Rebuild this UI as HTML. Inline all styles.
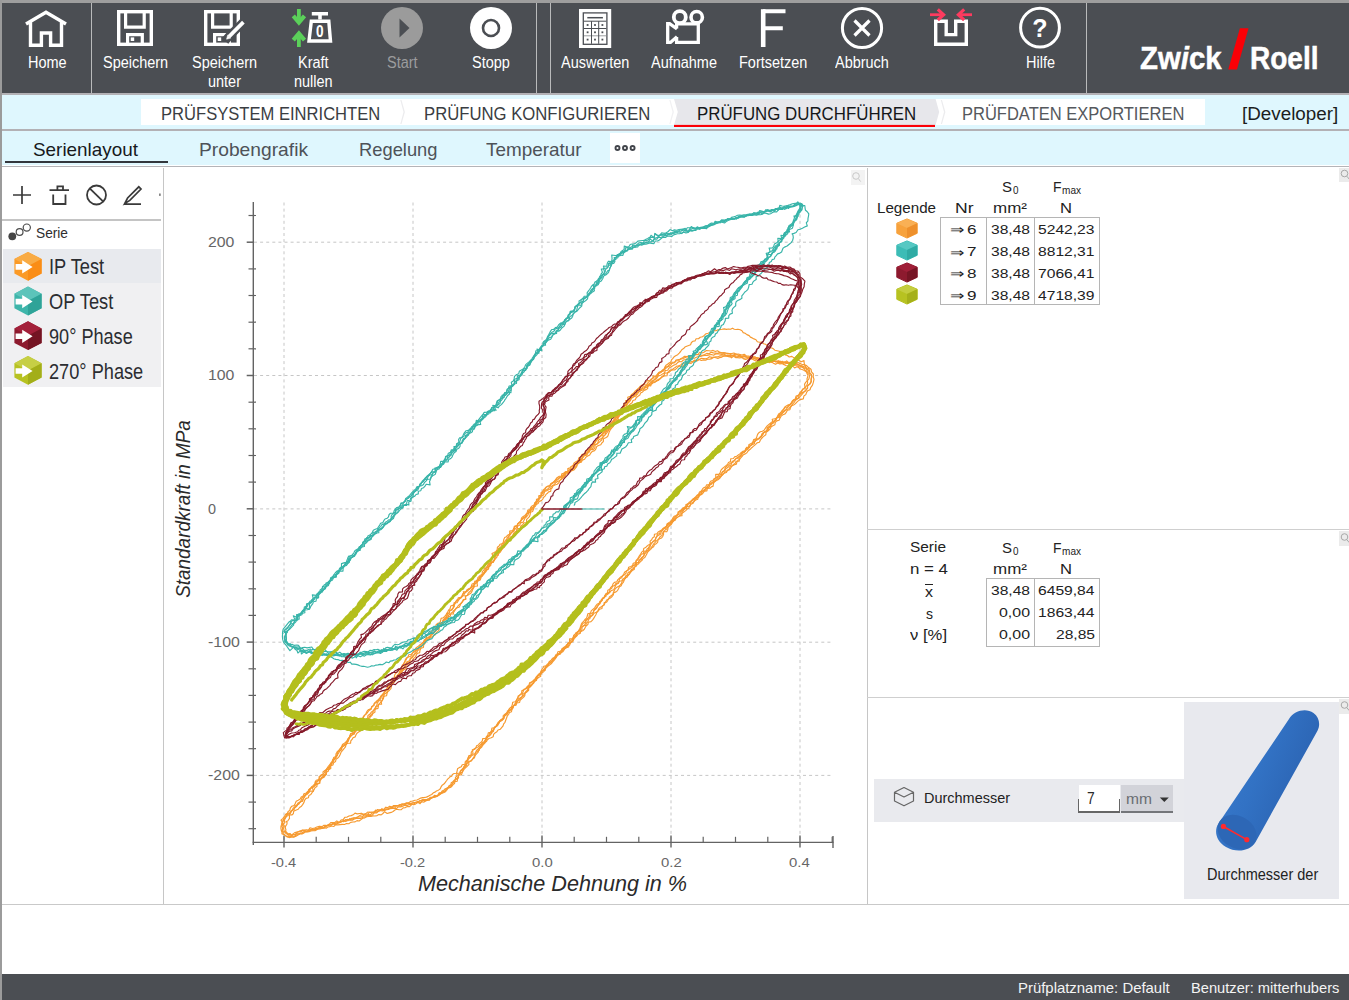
<!DOCTYPE html>
<html><head><meta charset="utf-8"><title>testXpert</title>
<style>
html,body{margin:0;padding:0;}
html{width:1349px;height:1000px;overflow:hidden;}
body{width:1349px;height:1000px;position:relative;overflow:hidden;background:#fff;font-family:"Liberation Sans",sans-serif;}
.a{position:absolute;}
.t{position:absolute;white-space:nowrap;transform-origin:0 50%;display:block;}
svg{position:absolute;left:0;top:0;overflow:visible;}
</style></head><body>

<div class="a" style="left:0px;top:0px;width:1349px;height:3px;background:#9e9e9e;"></div>
<div class="a" style="left:2px;top:3px;width:1347px;height:90px;background:#4b4e53;"></div>
<div class="a" style="left:2px;top:92.5px;width:1347px;height:2.0px;background:#b3b1b5;"></div>
<div class="a" style="left:2px;top:94.5px;width:1347px;height:34.0px;background:#dff7fe;"></div>
<div class="a" style="left:2px;top:128.6px;width:1347px;height:2.0999999999999943px;background:#b3b1b5;"></div>
<div class="a" style="left:2px;top:130.7px;width:1347px;height:34.20000000000002px;background:#dff7fe;"></div>
<div class="a" style="left:2px;top:166px;width:1347px;height:1.1999999999999886px;background:#b4b4b8;"></div>
<div class="a" style="left:0px;top:0px;width:2px;height:1000px;background:#9b9b9b;"></div>
<div class="a" style="left:2px;top:974px;width:1347px;height:26px;background:#4b4e53;"></div>
<div class="a" style="left:91px;top:3px;width:1.2999999999999972px;height:89.5px;background:#b9babb;"></div>
<div class="a" style="left:536px;top:3px;width:1.2999999999999545px;height:89.5px;background:#b9babb;"></div>
<div class="a" style="left:550px;top:3px;width:1.2999999999999545px;height:89.5px;background:#b9babb;"></div>
<div class="a" style="left:1086px;top:3px;width:1.2999999999999545px;height:89.5px;background:#b9babb;"></div>
<span class="t" style="left:27.5px;top:53.0px;font-size:15.8px;line-height:19px;color:#ffffff;transform:scaleX(0.9161);">Home</span>
<span class="t" style="left:102.9px;top:53.0px;font-size:15.8px;line-height:19px;color:#ffffff;transform:scaleX(0.9161);">Speichern</span>
<span class="t" style="left:191.8px;top:53.0px;font-size:15.8px;line-height:19px;color:#ffffff;transform:scaleX(0.9161);">Speichern</span>
<span class="t" style="left:207.9px;top:72.0px;font-size:15.8px;line-height:19px;color:#ffffff;transform:scaleX(0.9161);">unter</span>
<span class="t" style="left:297.7px;top:53.0px;font-size:15.8px;line-height:19px;color:#ffffff;transform:scaleX(0.9161);">Kraft</span>
<span class="t" style="left:293.7px;top:72.0px;font-size:15.8px;line-height:19px;color:#ffffff;transform:scaleX(0.9161);">nullen</span>
<span class="t" style="left:386.7px;top:53.0px;font-size:15.8px;line-height:19px;color:#9b9c9e;transform:scaleX(0.9161);">Start</span>
<span class="t" style="left:472.1px;top:53.0px;font-size:15.8px;line-height:19px;color:#ffffff;transform:scaleX(0.9161);">Stopp</span>
<span class="t" style="left:561.3px;top:53.0px;font-size:15.8px;line-height:19px;color:#ffffff;transform:scaleX(0.9161);">Auswerten</span>
<span class="t" style="left:651.0px;top:53.0px;font-size:15.8px;line-height:19px;color:#ffffff;transform:scaleX(0.9161);">Aufnahme</span>
<span class="t" style="left:738.8px;top:53.0px;font-size:15.8px;line-height:19px;color:#ffffff;transform:scaleX(0.9161);">Fortsetzen</span>
<span class="t" style="left:835.0px;top:53.0px;font-size:15.8px;line-height:19px;color:#ffffff;transform:scaleX(0.9161);">Abbruch</span>
<span class="t" style="left:1025.5px;top:53.0px;font-size:15.8px;line-height:19px;color:#ffffff;transform:scaleX(0.9161);">Hilfe</span>
<svg width="1349" height="100" viewBox="0 0 1349 100" fill="none" stroke="#fff">
<path d="M26 24 L46 12.2 L66 24 M30.5 22 V45.3 H41.4 V33 H50.6 V45.3 H61.5 V22" stroke-width="3.4" stroke-linejoin="miter"/>
<rect x="118.7" y="11.7" width="32.6" height="32.6" stroke-width="3.4"/>
<path d="M125.6 11 V27.2 H144.2 V11" stroke-width="3.2"/>
<path d="M127.6 45 V34.7 H142.3 V45" stroke-width="3.2"/>
<rect x="130.7" y="37.4" width="3.5" height="3.6" fill="#fff" stroke="none"/>
<rect x="205.7" y="11.7" width="32.6" height="32.6" stroke-width="3.4"/>
<path d="M212.6 11 V27.2 H231.2 V11" stroke-width="3.2"/>
<path d="M214.6 45 V34.7 H229.3 V45" stroke-width="3.2"/>
<rect x="217.7" y="37.4" width="3.5" height="3.6" fill="#fff" stroke="none"/>
<path d="M225 41 L228.5 37 L243.4 22" stroke="#4b4e53" stroke-width="8.6"/>
<path d="M229 36.6 L243.4 22.1" stroke-width="3.7" stroke-linecap="butt"/>
<path d="M226.6 39.2 L227.6 35.2 L230.6 38.1 Z" fill="#fff" stroke="#fff" stroke-width="0.6"/>
<path d="M298.9 9 V21" stroke="#5bd05a" stroke-width="3.8"/>
<path d="M293.3 15.8 L298.9 22.4 L304.5 15.8" stroke="#5bd05a" stroke-width="4.2" stroke-linejoin="miter"/>
<path d="M298.9 47 V35" stroke="#5bd05a" stroke-width="3.8"/>
<path d="M293.3 40.2 L298.9 33.6 L304.5 40.2" stroke="#5bd05a" stroke-width="4.2" stroke-linejoin="miter"/>
<path d="M311.3 21.2 H328.8 L330.5 41 H309 Z" stroke-width="3.4" stroke-linejoin="miter"/>
<path d="M320 19.5 V14 M311.8 13.8 H328" stroke-width="3.6"/>
<text x="319.8" y="36.9" font-family="Liberation Sans" font-weight="bold" font-size="16" fill="#fff" stroke="none" text-anchor="middle" transform="translate(319.8 0) scale(0.85 1) translate(-319.8 0)">0</text>
<circle cx="402" cy="28" r="21" fill="#9b9b9b" stroke="none"/>
<path d="M399.5 18.5 L409.5 28 L399.5 37.5 Z" fill="#4b4e53" stroke="none"/>
<circle cx="491" cy="28" r="21" fill="#fff" stroke="none"/>
<circle cx="491" cy="28" r="8" stroke="#4b4e53" stroke-width="2.6"/>
<rect x="579" y="9" width="32.2" height="39" fill="#fff" stroke="none"/>
<rect x="583.3" y="12.9" width="23.6" height="31.4" stroke="#4b4e53" stroke-width="1.3" fill="none"/>
<path d="M587.3 17.7 H602.9" stroke="#4b4e53" stroke-width="1.5"/>
<path d="M584 21.2 H606.3 M584 28.5 H606.3" stroke="#4b4e53" stroke-width="1"/>
<path d="M584 35.8 H606.3" stroke="#9c9ea1" stroke-width="1"/>
<path d="M591.5 21.2 V43.8 M598.7 21.2 V43.8" stroke="#4b4e53" stroke-width="1"/>
<rect x="586.7" y="24.1" width="1.8" height="1.8" fill="#4b4e53" stroke="none"/>
<rect x="594.1" y="24.1" width="1.8" height="1.8" fill="#4b4e53" stroke="none"/>
<rect x="601.5" y="24.1" width="1.8" height="1.8" fill="#4b4e53" stroke="none"/>
<rect x="586.7" y="31.4" width="1.8" height="1.8" fill="#4b4e53" stroke="none"/>
<rect x="594.1" y="31.4" width="1.8" height="1.8" fill="#4b4e53" stroke="none"/>
<rect x="601.5" y="31.4" width="1.8" height="1.8" fill="#4b4e53" stroke="none"/>
<rect x="586.7" y="38.7" width="1.8" height="1.8" fill="#4b4e53" stroke="none"/>
<rect x="594.1" y="38.7" width="1.8" height="1.8" fill="#4b4e53" stroke="none"/>
<rect x="601.5" y="38.7" width="1.8" height="1.8" fill="#4b4e53" stroke="none"/>
<circle cx="679.8" cy="17.2" r="6" stroke-width="3.8"/>
<circle cx="696.7" cy="17.2" r="5.7" stroke-width="3.6"/>
<path d="M676.6 28.4 V23.9 H698.3 V42.3 H676.6 V37" stroke-width="3.3" stroke-linejoin="miter"/>
<path d="M677 28.8 L669.6 23.7 H667.7 V42.4 H670.5 L677 36.8" stroke-width="3.3" stroke-linejoin="miter"/>
<path d="M763.2 47 V9.2" stroke-width="4.6"/><path d="M763 11.2 H785.5 M763 28.2 H782.8" stroke-width="4"/>
<circle cx="862" cy="28" r="19.6" stroke-width="3"/>
<path d="M854.5 20.5 L869.5 35.5 M869.5 20.5 L854.5 35.5" stroke-width="3.2"/>
<path d="M935.7 21.3 H946.2 V34.6 H955.7 V21.3 H966.3 V44.3 H935.7 Z" stroke-width="3.4" stroke-linejoin="miter"/>
<path d="M930 14.7 H943" stroke="#fd3b5f" stroke-width="2.8"/>
<path d="M937.8 9.4 L943.6 14.7 L937.8 20" stroke="#fd3b5f" stroke-width="3.2" stroke-linejoin="miter"/>
<path d="M972 14.7 H959" stroke="#fd3b5f" stroke-width="2.8"/>
<path d="M964.2 9.4 L958.4 14.7 L964.2 20" stroke="#fd3b5f" stroke-width="3.2" stroke-linejoin="miter"/>
<circle cx="1040" cy="27.7" r="19.4" stroke-width="3"/>
<text x="1040" y="37" font-family="Liberation Sans" font-weight="bold" font-size="25" fill="#fff" stroke="none" text-anchor="middle">?</text>
<path d="M1239.9 28.2 L1248.5 28.2 L1236.9 69.4 L1228.3 69.4 Z" fill="#fb0006" stroke="none"/>
</svg>
<span class="t" style="left:1140.4px;top:39.4px;font-size:32px;line-height:38px;color:#ffffff;transform:scaleX(0.9177);font-weight:bold;-webkit-text-stroke:0.5px #fff;">Zw<i>i</i>ck</span>
<span class="t" style="left:1249.7px;top:39.4px;font-size:32px;line-height:38px;color:#ffffff;transform:scaleX(0.8756);font-weight:bold;-webkit-text-stroke:0.5px #fff;">Roell</span>
<div class="a" style="left:141px;top:99px;width:1064px;height:26px;background:#ffffff;"></div>
<svg width="1349" height="200" viewBox="0 0 1349 200">
<path d="M674 99 H935.6 L939.2 112 L935.6 125 H674 L677.8 112 Z" fill="#e7e7eb"/>
<path d="M400.3 100 L403.5 112 L400.3 124 L401.5 124 L404.90000000000003 112 L401.5 100 Z" fill="#ececee"/>
<path d="M669.3 100 L672.5 112 L669.3 124 L670.5 124 L673.9 112 L670.5 100 Z" fill="#f1f1f3"/>
<path d="M940.8 100 L944.0 112 L940.8 124 L942.0 124 L945.4 112 L942.0 100 Z" fill="#ececee"/>
<rect x="674" y="124.9" width="261" height="2.1" fill="#fb0007"/>
</svg>
<span class="t" style="left:160.8px;top:102.7px;font-size:18.2px;line-height:22px;color:#3a3d42;transform:scaleX(0.9116);">PRÜFSYSTEM EINRICHTEN</span>
<span class="t" style="left:423.5px;top:102.7px;font-size:18.2px;line-height:22px;color:#3a3d42;transform:scaleX(0.9180);">PRÜFUNG KONFIGURIEREN</span>
<span class="t" style="left:697.0px;top:102.7px;font-size:18.2px;line-height:22px;color:#15171a;transform:scaleX(0.9273);">PRÜFUNG DURCHFÜHREN</span>
<span class="t" style="left:962.0px;top:102.7px;font-size:18.2px;line-height:22px;color:#55585d;transform:scaleX(0.9079);">PRÜFDATEN EXPORTIEREN</span>
<span class="t" style="left:1241.8px;top:102.8px;font-size:18px;line-height:22px;color:#1b1d20;transform:scaleX(1.0452);">[Developer]</span>
<span class="t" style="left:33.0px;top:137.8px;font-size:19px;line-height:23px;color:#17191c;transform:scaleX(0.9942);">Serienlayout</span>
<span class="t" style="left:199.0px;top:137.8px;font-size:19px;line-height:23px;color:#4e5258;transform:scaleX(1.0119);">Probengrafik</span>
<span class="t" style="left:359.0px;top:137.8px;font-size:19px;line-height:23px;color:#4e5258;transform:scaleX(0.9651);">Regelung</span>
<span class="t" style="left:486.0px;top:137.8px;font-size:19px;line-height:23px;color:#4e5258;transform:scaleX(0.9939);">Temperatur</span>
<div class="a" style="left:4.5px;top:161px;width:163.3px;height:2.1999999999999886px;background:#33373d;"></div>
<div class="a" style="left:610.1px;top:133px;width:29.799999999999955px;height:29.900000000000006px;background:#ffffff;"></div>
<svg width="1349" height="200" viewBox="0 0 1349 200" fill="none" stroke="#42454b" stroke-width="1.9"><circle cx="617.5" cy="148" r="2"/><circle cx="625" cy="148" r="2"/><circle cx="632.6" cy="148" r="2"/></svg>
<div class="a" style="left:162.5px;top:167.5px;width:1.1999999999999886px;height:736.5px;background:#c6c6c6;"></div>
<div class="a" style="left:2px;top:219.2px;width:159px;height:1.4000000000000057px;background:#c4c4c4;"></div>
<div class="a" style="left:3px;top:249px;width:158px;height:33.5px;background:#e8eaee;"></div>
<div class="a" style="left:3px;top:282.5px;width:158px;height:104.5px;background:#f0f0f2;"></div>
<svg width="400" height="400" viewBox="0 0 400 400" fill="none" stroke="#3a3a3a" stroke-width="1.7">
<path d="M22 186 V204 M13 195 H31"/>
<path d="M49.5 190.2 H69 M57.4 190 V186.4 H63 V190 M53.2 194.6 V204 H65.5 V194.6" stroke-width="1.8"/>
<circle cx="96.5" cy="195" r="9.5" stroke-width="1.8"/><path d="M89.7 188.3 L103.3 201.7" stroke-width="1.8"/>
<path d="M124 204.1 H141 M124.8 203.4 L127.6 198 L138.8 186.8 L141 189 L129.8 200.4 Z" stroke-width="1.7"/>
<rect x="159.2" y="193.5" width="1.4" height="2.4" fill="#666" stroke="none"/>
<circle cx="26.8" cy="227.6" r="3.6" stroke="#4c4c4c" stroke-width="1.2" fill="#fff"/>
<circle cx="19.6" cy="232" r="3.4" stroke="#4c4c4c" stroke-width="1.2" fill="#fff"/>
<circle cx="12.3" cy="236.3" r="3.9" fill="#454545" stroke="none"/>
<path d="M28.0 251.9 L41.6 259.1 L41.6 273.5 L28.0 280.7 L14.4 273.5 L14.4 259.1 Z" fill="#fb9a26" stroke="none"/>
<path d="M28.0 251.9 L41.6 259.1 L28.0 266.3 L14.4 259.1 Z" fill="#f9ab44" stroke="none"/>
<path d="M41.6 259.1 L41.6 273.5 L28.0 280.7 L28.0 266.3 Z" fill="#fa8d16" stroke="none"/>
<path d="M15.6 264.1 H22.2 V260.3 L32.6 266.9 L22.2 273.5 V269.7 H15.6 Z" fill="#fff" stroke="none"/>
<path d="M28.0 286.6 L41.6 293.8 L41.6 308.2 L28.0 315.4 L14.4 308.2 L14.4 293.8 Z" fill="#3db5aa" stroke="none"/>
<path d="M28.0 286.6 L41.6 293.8 L28.0 301.0 L14.4 293.8 Z" fill="#5cc4ba" stroke="none"/>
<path d="M41.6 293.8 L41.6 308.2 L28.0 315.4 L28.0 301.0 Z" fill="#2fa398" stroke="none"/>
<path d="M15.6 298.8 H22.2 V295.0 L32.6 301.6 L22.2 308.2 V304.4 H15.6 Z" fill="#fff" stroke="none"/>
<path d="M28.0 321.3 L41.6 328.5 L41.6 342.9 L28.0 350.1 L14.4 342.9 L14.4 328.5 Z" fill="#8d1a2e" stroke="none"/>
<path d="M28.0 321.3 L41.6 328.5 L28.0 335.7 L14.4 328.5 Z" fill="#a3203a" stroke="none"/>
<path d="M41.6 328.5 L41.6 342.9 L28.0 350.1 L28.0 335.7 Z" fill="#741423" stroke="none"/>
<path d="M15.6 333.5 H22.2 V329.7 L32.6 336.3 L22.2 342.9 V339.1 H15.6 Z" fill="#fff" stroke="none"/>
<path d="M28.0 356.0 L41.6 363.2 L41.6 377.6 L28.0 384.8 L14.4 377.6 L14.4 363.2 Z" fill="#b7c221" stroke="none"/>
<path d="M28.0 356.0 L41.6 363.2 L28.0 370.4 L14.4 363.2 Z" fill="#c6cf45" stroke="none"/>
<path d="M41.6 363.2 L41.6 377.6 L28.0 384.8 L28.0 370.4 Z" fill="#a3ae19" stroke="none"/>
<path d="M15.6 368.2 H22.2 V364.4 L32.6 371.0 L22.2 377.6 V373.8 H15.6 Z" fill="#fff" stroke="none"/>
</svg>
<span class="t" style="left:36.0px;top:224.7px;font-size:14.3px;line-height:17px;color:#2e2e2e;transform:scaleX(0.9586);">Serie</span>
<span class="t" style="left:48.8px;top:254.3px;font-size:22px;line-height:26px;color:#2b2d31;transform:scaleX(0.8307);">IP Test</span>
<span class="t" style="left:48.8px;top:289.2px;font-size:22px;line-height:26px;color:#2b2d31;transform:scaleX(0.8290);">OP Test</span>
<span class="t" style="left:48.8px;top:323.8px;font-size:22px;line-height:26px;color:#2b2d31;transform:scaleX(0.8226);">90° Phase</span>
<span class="t" style="left:48.8px;top:358.5px;font-size:22px;line-height:26px;color:#2b2d31;transform:scaleX(0.8264);">270° Phase</span>
<div class="a" style="left:2px;top:903.6px;width:1347px;height:1.3999999999999773px;background:#c9c9c9;"></div>
<div class="a" style="left:866.5px;top:167.5px;width:1.2000000000000455px;height:736.5px;background:#c6c6c6;"></div>
<div class="a" style="left:867px;top:529.2px;width:482px;height:1.1999999999999318px;background:#cfcfcf;"></div>
<div class="a" style="left:867px;top:697px;width:482px;height:1.2000000000000455px;background:#cfcfcf;"></div>
<div class="a" style="left:850.5px;top:170px;width:14.0px;height:14.5px;background:#f3f3f3;"></div>
<svg width="1349" height="1000" viewBox="0 0 1349 1000" fill="none" stroke="#c9c9c9" stroke-width="1"><circle cx="856.0" cy="176" r="3.3"/><path d="M858.5 178.8 L860.7 181.6"/></svg>
<div class="a" style="left:1339px;top:167.5px;width:10px;height:14.5px;background:#ebebeb;"></div>
<svg width="1349" height="1000" viewBox="0 0 1349 1000" fill="none" stroke="#a8a8a8" stroke-width="1"><circle cx="1344.5" cy="173.5" r="3.3"/><path d="M1347 176.3 L1349.2 179.1"/></svg>
<div class="a" style="left:1339px;top:531px;width:10px;height:14.5px;background:#ebebeb;"></div>
<svg width="1349" height="1000" viewBox="0 0 1349 1000" fill="none" stroke="#a8a8a8" stroke-width="1"><circle cx="1344.5" cy="537" r="3.3"/><path d="M1347 539.8 L1349.2 542.6"/></svg>
<div class="a" style="left:1339px;top:699px;width:10px;height:14.5px;background:#ebebeb;"></div>
<svg width="1349" height="1000" viewBox="0 0 1349 1000" fill="none" stroke="#a8a8a8" stroke-width="1"><circle cx="1344.5" cy="705" r="3.3"/><path d="M1347 707.8 L1349.2 710.6"/></svg>
<svg width="1349" height="1000" viewBox="0 0 1349 1000" fill="none">
<path d="M284 202.5 V842" stroke="#c6c6c6" stroke-width="1" stroke-dasharray="3 3.1"/>
<path d="M413 202.5 V842" stroke="#c6c6c6" stroke-width="1" stroke-dasharray="3 3.1"/>
<path d="M542 202.5 V842" stroke="#c6c6c6" stroke-width="1" stroke-dasharray="3 3.1"/>
<path d="M671 202.5 V842" stroke="#c6c6c6" stroke-width="1" stroke-dasharray="3 3.1"/>
<path d="M800 202.5 V842" stroke="#c6c6c6" stroke-width="1" stroke-dasharray="3 3.1"/>
<path d="M254 242.2 H833" stroke="#c6c6c6" stroke-width="1" stroke-dasharray="3 3.1"/>
<path d="M254 375.5 H833" stroke="#c6c6c6" stroke-width="1" stroke-dasharray="3 3.1"/>
<path d="M254 508.9 H833" stroke="#c6c6c6" stroke-width="1" stroke-dasharray="3 3.1"/>
<path d="M254 642.2 H833" stroke="#c6c6c6" stroke-width="1" stroke-dasharray="3 3.1"/>
<path d="M254 775.4 H833" stroke="#c6c6c6" stroke-width="1" stroke-dasharray="3 3.1"/>
<path d="M253.3 202 V845" stroke="#636363" stroke-width="1.4"/>
<path d="M252.6 842.4 H833.5" stroke="#636363" stroke-width="1.4"/>
<path d="M248.5 215.5 H256" stroke="#636363" stroke-width="1.2"/>
<path d="M246.7 242.2 H253.3" stroke="#636363" stroke-width="1.5"/>
<path d="M248.5 268.9 H256" stroke="#636363" stroke-width="1.2"/>
<path d="M248.5 295.5 H256" stroke="#636363" stroke-width="1.2"/>
<path d="M248.5 322.2 H256" stroke="#636363" stroke-width="1.2"/>
<path d="M248.5 348.8 H256" stroke="#636363" stroke-width="1.2"/>
<path d="M246.7 375.5 H253.3" stroke="#636363" stroke-width="1.5"/>
<path d="M248.5 402.2 H256" stroke="#636363" stroke-width="1.2"/>
<path d="M248.5 428.8 H256" stroke="#636363" stroke-width="1.2"/>
<path d="M248.5 455.5 H256" stroke="#636363" stroke-width="1.2"/>
<path d="M248.5 482.1 H256" stroke="#636363" stroke-width="1.2"/>
<path d="M246.7 508.8 H253.3" stroke="#636363" stroke-width="1.5"/>
<path d="M248.5 535.5 H256" stroke="#636363" stroke-width="1.2"/>
<path d="M248.5 562.1 H256" stroke="#636363" stroke-width="1.2"/>
<path d="M248.5 588.8 H256" stroke="#636363" stroke-width="1.2"/>
<path d="M248.5 615.4 H256" stroke="#636363" stroke-width="1.2"/>
<path d="M246.7 642.1 H253.3" stroke="#636363" stroke-width="1.5"/>
<path d="M248.5 668.8 H256" stroke="#636363" stroke-width="1.2"/>
<path d="M248.5 695.4 H256" stroke="#636363" stroke-width="1.2"/>
<path d="M248.5 722.1 H256" stroke="#636363" stroke-width="1.2"/>
<path d="M248.5 748.7 H256" stroke="#636363" stroke-width="1.2"/>
<path d="M246.7 775.4 H253.3" stroke="#636363" stroke-width="1.5"/>
<path d="M248.5 802.1 H256" stroke="#636363" stroke-width="1.2"/>
<path d="M248.5 828.7 H256" stroke="#636363" stroke-width="1.2"/>
<path d="M284.0 835.5 V847.5" stroke="#636363" stroke-width="1.4"/>
<path d="M316.2 836.8 V843" stroke="#636363" stroke-width="1.2"/>
<path d="M348.5 836.8 V843" stroke="#636363" stroke-width="1.2"/>
<path d="M380.8 836.8 V843" stroke="#636363" stroke-width="1.2"/>
<path d="M413.0 835.5 V847.5" stroke="#636363" stroke-width="1.4"/>
<path d="M445.2 836.8 V843" stroke="#636363" stroke-width="1.2"/>
<path d="M477.5 836.8 V843" stroke="#636363" stroke-width="1.2"/>
<path d="M509.8 836.8 V843" stroke="#636363" stroke-width="1.2"/>
<path d="M542.0 835.5 V847.5" stroke="#636363" stroke-width="1.4"/>
<path d="M574.2 836.8 V843" stroke="#636363" stroke-width="1.2"/>
<path d="M606.5 836.8 V843" stroke="#636363" stroke-width="1.2"/>
<path d="M638.8 836.8 V843" stroke="#636363" stroke-width="1.2"/>
<path d="M671.0 835.5 V847.5" stroke="#636363" stroke-width="1.4"/>
<path d="M703.2 836.8 V843" stroke="#636363" stroke-width="1.2"/>
<path d="M735.5 836.8 V843" stroke="#636363" stroke-width="1.2"/>
<path d="M767.8 836.8 V843" stroke="#636363" stroke-width="1.2"/>
<path d="M800.0 835.5 V847.5" stroke="#636363" stroke-width="1.4"/>
<path d="M832.2 836.8 V843" stroke="#636363" stroke-width="1.2"/>
<path d="M833 836 V848" stroke="#636363" stroke-width="1.4"/>
<g stroke-linejoin="round" stroke-linecap="round">
<path d="M283.7 832.1L282.1 830.6L282.6 828.3L283.3 826.1L281.7 823.9L282.8 822.3L283.2 820.8L283.7 818.8L286.4 816.3L287.1 815.1L287.6 813.4L289.8 812.9L291.0 811.5L292.6 810.1L294.3 808.8L295.4 806.8L296.9 805.1L298.0 803.0L300.3 802.1L301.3 799.9L302.0 797.7L303.7 796.4L305.1 794.9L306.7 793.4L308.8 792.5L308.7 789.7L310.2 788.4L312.2 787.5L313.9 786.5L314.8 784.6L315.1 782.1L316.2 780.2L318.8 779.5L319.8 777.2L321.2 775.0L323.1 774.3L324.3 772.9L325.0 771.2L326.2 769.7L327.5 768.2L329.2 767.1L329.9 765.2L331.1 763.5L332.4 761.9L332.7 759.5L335.3 758.7L336.4 756.9L337.6 755.0L337.8 752.4L339.7 751.0L341.7 749.7L341.9 747.0L344.0 745.8L345.9 744.3L345.9 742.0L348.3 741.4L348.9 739.4L349.7 737.6L351.0 736.2L352.3 734.7L353.2 732.9L354.7 731.6L355.1 729.4L356.3 727.8L358.1 726.6L358.8 724.6L359.6 722.6L361.6 721.5L363.0 719.9L363.4 717.5L364.3 715.4L366.2 714.1L367.6 712.3L369.0 710.5L371.2 709.2L371.6 706.6L374.1 705.5L374.2 703.3L375.6 702.0L377.4 701.0L378.8 699.7L379.9 698.1L381.0 696.5L382.1 694.9L383.4 693.3L384.9 691.9L385.8 690.0L387.3 688.6L388.8 687.1L389.9 685.3L391.7 684.0L393.0 682.3L395.0 681.2L395.7 679.1L396.7 677.2L398.2 675.6L399.8 674.2L401.6 672.9L402.4 670.9L404.2 669.5L406.2 668.5L405.7 665.4L407.7 664.4L409.7 663.3L411.2 661.9L412.5 660.3L413.4 658.5L415.1 657.3L416.2 655.4L417.1 653.4L419.6 652.8L420.0 650.3L421.0 648.3L423.4 647.5L423.7 645.0L425.1 643.3L425.3 640.7L427.6 639.8L429.5 638.6L429.9 636.2L431.7 634.9L433.4 633.6L434.7 631.9L436.3 630.5L436.4 627.8L438.4 626.8L439.8 625.3L441.6 624.1L443.1 622.8L442.9 620.0L445.9 619.9L446.1 617.6L448.3 616.9L448.7 614.8L450.7 614.0L453.5 614.0L453.0 611.2L454.8 609.6L456.6 608.1L457.9 606.2L459.3 604.5L461.3 603.4L462.4 601.6L463.2 599.6L465.7 599.1L465.3 596.1L467.4 595.3L468.1 593.4L469.4 592.0L470.9 590.7L471.9 589.0L473.3 587.6L473.6 585.3L474.8 583.7L476.9 582.8L477.5 580.6L478.8 578.8L479.9 576.9L482.2 576.3L483.1 574.6L484.6 573.3L484.8 571.0L486.4 569.7L487.2 567.8L489.2 566.8L490.8 565.4L491.0 563.0L493.3 562.1L494.3 560.3L495.0 558.3L495.4 556.0L498.1 555.5L498.7 553.3L499.7 551.5L501.4 550.2L502.6 548.6L504.3 547.3L504.3 544.9L506.5 544.0L507.8 542.5L508.9 541.0L509.3 538.9L510.2 537.2L512.3 536.0L513.3 533.9L514.6 532.2L516.5 530.9L517.2 528.6L517.6 526.2L519.8 525.1L520.5 522.9L522.9 522.2L524.0 520.3L524.9 518.3L526.3 516.8L527.8 515.3L528.6 513.3L530.2 512.1L530.7 509.9L532.3 508.6L533.5 507.1L534.6 505.5L534.7 503.1L536.4 502.1L536.5 499.2L539.0 498.6L538.7 495.7L541.0 495.2L541.0 492.8L542.5 491.6L543.4 490.0L544.7 488.7L545.9 487.3L547.7 486.4L549.8 485.7L550.6 483.9L552.4 482.7L554.3 481.5L555.6 479.6L557.0 477.7L559.3 476.3L561.4 476.0L561.8 473.9L563.7 473.3L565.9 472.8L567.4 471.7L568.8 470.2L570.7 469.4L571.0 466.7L573.2 466.0L574.6 464.4L576.5 463.3L578.6 462.5L579.6 460.4L581.1 458.7L582.7 457.2L584.0 455.4L586.1 454.4L587.3 452.5L589.4 451.6L589.9 449.0L592.5 448.5L593.6 446.6L594.6 444.6L597.0 444.1L598.0 442.2L598.6 440.0L600.5 439.0L602.4 437.8L603.5 435.9L605.4 434.6L606.8 432.8L608.1 431.1L609.3 429.2L611.0 427.8L612.0 425.8L613.2 424.0L613.3 421.4L615.9 420.6L617.3 419.0L617.8 416.7L618.9 415.0L621.1 414.1L620.7 411.3L622.6 410.2L624.4 409.1L623.9 406.3L625.6 405.2L627.0 404.0L627.2 401.7L628.4 400.4L629.6 399.1L630.4 396.5L632.3 394.9L634.0 393.4L635.7 391.9L637.0 389.9L638.6 388.3L639.9 386.5L641.7 385.4L643.6 384.6L644.9 383.0L646.3 381.5L647.9 380.5L650.5 381.1L651.5 379.4L652.8 378.2L653.1 375.8L655.4 376.3L657.3 374.7L658.9 372.9L660.9 371.8L662.3 370.2L664.2 369.1L664.9 366.7L667.5 366.7L668.9 365.2L670.3 363.5L672.7 363.3L674.7 362.6L676.0 360.0L678.4 359.5L680.8 359.2L682.9 358.5L685.0 357.6L687.1 356.7L689.7 357.8L691.7 356.8L693.6 355.2L695.8 354.7L698.0 354.5L700.3 355.2L702.6 355.4L704.7 354.6L706.8 353.4L709.1 353.8L711.1 352.3L713.4 352.9L715.5 353.1L717.6 353.3L719.5 352.6L721.8 352.9L723.9 353.2L726.0 353.3L727.9 353.6L729.9 353.6L731.9 353.5L733.9 353.0L735.9 354.3L738.2 354.1L740.1 354.5L742.0 355.1L744.2 354.3L746.2 355.8L748.3 356.1L750.4 356.6L752.6 356.9L754.8 356.7L756.8 358.0L758.9 358.8L761.0 358.9L763.2 358.9L765.2 359.7L767.5 359.4L769.7 359.3L771.5 362.3L773.9 360.7L775.9 362.0L778.1 361.4L780.3 361.1L782.1 362.4L783.7 364.2L786.2 363.5L788.7 363.4L790.9 364.1L793.0 365.1L795.1 365.5L797.2 365.7L798.9 366.9L800.7 367.0L802.3 367.2L804.3 368.8L805.5 370.5L807.0 371.8L807.8 373.4L809.5 374.9L809.4 376.9L808.9 378.9L807.5 380.7L807.6 383.1L806.7 385.5L805.6 386.9L805.0 388.7L802.6 389.2L801.8 391.2L800.9 393.3L799.0 395.0L796.1 396.0L795.2 399.2L793.6 399.9L792.3 401.0L791.3 402.7L790.4 404.4L788.4 405.3L787.8 407.5L785.0 407.7L783.6 409.3L782.5 411.2L780.7 412.5L779.4 414.3L778.1 416.1L776.7 417.8L775.4 419.5L774.7 421.7L772.9 422.9L771.5 424.3L769.9 425.5L769.3 427.6L767.6 428.6L767.0 430.6L765.3 431.5L763.6 432.5L762.4 433.9L761.3 435.6L760.0 437.1L758.9 438.9L756.1 439.0L755.0 441.0L753.1 442.3L752.1 444.6L750.0 446.0L749.4 447.8L747.0 447.9L745.6 449.0L745.4 451.3L743.2 451.8L741.6 452.8L741.1 455.0L739.6 456.3L737.9 457.3L736.2 458.5L735.0 460.2L733.0 461.0L731.4 462.4L729.8 463.7L728.3 465.2L726.5 466.4L725.1 468.0L724.5 470.5L722.6 471.8L721.2 473.5L719.7 475.1L717.7 476.3L716.0 477.8L714.2 479.2L713.7 481.3L712.3 482.5L710.4 483.3L709.1 484.7L707.8 486.2L706.4 487.6L705.3 489.3L703.4 490.2L702.2 491.9L701.0 493.6L699.8 495.3L698.2 496.6L697.8 499.2L695.7 500.0L694.0 501.2L693.1 503.3L691.1 504.2L689.7 505.8L688.9 507.9L687.1 509.1L685.7 510.6L684.0 511.9L682.3 513.0L680.9 514.5L679.6 516.1L677.7 517.0L676.0 518.2L674.1 519.1L672.7 520.4L671.6 522.0L670.2 523.6L668.1 524.5L666.6 526.0L665.2 527.5L663.1 528.4L661.7 529.9L659.9 531.0L658.1 532.1L656.9 533.8L654.4 534.3L654.3 536.8L652.5 537.9L651.7 539.8L650.1 541.1L650.4 543.9L648.5 544.9L646.9 546.2L645.6 547.6L643.7 548.6L643.3 550.9L641.7 552.1L640.8 553.9L639.5 555.5L638.5 557.2L637.6 559.0L636.1 560.4L635.5 562.6L633.2 563.2L632.7 565.5L630.8 566.5L628.6 567.3L628.1 569.6L626.6 571.0L624.7 572.1L623.7 574.0L622.6 575.8L620.7 576.9L619.2 578.3L617.7 579.8L616.9 581.8L614.4 582.4L613.0 583.9L612.3 586.0L610.8 587.4L609.8 589.2L607.8 590.2L607.6 592.6L605.9 593.8L605.2 595.8L604.2 597.5L602.5 598.6L601.2 600.0L600.7 602.1L599.9 603.9L598.1 605.2L597.2 607.4L595.8 609.1L594.1 610.5L593.1 612.4L592.6 614.8L590.3 615.7L590.1 618.2L588.5 619.7L587.9 621.8L586.3 623.2L585.8 625.4L583.0 625.8L582.0 627.5L581.9 630.0L580.8 631.6L579.7 633.2L576.1 632.7L576.9 635.7L575.6 637.0L574.5 638.5L573.4 639.8L572.7 641.4L570.6 642.9L569.7 645.1L567.7 646.2L566.2 647.4L564.9 648.7L563.9 650.2L562.9 651.7L561.2 652.5L560.2 653.9L558.1 654.5L557.0 656.1L555.9 658.0L554.5 659.8L552.9 661.7L551.2 663.8L549.8 664.8L548.5 665.7L547.2 666.9L546.0 668.2L544.2 669.0L544.1 671.4L542.6 672.6L540.1 673.0L540.8 676.2L538.9 677.2L537.3 678.5L536.0 680.1L534.5 681.6L533.4 683.4L531.8 684.8L530.5 686.5L528.8 687.9L528.6 690.5L526.7 691.8L525.0 693.1L524.0 695.1L522.6 696.7L520.5 697.8L519.6 699.8L517.7 701.0L516.2 702.5L515.0 704.2L513.6 705.7L512.5 707.4L511.8 709.3L509.8 710.4L508.3 711.7L507.4 713.6L505.8 715.0L504.1 716.3L503.5 718.4L501.5 719.5L499.6 720.7L499.3 723.1L497.6 724.4L496.5 726.2L494.5 727.3L493.8 729.4L492.3 730.8L491.8 733.0L490.3 734.4L489.1 736.0L487.3 737.2L486.0 738.7L485.1 740.5L485.1 743.0L482.8 743.7L482.1 745.5L480.7 746.8L479.6 748.3L479.3 750.3L477.6 751.3L475.5 752.5L475.0 755.1L473.8 757.1L472.5 759.0L471.1 760.8L469.1 762.0L467.2 763.3L466.4 765.4L465.2 767.2L463.0 768.2L462.9 770.8L461.7 772.5L460.0 773.6L458.7 775.1L458.2 777.2L457.1 778.7L455.3 779.6L454.2 781.0L453.6 782.8L452.1 783.7L451.1 785.0L449.7 785.7L447.9 787.9L446.1 789.6L444.6 791.1L442.6 791.8L441.1 792.7L440.1 794.5L438.3 794.8L437.0 796.4L435.0 796.9L432.9 797.4L430.4 798.0L429.2 799.7L427.4 800.2L425.6 800.7L424.0 802.1L421.8 801.8L419.9 802.7L417.7 802.6L415.8 803.9L413.8 804.8L411.3 804.2L409.1 804.6L407.1 805.5L404.7 805.2L402.7 806.3L400.6 806.9L398.4 806.8L396.6 808.4L394.4 808.4L392.3 808.5L390.2 808.6L388.3 809.5L386.2 809.5L384.2 810.4L382.0 810.2L379.8 809.8L378.1 811.4L375.6 810.1L374.0 812.0L371.8 812.0L369.7 812.2L367.6 812.1L365.8 813.6L363.9 814.4L361.4 813.2L359.4 813.5L357.3 813.9L355.0 813.1L353.2 814.8L351.2 815.6L349.0 816.0L347.1 817.1L344.8 817.3L343.2 819.6L341.0 820.0L339.4 822.4L336.8 820.9L334.9 822.4L332.8 822.5L330.7 822.6L329.2 824.5L327.4 825.4L325.7 826.2L324.1 827.1L322.5 827.7L319.8 828.0L317.4 829.0L315.1 829.4L312.9 830.0L310.6 829.9L308.6 830.5L306.8 831.2L304.9 831.1L303.3 831.9L301.9 832.8L300.4 833.2L297.2 833.2L295.3 834.8L292.9 834.6L291.5 835.6L289.9 836.7L288.0 834.4L285.9 833.5L284.8 831.4" stroke="#f69a30" stroke-width="1.15" stroke-opacity="1.0"/>
<path d="M282.1 832.8L281.4 830.8L280.9 828.5L281.0 826.1L281.8 823.9L282.5 822.3L281.0 820.2L283.0 818.3L285.1 815.3L285.9 814.1L287.5 813.3L288.1 811.5L289.8 810.4L290.3 808.1L291.6 806.3L294.1 805.6L295.2 803.6L296.2 801.3L298.2 800.2L300.2 799.0L301.2 796.9L303.2 795.9L303.9 793.8L306.3 793.0L307.7 791.5L309.0 789.9L310.4 788.5L311.9 787.3L313.9 786.5L315.3 785.1L315.5 782.5L317.4 781.3L319.4 780.0L321.2 778.3L322.5 776.0L324.5 775.4L326.3 774.5L325.7 771.7L326.7 770.1L328.3 768.9L329.8 767.6L330.8 765.8L331.6 763.8L332.9 762.2L333.8 760.3L334.9 758.5L336.0 756.6L337.1 754.6L338.7 753.1L339.7 751.0L341.1 749.3L342.0 747.1L344.1 745.8L346.1 744.5L346.7 742.6L347.6 740.8L348.1 738.8L349.2 737.3L350.3 735.7L350.7 733.5L352.9 732.7L353.0 730.4L355.3 729.6L356.2 727.7L356.9 725.8L357.8 723.8L359.7 722.7L360.5 720.7L362.6 719.5L363.0 717.1L364.5 715.5L365.8 713.8L366.8 711.7L368.2 709.9L370.7 708.9L372.1 707.0L373.5 705.0L374.5 703.5L376.3 702.6L376.9 700.6L380.3 700.8L380.0 698.2L380.7 696.3L382.3 694.9L383.7 693.5L384.9 691.9L386.6 690.6L387.5 688.7L388.8 687.1L390.0 685.3L391.3 683.7L393.2 682.5L394.5 680.8L394.4 678.1L396.9 677.3L397.5 675.1L399.2 673.8L400.7 672.2L402.5 670.9L403.0 668.6L404.6 667.2L405.3 665.1L406.0 663.0L407.4 661.5L409.7 660.7L410.2 658.5L411.7 657.1L413.4 656.0L414.6 654.2L415.3 652.0L416.6 650.3L417.6 648.3L420.0 647.5L420.2 644.9L422.0 643.6L423.3 641.9L424.6 640.1L426.4 638.8L426.6 636.2L428.2 634.7L430.0 633.4L431.1 631.6L432.9 630.3L433.2 627.8L435.5 627.0L436.1 624.8L437.7 623.4L439.9 622.7L440.6 620.6L441.1 618.4L443.3 617.7L444.8 616.4L445.9 614.8L446.9 613.2L447.9 611.6L448.7 609.9L450.1 608.7L450.7 606.0L453.2 605.1L455.2 603.8L455.8 601.5L457.1 599.7L459.1 598.7L460.8 597.5L462.0 595.9L462.7 593.8L464.7 593.0L466.3 591.8L467.9 590.7L469.2 589.2L470.5 587.8L472.4 586.9L474.0 585.6L474.2 583.1L475.7 581.7L477.5 580.6L478.9 578.9L480.5 577.4L481.9 576.1L483.1 574.6L483.7 572.6L485.2 571.2L485.3 568.9L486.6 567.3L487.5 565.5L488.7 563.9L491.2 563.2L491.1 560.6L491.6 558.3L492.9 556.7L492.0 553.5L494.1 552.6L496.0 551.4L497.2 549.7L497.4 547.3L499.1 546.0L500.0 544.2L502.6 543.5L503.4 541.7L503.8 539.5L504.6 537.6L506.5 536.7L507.6 535.2L509.9 534.1L509.7 531.1L512.6 530.6L513.7 528.6L514.3 526.3L516.9 525.6L518.0 523.7L519.8 522.4L521.0 520.6L522.5 519.1L524.0 517.6L525.7 516.3L526.6 514.4L528.1 512.9L528.7 510.8L531.2 510.3L531.3 507.8L533.4 507.0L534.4 505.3L535.2 503.5L536.7 502.3L538.3 500.8L539.3 498.8L540.1 496.9L541.6 495.7L543.7 494.9L544.1 492.9L545.0 491.3L547.0 490.6L548.6 489.7L550.4 488.7L551.2 487.0L552.4 485.4L554.3 484.4L555.7 482.8L557.6 481.5L559.9 480.4L561.8 478.8L562.2 476.8L564.7 476.8L565.7 475.3L565.7 472.6L568.1 472.4L570.4 471.9L571.9 470.6L574.0 469.9L575.3 468.3L576.7 466.7L577.3 464.2L578.7 462.6L580.7 461.5L581.6 459.3L582.8 457.3L584.2 455.6L586.0 454.3L587.4 452.6L588.7 450.8L589.9 448.9L591.3 447.3L592.7 445.6L594.0 444.0L595.4 442.4L595.9 440.2L597.2 438.7L598.7 437.5L600.5 436.1L601.6 434.3L604.1 433.5L604.5 431.0L605.6 429.2L607.6 428.0L609.1 426.3L610.8 424.9L612.9 423.7L613.2 421.3L614.6 419.7L616.0 418.1L617.2 416.4L619.8 415.6L619.8 413.1L621.8 412.1L623.0 410.5L624.2 408.9L625.7 407.7L626.3 405.8L627.0 403.9L628.2 402.6L629.6 401.5L630.2 399.7L631.9 398.0L633.8 396.6L635.2 394.8L637.6 394.2L638.5 391.9L640.4 390.9L641.6 388.9L643.5 388.1L645.3 387.1L646.7 385.7L648.6 385.1L650.2 384.0L652.2 383.7L653.2 381.9L655.1 381.6L656.9 381.1L658.0 379.6L660.4 378.6L662.3 377.0L664.3 376.0L667.0 375.8L667.4 373.1L669.3 372.2L670.7 370.8L672.2 369.7L674.6 370.0L676.0 368.9L677.4 367.6L678.9 366.0L681.6 366.9L683.3 365.7L684.9 364.2L686.8 363.3L689.0 363.1L691.2 363.4L693.0 361.9L695.0 361.0L697.3 360.8L699.0 359.4L701.4 360.5L703.4 359.9L705.6 360.1L707.6 359.3L709.8 359.1L711.9 358.6L713.8 357.2L715.9 357.7L717.9 358.5L719.7 357.6L721.9 357.1L723.9 356.0L725.8 356.3L727.7 356.4L729.6 356.9L731.6 355.9L733.7 355.2L735.8 355.8L738.0 356.0L739.8 357.0L741.9 356.6L744.1 355.5L746.0 356.8L748.1 357.6L750.3 357.3L752.6 356.8L754.5 358.7L756.9 357.6L759.0 358.0L760.8 360.1L763.1 359.4L765.4 358.6L767.4 360.2L769.5 360.4L771.6 361.1L773.8 361.4L776.0 361.1L778.0 362.3L779.9 362.8L782.0 362.8L784.2 361.8L786.4 362.9L788.6 363.7L790.9 363.7L793.2 364.3L795.4 364.4L797.6 364.0L799.2 365.6L801.2 365.4L802.8 366.2L805.4 367.2L807.1 369.1L808.7 370.7L808.8 373.0L811.4 374.4L811.5 376.8L811.0 379.1L811.4 381.7L810.0 384.1L807.3 385.9L807.4 388.0L806.4 389.7L804.9 391.0L803.5 392.6L802.0 394.3L800.4 396.2L798.6 398.3L795.9 399.9L794.9 401.2L794.0 402.7L792.6 403.9L791.7 405.7L790.1 407.0L788.9 408.7L786.9 409.6L784.6 410.3L783.1 411.9L782.0 413.8L780.4 415.3L778.3 416.3L776.7 417.8L775.7 419.8L773.8 420.9L771.9 421.9L770.4 423.3L768.9 424.5L767.4 425.7L766.2 427.2L765.1 428.7L764.1 430.3L762.4 431.3L760.3 431.8L758.6 432.9L757.5 434.6L756.8 436.7L756.0 438.9L753.6 439.6L752.9 442.1L751.1 443.6L748.8 444.8L748.7 447.1L747.5 448.4L746.1 449.5L745.4 451.4L743.7 452.3L742.2 453.5L741.8 455.8L739.9 456.6L739.7 459.2L738.0 460.3L736.9 462.1L736.3 464.3L733.9 464.9L732.0 466.0L730.9 467.8L729.7 469.6L727.4 470.4L726.4 472.5L724.1 473.3L722.5 474.8L721.1 476.5L719.7 478.3L718.0 479.8L715.7 480.7L714.2 481.8L713.4 483.7L713.1 486.1L711.3 486.9L709.8 488.3L707.3 488.4L706.9 490.9L704.3 491.1L703.2 492.9L701.8 494.4L699.7 495.1L698.7 497.2L696.6 498.0L695.1 499.4L694.2 501.5L692.4 502.6L690.4 503.5L690.1 506.3L687.3 506.4L686.2 508.2L684.3 509.2L683.2 511.0L681.8 512.6L682.0 515.6L679.4 515.9L677.8 517.1L676.1 518.3L675.2 520.2L673.3 521.0L672.0 522.4L670.6 524.0L669.1 525.5L667.7 527.0L666.8 529.0L665.0 530.1L663.9 531.8L662.4 533.2L662.0 535.6L660.2 536.6L659.0 538.3L657.6 539.8L656.2 541.1L654.9 542.7L653.5 544.1L652.6 545.9L651.4 547.4L649.7 548.6L648.6 550.3L646.9 551.4L645.7 552.9L644.1 554.2L643.5 556.3L641.9 557.5L640.6 559.0L639.3 560.5L638.4 562.4L635.9 562.9L635.4 565.1L632.6 565.4L633.4 568.8L631.8 570.2L630.3 571.6L629.4 573.6L628.2 575.2L627.2 577.1L625.0 577.9L624.2 580.0L623.5 582.1L622.1 583.6L621.2 585.7L619.4 586.8L618.5 588.7L617.5 590.6L616.0 591.9L613.8 592.7L613.3 595.0L612.1 596.5L610.6 597.9L608.6 598.7L607.7 600.6L606.6 602.1L604.2 602.6L603.9 604.8L602.6 606.2L600.4 607.2L598.8 608.7L597.9 610.8L596.4 612.3L594.0 613.2L592.9 615.0L591.3 616.4L589.0 617.4L587.7 619.0L586.2 620.5L585.6 622.7L584.8 624.6L583.4 626.1L581.3 627.0L580.7 629.1L580.0 631.0L577.8 631.6L576.5 633.1L576.2 635.2L574.9 636.5L573.1 637.3L573.0 639.4L571.0 640.0L569.7 642.1L567.7 643.3L567.0 645.6L565.5 646.7L564.4 648.2L562.2 648.6L561.4 650.2L560.8 652.1L559.4 653.2L557.8 654.2L556.6 655.8L554.9 657.0L554.1 659.4L552.2 661.0L550.0 662.8L548.6 663.6L548.3 665.6L546.1 666.0L545.2 667.5L545.4 670.1L543.2 670.6L541.7 671.8L540.8 673.6L539.6 675.1L537.7 676.2L536.8 678.0L536.5 680.5L534.2 681.3L532.8 682.9L532.0 685.0L529.6 685.7L528.7 687.8L528.0 690.0L526.0 691.2L524.9 693.0L522.9 694.2L522.1 696.3L520.6 697.9L518.4 698.8L517.8 701.1L516.4 702.6L514.8 704.0L513.7 705.8L511.8 706.8L511.3 709.0L509.7 710.2L507.3 711.0L507.6 713.7L505.9 715.1L504.1 716.2L503.8 718.7L502.4 720.2L500.3 721.3L498.2 722.3L497.2 724.1L496.2 725.9L495.0 727.7L492.0 728.0L491.5 730.2L490.8 732.2L488.3 732.8L487.8 735.1L486.5 736.6L485.6 738.4L482.7 738.6L482.3 740.8L481.1 742.3L479.5 743.4L478.4 745.0L476.5 745.8L476.0 747.7L474.5 748.8L472.8 750.3L471.3 752.1L471.1 754.9L469.9 756.8L467.9 758.1L467.4 760.6L465.9 762.2L466.2 765.2L464.1 766.3L463.5 768.5L462.1 770.1L460.4 771.3L460.3 773.9L458.3 774.8L458.6 777.6L457.5 779.1L457.2 781.3L454.9 781.6L454.5 783.6L453.1 784.6L452.1 786.0L451.0 787.1L448.1 788.1L446.7 790.3L445.2 791.9L443.3 792.8L441.6 793.5L440.0 794.2L438.7 795.5L437.0 796.3L435.1 796.9L432.9 797.5L430.6 798.7L429.4 800.2L427.4 800.1L425.6 800.9L423.4 800.2L421.7 801.4L420.1 803.7L417.4 801.5L415.5 802.8L413.2 802.7L411.1 803.3L408.9 803.4L406.6 803.4L404.6 804.7L402.4 805.0L400.0 804.5L398.0 805.5L395.9 805.6L393.7 805.5L391.9 806.9L389.6 806.3L387.8 807.6L385.5 807.2L384.0 809.5L381.7 808.9L380.0 810.6L378.1 811.5L376.4 813.0L374.1 812.7L372.6 814.9L370.6 815.4L368.4 815.3L366.5 816.3L364.8 817.9L362.8 818.2L361.0 819.6L359.2 821.0L357.0 820.6L355.1 821.9L352.9 822.0L350.7 822.4L348.8 823.7L346.5 823.6L344.5 824.5L342.2 824.4L340.0 824.6L337.8 824.9L335.5 824.6L333.9 826.5L331.6 826.0L329.7 826.6L327.8 827.0L326.2 828.2L324.2 827.8L322.6 828.2L320.0 828.9L317.5 829.3L315.4 830.6L313.0 830.7L310.9 830.9L309.0 831.8L307.0 831.9L305.1 832.0L303.6 833.0L302.2 833.8L300.6 833.8L298.0 835.1L296.0 836.2L294.1 837.1L291.8 836.7L289.9 837.6L286.9 836.8L284.5 835.0L281.8 833.7" stroke="#f69a30" stroke-width="1.15" stroke-opacity="1.0"/>
<path d="M285.6 831.4L285.9 829.5L285.3 828.0L285.6 826.1L286.9 824.2L287.1 822.6L286.1 821.6L287.7 821.0L289.5 818.4L289.4 816.9L289.4 814.9L292.1 814.9L293.4 813.5L293.7 811.1L295.8 810.2L298.1 809.3L299.5 807.5L301.5 806.2L302.8 804.4L304.0 802.4L304.7 800.1L306.0 798.4L308.4 797.8L308.9 795.4L310.9 794.4L312.0 792.7L313.2 791.1L314.2 789.4L315.1 787.6L316.9 786.4L317.1 783.9L319.8 783.3L320.2 780.7L321.5 778.6L324.1 777.3L325.0 775.8L326.2 774.4L326.2 772.1L326.2 769.7L329.0 769.5L329.5 767.4L330.6 765.7L331.3 763.7L332.7 762.1L333.7 760.2L334.7 758.3L335.9 756.5L337.3 754.8L337.1 751.9L339.0 750.5L340.3 748.7L341.9 747.1L342.4 744.5L344.4 743.2L346.1 742.1L347.2 740.5L348.0 738.8L349.4 737.4L349.9 735.4L350.9 733.7L353.6 733.2L355.3 732.1L356.4 730.4L357.4 728.6L358.6 727.0L361.2 726.4L361.2 723.8L363.1 722.6L364.9 721.3L366.1 719.5L367.7 717.9L368.0 715.4L370.0 714.1L371.2 712.2L373.2 710.8L375.2 709.3L375.6 706.6L376.9 705.3L377.2 703.2L378.3 701.7L378.2 699.2L380.8 698.8L381.3 696.7L382.9 695.5L384.1 693.8L384.3 691.4L385.7 689.9L387.2 688.5L387.7 686.2L389.5 685.0L390.0 682.8L391.5 681.2L392.9 679.7L394.2 677.9L394.5 675.6L395.5 673.6L397.1 672.2L398.2 670.3L400.6 669.5L401.9 667.8L402.1 665.3L403.9 664.1L404.6 661.9L405.3 659.9L406.4 658.1L408.2 657.0L410.7 656.3L411.7 654.6L412.9 652.8L414.4 651.3L416.2 650.0L418.2 648.8L419.5 647.1L421.3 645.8L423.3 644.6L424.3 642.6L424.3 639.8L428.1 640.2L429.4 638.5L431.3 637.3L433.0 636.0L435.0 634.9L436.1 633.1L437.6 631.6L439.1 630.2L439.2 627.4L440.7 626.1L441.9 624.4L442.9 622.6L443.4 620.4L445.3 619.4L446.4 617.8L447.1 615.8L447.5 613.7L449.3 612.8L449.6 610.7L451.4 609.9L453.0 608.0L453.6 605.4L454.5 603.2L455.9 601.5L457.7 600.2L458.2 597.9L460.7 597.4L462.2 596.0L463.0 594.1L464.8 593.1L465.9 591.5L467.0 589.9L469.5 589.5L470.7 588.0L471.8 586.4L473.6 585.3L475.1 584.0L476.2 582.2L476.8 580.0L479.3 579.3L480.0 577.0L481.9 576.1L482.7 574.3L484.1 572.9L485.8 571.8L486.7 569.9L488.6 568.8L488.5 566.3L489.6 564.5L491.4 563.3L492.1 561.3L494.5 560.5L494.7 558.1L495.2 555.9L496.1 554.0L497.9 552.8L499.2 551.2L500.3 549.4L501.6 547.9L502.3 545.9L503.6 544.3L504.3 542.3L506.3 541.4L507.0 539.5L508.6 538.3L508.9 536.2L510.4 534.5L511.6 532.6L513.0 530.9L514.5 529.3L514.7 526.6L517.1 525.8L518.0 523.7L519.4 522.1L521.1 520.7L521.4 518.2L522.9 516.7L524.8 515.5L526.4 514.2L527.3 512.3L527.8 510.1L530.2 509.5L530.7 507.3L532.1 505.9L534.0 505.0L534.7 503.1L535.9 501.7L537.4 500.0L538.9 498.5L539.8 496.7L541.4 495.5L542.0 493.6L543.8 492.7L544.4 490.8L546.2 490.0L547.8 489.0L549.1 487.7L550.3 486.2L550.9 484.1L552.4 482.8L554.9 482.1L556.6 480.6L558.4 479.1L560.2 477.2L561.7 476.3L563.5 475.7L564.6 474.2L565.5 472.5L567.9 472.2L568.6 470.1L571.2 469.9L573.1 468.9L574.2 467.1L575.2 465.1L576.3 463.1L578.0 461.8L579.4 460.1L581.5 459.2L582.5 456.9L584.0 455.4L585.0 453.3L586.7 451.9L588.3 450.4L589.6 448.6L591.1 447.1L592.2 445.2L594.1 444.1L594.7 441.8L596.3 440.6L597.2 438.7L598.7 437.4L600.2 435.9L602.7 435.2L603.0 432.6L605.1 431.5L606.9 430.1L607.3 427.7L608.6 426.0L609.5 424.0L611.4 422.7L612.9 421.1L614.1 419.3L614.1 416.8L616.7 416.0L617.1 413.8L620.3 413.5L621.1 411.5L621.7 409.6L622.8 407.9L624.6 406.9L623.7 403.7L625.6 402.8L627.5 402.0L628.8 400.8L629.9 399.4L631.7 397.8L633.4 396.1L634.7 394.2L636.6 393.0L638.2 391.4L639.4 389.5L641.7 389.1L642.6 386.8L645.0 386.7L646.6 385.4L648.2 384.5L649.7 383.3L651.2 382.2L652.4 380.8L654.0 380.0L655.6 379.3L656.8 378.1L658.3 375.9L660.7 375.2L662.6 373.9L664.5 372.8L665.3 370.5L667.7 370.2L668.8 368.3L670.4 367.3L672.1 366.3L673.8 365.1L675.7 364.5L677.4 362.8L679.3 361.5L681.7 361.7L683.4 360.0L685.6 359.6L687.7 358.9L690.2 359.6L692.0 358.1L694.4 358.2L696.4 357.2L698.4 356.6L700.6 356.5L702.7 355.8L704.8 355.5L707.1 355.4L709.2 354.9L711.4 354.5L713.6 355.2L715.6 353.9L717.6 353.6L719.6 354.0L721.8 354.4L723.9 354.1L725.9 355.3L727.8 355.1L729.7 355.9L731.4 357.8L733.6 356.2L735.6 357.6L737.8 357.6L739.7 358.0L741.8 357.4L743.6 358.9L745.7 359.5L747.9 358.6L750.1 358.7L752.2 359.1L754.3 360.3L756.3 361.1L758.6 360.6L760.7 361.2L762.8 361.5L764.9 362.2L767.2 361.3L769.2 362.6L771.5 361.9L773.5 363.3L775.5 364.3L777.8 362.9L779.8 363.9L781.9 363.6L783.7 364.5L785.9 365.6L788.2 365.7L790.5 365.9L792.8 366.2L794.6 367.9L796.9 366.8L798.6 367.6L800.0 368.8L801.2 369.3L803.4 370.0L805.1 371.0L806.5 372.1L807.0 373.7L808.0 375.2L807.7 377.0L807.0 378.7L807.2 380.6L805.7 382.3L804.5 384.4L805.0 386.5L804.3 388.1L802.7 389.3L801.6 391.0L800.0 392.5L798.8 394.8L796.9 396.7L795.3 399.3L793.6 400.0L792.4 401.2L791.5 402.9L790.1 404.1L789.0 405.9L787.4 407.1L786.5 409.2L785.1 410.8L783.4 412.2L781.7 413.6L779.8 414.7L779.4 417.4L776.8 417.8L776.1 420.2L774.2 421.3L772.9 422.9L771.4 424.3L770.7 426.3L768.4 426.7L767.0 428.0L767.1 430.7L765.3 431.5L763.6 432.5L762.1 433.7L761.8 436.1L760.5 437.6L758.9 438.8L756.5 439.4L755.4 441.3L752.9 442.1L751.9 444.4L749.9 445.9L748.7 447.1L748.1 449.0L746.5 450.0L745.0 451.0L744.2 452.8L741.6 452.9L740.9 454.9L739.5 456.1L738.6 458.1L736.1 458.4L734.6 459.8L733.7 461.7L731.8 462.7L731.0 465.0L729.2 466.1L727.7 467.6L725.8 468.8L724.8 470.9L722.5 471.6L721.8 474.1L720.7 476.2L718.2 476.8L716.8 478.6L715.3 480.3L714.1 481.7L712.4 482.7L711.1 484.0L709.1 484.7L708.8 487.2L706.5 487.6L705.0 489.0L703.9 490.7L701.8 491.4L700.4 492.9L698.7 494.1L698.5 496.9L695.8 497.1L694.5 498.7L692.9 500.1L691.0 501.2L689.9 503.0L687.8 503.9L685.8 504.8L686.4 508.4L683.6 508.5L681.7 509.5L680.0 510.8L678.5 512.1L677.7 514.2L676.2 515.5L674.1 516.3L672.9 517.9L672.0 519.7L670.8 521.3L669.1 522.6L667.2 523.7L666.5 525.9L666.0 528.3L663.5 528.7L662.7 530.8L660.1 531.2L659.8 533.6L657.4 534.2L657.0 536.5L655.7 538.0L655.4 540.4L653.5 541.4L652.0 542.7L650.3 543.9L649.6 545.9L648.6 547.7L648.2 549.9L646.6 551.1L644.9 552.2L644.5 554.5L643.6 556.4L642.0 557.6L641.2 559.5L639.1 560.4L638.5 562.5L636.4 563.3L636.5 566.1L634.5 567.1L634.2 569.6L632.2 570.5L630.8 572.1L629.7 573.8L628.3 575.3L626.0 576.1L625.5 578.4L624.0 579.8L622.2 581.0L621.6 583.2L620.4 584.9L618.7 586.2L616.9 587.3L615.3 588.6L614.4 590.6L613.4 592.3L612.8 594.5L611.1 595.7L609.4 596.9L608.8 598.9L606.9 599.8L605.8 601.5L604.9 603.2L604.1 605.0L602.2 605.9L602.0 608.5L599.5 609.3L598.2 611.0L596.7 612.6L595.9 614.7L594.8 616.5L593.7 618.4L592.5 620.1L591.0 621.6L588.4 622.2L587.9 624.5L586.3 625.8L585.2 627.5L584.3 629.3L582.7 630.7L580.6 631.4L580.1 633.5L578.0 634.2L577.0 635.8L575.3 636.8L573.7 637.8L573.1 639.5L572.0 640.9L570.7 643.0L568.0 643.6L566.8 645.3L566.4 647.6L564.7 648.5L562.8 649.2L562.3 651.0L560.0 651.2L559.4 653.2L558.3 654.6L556.7 655.9L555.7 657.7L553.4 658.7L552.1 661.0L550.0 662.8L548.5 663.6L547.9 665.2L546.9 666.7L545.2 667.5L544.5 669.3L543.2 670.6L541.4 671.6L540.3 673.2L538.4 674.2L537.5 676.0L536.9 678.1L534.7 679.0L533.5 680.7L531.7 682.0L529.6 682.9L528.9 685.1L527.2 686.5L525.9 688.3L524.3 689.7L521.9 690.6L521.6 693.1L520.2 694.7L518.2 695.9L517.7 698.2L516.6 700.0L515.3 701.7L512.7 702.3L512.3 704.6L511.6 706.6L510.1 708.0L508.8 709.5L508.0 711.5L506.6 713.0L504.9 714.3L503.2 715.6L503.1 718.2L501.5 719.5L499.8 720.8L498.6 722.5L497.6 724.4L496.2 726.0L494.7 727.4L493.9 729.4L493.3 731.6L491.2 732.6L490.7 734.8L488.9 735.9L487.3 737.2L486.8 739.4L485.7 741.0L484.5 742.6L483.8 744.4L482.4 745.7L481.5 747.4L480.0 748.6L478.0 749.3L478.4 751.9L476.8 753.6L475.2 755.3L474.5 757.7L472.7 759.1L471.3 760.9L468.6 761.5L468.9 764.7L467.3 766.2L465.7 767.6L464.2 769.1L463.0 770.9L462.2 772.9L461.4 774.8L458.7 775.1L458.2 777.3L456.8 778.5L455.5 779.8L454.4 781.2L453.1 782.3L452.4 784.0L451.5 785.4L450.7 786.8L447.6 787.6L446.0 789.4L444.9 791.5L443.0 792.2L441.4 793.1L439.5 793.3L438.5 795.3L436.7 795.8L434.4 795.3L432.8 797.3L430.5 798.3L428.9 798.8L427.1 799.4L425.4 799.9L423.4 800.1L421.4 800.5L419.4 801.1L417.6 802.3L415.5 802.6L413.6 804.2L411.5 804.8L409.6 806.6L407.3 806.4L405.3 807.6L403.1 807.9L401.3 809.7L399.1 809.7L396.8 809.2L394.9 810.0L393.1 811.5L391.2 812.4L389.2 812.9L387.2 813.5L384.6 811.7L382.9 813.5L381.2 814.9L378.9 814.6L377.1 815.6L375.0 816.0L372.9 815.9L370.9 816.4L368.7 816.5L366.7 816.8L364.5 816.8L362.6 817.4L360.7 818.5L358.5 818.2L356.4 818.4L354.3 819.0L352.4 820.2L350.2 820.3L347.7 819.4L345.9 821.5L343.4 820.4L341.5 822.0L339.3 822.2L337.3 823.0L335.1 822.8L332.8 822.5L331.4 825.0L329.1 824.2L327.4 825.5L325.5 825.4L323.6 825.3L322.2 826.6L319.3 826.2L316.9 827.0L314.7 828.0L312.5 828.5L310.0 827.8L308.5 830.1L306.4 829.7L304.6 830.1L303.0 830.7L301.1 830.3L299.8 831.5L296.7 832.0L294.4 832.9L292.7 834.1L291.4 835.1L290.2 833.6L288.2 833.9L286.8 832.6L285.3 831.0" stroke="#f69a30" stroke-width="1.15" stroke-opacity="1.0"/>
<path d="M283.1 832.4L282.0 830.6L282.9 828.3L281.6 826.1L283.0 824.0L282.0 822.2L282.9 820.7L284.3 819.1L286.1 816.1L286.3 814.4L288.4 814.1L290.3 813.4L291.3 811.7L292.3 809.8L293.4 807.9L295.8 807.2L297.3 805.5L298.6 803.6L300.2 801.9L302.2 800.7L303.3 798.8L304.5 797.0L305.6 795.4L307.4 794.0L308.8 792.5L310.1 791.0L313.4 791.3L312.5 787.8L313.6 786.2L315.4 785.1L317.4 784.2L319.3 782.9L319.3 779.9L321.3 778.4L323.5 776.8L324.0 775.0L325.7 774.0L326.4 772.3L328.2 771.3L328.9 769.4L330.8 768.4L330.7 765.7L333.0 764.9L333.6 762.8L335.5 761.6L336.0 759.3L337.9 758.0L339.3 756.3L340.3 754.3L341.1 752.1L342.6 750.4L344.0 748.6L345.5 746.9L346.1 744.4L347.7 743.3L350.6 743.1L350.8 740.9L352.1 739.4L353.0 737.7L355.2 736.9L355.9 735.0L356.9 733.3L358.6 732.0L360.4 730.9L361.5 729.2L363.1 727.8L364.2 726.0L365.2 724.1L366.1 722.2L367.8 720.7L369.6 719.4L370.1 717.0L371.9 715.5L372.9 713.4L375.0 712.1L374.9 709.1L378.0 708.4L378.3 706.4L378.8 704.4L380.0 703.0L381.6 701.8L382.3 699.9L382.8 697.9L383.8 696.1L384.4 694.1L386.3 692.9L387.6 691.3L388.3 689.3L389.4 687.5L390.3 685.6L391.9 684.2L393.3 682.6L393.8 680.3L395.9 679.2L396.7 677.2L398.3 675.8L399.4 673.9L399.4 671.3L402.0 670.5L403.5 669.0L404.1 666.8L405.6 665.4L406.4 663.4L408.2 662.1L409.9 660.8L410.5 658.8L412.3 657.6L413.0 655.6L414.7 654.2L416.4 652.9L417.4 651.0L418.9 649.4L420.7 648.0L421.8 646.2L423.3 644.6L424.2 642.6L425.4 640.8L427.5 639.7L428.2 637.5L430.5 636.6L431.2 634.4L433.0 633.1L434.6 631.7L435.2 629.5L437.9 629.1L438.6 626.9L440.0 625.4L441.1 623.7L442.2 622.0L443.6 620.6L445.3 619.4L447.3 618.6L448.3 616.9L450.3 616.1L450.7 614.0L451.8 612.5L453.9 611.9L455.2 609.9L456.4 607.9L459.1 607.3L460.2 605.3L460.9 603.1L462.6 601.8L463.7 600.0L465.8 599.2L465.4 596.2L467.5 595.5L469.1 594.3L470.8 593.2L471.9 591.6L472.6 589.6L473.6 587.9L474.7 586.2L477.5 586.0L477.0 582.8L477.9 580.9L480.2 580.0L481.0 577.8L481.4 575.7L483.3 574.8L484.3 573.1L485.4 571.5L486.8 570.0L488.5 568.8L488.7 566.4L490.0 564.9L490.4 562.6L493.3 562.2L493.8 560.0L495.6 558.7L496.9 557.2L497.4 554.9L498.8 553.4L500.4 552.1L501.3 550.2L502.1 548.3L503.6 546.8L504.8 545.2L506.2 543.8L507.5 542.3L508.7 540.8L509.6 539.1L511.1 537.9L512.7 536.3L513.9 534.4L516.1 533.3L516.6 531.0L517.3 528.7L520.2 528.2L520.9 526.0L522.7 524.7L523.8 522.9L526.7 522.5L526.5 519.6L528.0 518.1L529.4 516.7L530.1 514.6L530.5 512.3L532.6 511.5L533.4 509.5L533.9 507.4L534.3 505.3L536.0 504.2L536.8 502.4L538.2 500.7L539.2 498.8L540.8 497.5L541.2 495.3L541.9 493.5L542.8 491.8L544.0 490.5L545.3 489.2L546.0 487.4L547.5 486.3L549.8 485.7L550.8 484.1L552.9 483.2L554.1 481.4L555.7 479.8L558.0 478.7L560.0 477.0L562.3 476.9L563.3 475.5L564.2 473.8L565.9 472.8L567.6 471.9L569.2 470.7L571.0 469.7L572.4 468.2L573.8 466.7L574.9 464.8L576.9 463.8L579.0 462.9L580.3 461.0L581.9 459.6L582.9 457.4L584.2 455.6L586.8 455.2L587.9 453.1L589.5 451.6L590.5 449.6L593.4 449.4L594.9 447.8L595.1 445.1L597.0 444.1L598.6 442.7L600.1 441.4L601.6 440.0L602.5 437.9L603.9 436.1L605.4 434.6L605.7 432.0L607.7 430.7L608.9 428.9L610.2 427.2L610.8 424.9L612.1 423.2L613.0 421.2L614.6 419.7L615.3 417.6L618.0 416.9L617.7 414.2L619.6 413.0L619.9 410.7L621.0 409.0L622.6 407.8L623.2 405.8L625.3 405.0L625.7 402.8L625.8 400.6L628.2 400.2L627.7 397.2L630.3 396.3L631.7 394.4L633.7 393.1L635.1 391.1L636.9 389.8L638.6 388.4L640.6 387.5L641.7 385.4L643.5 384.4L646.5 385.4L647.4 383.3L648.8 381.8L650.0 380.3L651.3 379.0L652.9 378.4L653.8 376.8L655.9 376.9L657.2 374.5L658.6 372.5L660.7 371.6L663.2 371.2L664.6 369.6L666.1 368.2L667.6 366.8L669.5 366.1L671.1 364.8L672.1 362.3L674.5 362.2L676.4 360.7L678.9 360.6L680.5 358.7L682.6 357.8L684.6 356.3L687.0 356.5L689.2 355.9L691.5 355.9L693.4 354.4L695.8 354.4L698.0 354.5L699.7 352.3L702.1 353.0L704.3 351.9L706.4 350.6L708.7 350.7L710.9 351.0L713.1 350.4L715.4 351.5L717.4 350.8L719.5 352.0L721.8 352.9L723.9 352.6L726.0 353.0L727.9 353.3L729.9 353.9L731.7 355.3L733.7 354.8L736.0 353.9L738.1 355.1L739.9 356.4L741.8 357.0L743.7 358.2L745.9 357.9L748.0 358.0L750.2 358.0L752.4 358.2L754.5 358.7L756.6 359.6L759.0 358.3L760.8 360.0L763.0 359.8L765.3 359.1L767.3 360.4L769.5 360.4L771.8 360.3L773.8 361.4L776.0 361.2L778.0 362.3L780.0 362.6L782.1 362.4L784.0 362.7L786.5 362.3L788.7 363.1L790.9 364.1L793.0 364.8L795.6 363.2L797.5 364.6L799.5 364.9L800.8 366.6L802.8 366.2L804.6 368.3L808.0 368.2L809.5 370.2L809.7 372.6L811.3 374.5L812.0 376.7L811.3 379.1L810.9 381.6L809.7 383.9L807.6 386.0L807.6 388.2L806.2 389.6L805.2 391.3L803.0 392.2L800.9 393.4L799.1 395.0L798.4 398.1L795.1 399.1L794.1 400.4L792.9 401.6L791.7 403.0L790.6 404.6L788.0 404.9L786.3 406.0L784.6 407.3L783.6 409.3L781.9 410.7L780.9 412.7L778.8 413.7L777.7 415.8L776.9 418.0L774.6 418.7L772.2 419.2L773.1 423.1L770.4 423.3L770.8 426.4L768.8 427.1L768.5 429.4L766.9 430.5L765.6 431.9L763.8 432.7L763.0 434.5L761.7 435.9L760.2 437.3L758.5 438.4L757.2 440.0L754.8 440.7L754.4 443.6L752.1 444.6L749.9 445.9L748.7 447.2L746.5 447.4L745.7 449.1L744.8 450.8L742.8 451.4L741.3 452.5L739.9 453.9L738.3 455.0L736.7 456.2L734.6 456.9L733.4 458.5L730.7 458.8L730.5 461.4L728.5 462.4L727.5 464.4L725.9 465.8L724.1 467.1L722.5 468.5L721.0 470.1L720.2 472.5L718.9 474.3L715.7 474.3L715.8 477.6L713.9 478.9L712.9 480.5L710.9 481.1L709.7 482.6L709.3 484.9L706.5 484.9L705.8 486.9L703.7 487.7L702.4 489.2L701.3 491.0L699.5 492.0L698.7 494.2L697.0 495.3L695.6 496.9L694.0 498.2L692.3 499.5L691.0 501.1L689.8 502.9L687.9 503.9L686.8 505.8L684.9 506.8L684.1 509.0L682.7 510.6L680.1 510.8L680.2 513.8L678.1 514.6L676.5 515.8L675.6 517.7L674.5 519.4L673.5 521.2L672.3 522.7L671.3 524.6L669.5 525.8L668.1 527.4L667.7 529.8L666.8 531.8L663.4 531.5L663.6 534.3L662.8 536.3L661.6 537.9L659.6 538.8L658.0 540.1L657.6 542.4L656.1 543.7L654.4 544.8L653.6 546.7L651.9 547.9L650.6 549.4L649.2 550.7L647.7 552.1L646.8 553.9L645.8 555.7L644.8 557.5L643.0 558.5L642.1 560.3L640.5 561.6L639.1 563.1L637.7 564.5L635.9 565.6L634.7 567.2L633.3 568.7L631.2 569.6L630.4 571.6L628.2 572.4L627.4 574.6L625.8 575.9L624.9 577.8L622.9 578.9L621.9 580.7L619.4 581.3L618.5 583.2L616.5 584.2L615.4 586.0L614.6 588.0L613.6 589.9L611.3 590.5L610.1 592.1L608.6 593.5L606.9 594.7L604.7 595.4L604.4 597.7L602.8 598.9L601.8 600.6L600.6 602.0L599.1 603.3L597.0 604.3L595.6 606.1L594.6 608.0L592.8 609.4L591.2 610.9L590.5 613.1L587.8 613.7L587.3 616.0L586.5 618.1L584.9 619.5L583.8 621.2L582.3 622.6L581.2 624.4L580.9 626.7L580.0 628.5L578.9 630.1L577.9 631.7L577.2 633.6L575.9 634.9L574.4 636.0L573.6 637.7L573.2 639.6L572.7 641.4L570.4 642.8L568.9 644.4L568.7 647.0L566.4 647.6L564.6 648.4L563.5 649.8L562.4 651.1L561.3 652.5L560.2 653.9L558.4 654.8L556.6 655.7L555.3 657.4L553.6 658.9L552.2 661.0L550.3 663.0L548.4 663.5L547.8 665.2L546.2 666.1L545.5 667.8L544.5 669.3L542.7 670.2L541.4 671.5L541.4 674.1L539.2 674.8L537.4 675.9L536.2 677.6L535.3 679.5L533.4 680.6L531.7 682.0L529.9 683.2L529.9 686.0L527.6 686.9L526.5 688.7L523.8 689.3L523.2 691.6L522.3 693.7L520.2 694.7L518.8 696.3L517.6 698.1L516.5 700.0L516.0 702.3L515.3 704.4L513.6 705.7L512.8 707.6L511.9 709.4L511.5 711.7L509.5 712.6L508.5 714.5L507.2 716.1L506.5 718.2L505.7 720.2L505.0 722.3L503.7 723.9L503.0 726.0L501.6 727.6L500.4 729.2L498.0 730.0L496.9 731.8L495.0 732.9L493.6 734.4L493.2 736.7L491.2 737.7L488.9 738.5L487.4 739.8L486.5 741.6L484.6 742.6L482.2 743.2L480.7 744.4L479.5 745.8L478.0 747.0L476.1 747.8L474.9 749.1L472.3 749.9L473.1 753.5L471.2 755.0L468.7 755.9L468.1 758.3L468.0 761.0L466.9 763.0L465.3 764.6L464.2 766.4L463.2 768.3L461.5 769.6L460.3 771.2L459.5 773.2L456.7 773.4L457.1 776.2L455.5 777.3L455.3 779.6L453.8 780.6L452.6 781.9L451.2 782.8L450.9 784.7L449.4 785.4L447.8 787.8L445.3 788.7L443.8 790.2L442.1 791.1L441.1 792.8L439.1 792.8L438.2 794.7L436.9 796.1L434.9 796.4L432.7 797.0L430.1 797.3L428.9 798.8L427.2 799.5L425.2 799.5L423.1 799.3L421.3 800.3L419.4 800.9L417.6 802.2L415.3 802.2L413.3 802.9L411.2 803.5L408.8 803.3L406.7 804.0L404.4 803.8L402.3 804.7L400.4 806.1L398.0 805.5L395.9 805.7L393.9 806.4L392.1 807.7L390.0 807.8L388.1 808.6L385.9 808.7L384.0 809.5L381.8 809.2L379.9 810.1L377.6 809.5L375.9 811.1L374.2 812.8L372.0 812.7L369.7 812.2L368.0 813.9L366.0 814.2L363.9 814.4L361.8 814.7L359.9 815.4L358.1 816.7L356.2 817.8L354.1 818.1L351.9 818.1L350.1 819.9L347.7 819.7L345.4 819.6L343.7 821.7L341.4 821.3L339.5 822.8L337.4 823.4L335.5 824.6L333.2 823.9L331.3 825.0L329.4 825.3L327.5 825.7L325.6 825.8L324.2 827.7L322.6 828.3L319.7 827.6L317.4 828.8L315.2 830.2L312.9 830.0L310.6 830.0L308.9 831.5L306.9 831.6L305.1 831.8L303.6 833.0L302.1 833.7L300.4 833.1L297.8 834.5L295.6 835.4L293.9 836.8L291.9 836.8L289.9 836.9L287.0 836.6L284.6 834.8L282.6 833.1" stroke="#f69a30" stroke-width="1.15" stroke-opacity="1.0"/>
<path d="M284.4 831.8L283.9 830.1L283.6 828.2L284.3 826.1L283.3 824.0L284.9 822.5L284.3 821.1L284.8 819.3L286.5 816.3L287.8 815.7L289.0 814.6L290.1 813.2L290.8 811.3L292.5 810.1L294.4 808.9L294.9 806.3L296.7 805.0L299.0 804.0L300.1 801.9L302.7 801.2L303.2 798.7L304.4 796.9L305.0 794.8L307.1 793.7L307.9 791.7L309.7 790.5L310.6 788.7L311.4 786.9L313.0 785.6L314.5 784.3L316.6 783.5L317.2 781.1L319.1 779.7L319.1 776.6L321.3 775.0L323.1 774.3L323.0 771.9L324.5 770.8L326.2 769.7L327.2 768.0L328.3 766.4L329.6 764.9L330.7 763.2L331.9 761.5L333.0 759.7L333.7 757.5L335.8 756.4L336.0 753.8L337.3 752.0L338.8 750.3L340.2 748.6L341.5 746.7L343.0 745.0L345.8 744.3L347.3 743.0L347.1 740.5L348.5 739.1L349.4 737.4L350.6 735.9L352.3 734.7L354.5 733.9L354.6 731.5L356.5 730.5L358.0 729.1L360.1 728.1L360.8 726.0L362.0 724.4L363.0 722.5L365.6 721.8L366.9 720.1L368.5 718.5L369.4 716.5L371.0 714.8L372.6 713.2L373.3 710.8L374.5 708.8L376.1 707.0L377.8 706.0L378.6 704.3L381.6 704.2L381.1 701.4L382.5 700.1L383.5 698.4L384.0 696.2L386.6 695.7L387.0 693.4L387.9 691.6L389.5 690.2L390.9 688.7L391.4 686.4L391.5 683.8L393.7 682.9L394.5 680.9L396.1 679.4L396.0 676.7L397.7 675.3L399.2 673.7L399.8 671.5L401.3 670.0L401.6 667.6L402.7 665.8L403.5 663.8L404.6 662.0L405.8 660.3L406.7 658.4L408.1 656.8L408.7 654.7L411.3 654.3L412.8 652.7L413.7 650.7L415.1 649.1L416.5 647.4L418.4 646.2L420.1 644.8L421.9 643.4L423.6 642.1L424.8 640.2L426.0 638.4L428.2 637.5L429.9 636.1L431.0 634.3L432.9 633.1L434.7 631.9L436.1 630.3L437.4 628.7L438.1 626.5L439.6 625.1L440.5 623.2L442.4 622.2L443.3 620.3L444.3 618.5L445.7 617.2L446.9 615.7L446.9 613.2L449.6 613.1L449.7 610.8L451.6 610.0L453.2 608.2L454.4 606.1L454.0 602.8L457.1 602.6L458.3 600.8L459.4 599.0L461.2 597.8L462.4 596.2L464.4 595.3L463.3 591.8L466.1 591.6L467.2 590.1L468.5 588.7L470.7 588.0L471.4 586.0L472.1 584.0L474.2 583.2L474.9 581.1L477.9 580.8L477.7 577.9L479.2 576.3L480.7 575.1L482.2 573.9L482.3 571.6L483.8 570.2L484.7 568.4L486.8 567.5L487.6 565.6L488.6 563.8L490.2 562.4L490.6 560.2L492.2 558.8L492.8 556.7L494.3 555.3L495.2 553.3L496.6 551.8L497.7 550.1L498.7 548.3L500.7 547.2L501.4 545.2L502.7 543.7L504.6 542.6L505.2 540.6L506.7 539.3L507.4 537.4L508.9 536.2L509.5 533.8L511.4 532.4L513.6 531.3L514.8 529.5L516.2 527.8L517.2 525.9L517.8 523.6L520.0 522.5L520.8 520.5L522.2 518.8L523.8 517.5L526.3 516.8L526.0 513.9L528.1 512.9L529.7 511.6L530.8 509.9L533.3 509.5L533.9 507.4L535.4 506.2L536.3 504.4L538.1 503.5L539.1 501.4L541.4 500.6L542.8 499.1L543.7 497.3L545.1 496.1L546.0 494.4L547.4 493.3L548.6 491.9L550.7 491.4L550.9 489.2L552.2 487.8L553.0 486.0L554.9 485.0L557.2 484.2L558.9 482.8L559.8 480.4L561.8 478.7L563.2 477.8L564.3 476.5L564.8 474.4L566.8 473.8L568.6 472.9L569.7 471.2L570.7 469.4L572.7 468.5L574.8 467.7L576.2 466.1L577.5 464.5L578.9 462.8L581.3 462.2L582.4 460.1L584.6 459.3L585.8 457.3L587.7 456.1L589.7 455.0L590.8 453.0L592.3 451.4L594.6 450.6L595.9 448.9L596.7 446.6L598.5 445.5L600.8 444.8L601.8 443.0L603.3 441.6L603.5 438.7L605.7 437.7L607.7 436.4L608.5 434.2L609.2 431.9L610.2 429.9L611.6 428.2L613.1 426.5L614.0 424.5L615.4 422.9L616.4 421.0L618.9 420.1L615.7 415.3L619.1 415.1L621.3 414.2L621.1 411.6L622.0 409.8L623.1 408.1L624.0 406.4L625.6 405.3L627.2 404.2L628.2 402.6L629.5 401.5L630.6 400.1L631.6 397.7L633.8 396.7L636.2 395.9L636.6 393.0L638.6 392.0L640.3 390.7L642.5 390.1L644.2 389.1L645.5 387.4L647.6 387.1L648.9 385.5L650.6 384.8L651.6 382.9L653.8 382.8L655.4 382.0L656.3 380.3L658.5 380.4L660.3 378.4L661.9 376.6L664.0 375.5L664.7 373.1L667.3 372.9L668.8 371.5L670.1 370.1L672.2 369.8L673.5 368.4L675.2 367.6L676.6 366.2L678.8 365.8L680.8 365.0L682.3 363.3L684.5 363.0L686.5 362.5L688.7 362.1L690.8 361.9L692.9 361.3L694.8 360.1L697.2 360.6L699.1 359.6L701.0 358.4L703.2 358.5L705.4 358.7L707.5 358.3L709.5 356.7L711.7 357.4L713.8 357.3L715.8 356.8L717.8 356.9L719.7 355.9L721.8 355.8L723.9 355.8L725.9 355.6L727.8 355.5L729.7 355.3L731.6 356.0L733.6 355.9L735.7 356.7L737.9 356.8L740.0 355.1L741.9 356.7L743.9 356.5L746.1 356.5L748.1 357.6L750.3 357.2L752.5 357.1L754.6 357.8L756.8 358.3L758.8 359.2L761.0 359.2L763.0 360.3L765.3 359.5L767.4 360.0L769.8 358.6L771.8 359.8L773.9 360.7L775.9 361.7L778.2 360.7L780.0 362.6L782.3 361.3L784.0 362.7L786.7 360.9L788.8 362.6L791.2 362.1L793.4 363.0L795.5 363.8L798.0 362.5L799.9 363.4L801.7 364.2L803.7 364.6L806.6 365.6L808.6 367.6L811.0 369.2L811.5 371.9L813.4 374.0L813.2 376.6L814.0 379.4L813.4 382.2L812.5 385.1L810.7 387.6L810.0 389.7L807.8 390.7L806.6 392.4L805.8 394.6L803.9 396.0L803.3 398.9L800.0 399.6L797.6 401.4L796.4 402.6L795.2 403.9L793.6 405.0L791.5 405.6L790.6 407.4L789.9 409.7L787.4 410.2L786.4 412.1L785.1 413.9L782.9 414.8L781.1 416.1L780.0 418.1L779.1 420.2L776.8 420.9L775.3 422.4L774.8 424.8L772.9 425.7L771.2 426.8L770.3 428.6L769.1 430.0L767.6 431.2L766.1 432.4L765.8 434.7L764.3 435.9L762.8 437.1L761.5 438.5L760.3 440.3L759.4 442.3L757.0 442.9L755.4 444.6L753.6 446.1L751.7 447.7L750.5 449.0L749.2 450.0L747.8 451.2L746.9 452.8L745.3 453.9L743.4 454.7L742.3 456.2L741.0 457.7L739.6 459.1L739.0 461.3L736.1 461.2L735.3 463.3L733.5 464.5L732.0 465.9L730.1 467.0L729.2 469.1L727.5 470.5L725.7 471.8L723.8 473.0L722.6 474.9L720.7 476.2L719.0 477.6L717.3 479.1L715.9 480.9L714.4 482.0L712.4 482.6L711.3 484.3L709.7 485.3L709.0 487.4L706.4 487.5L706.0 490.0L704.0 490.8L701.9 491.6L701.6 494.2L699.1 494.6L697.2 495.5L696.7 498.1L694.8 499.0L692.9 500.1L691.1 501.3L689.1 502.2L688.1 504.2L687.0 506.0L685.4 507.4L682.9 507.7L682.1 509.9L681.1 511.8L678.1 511.8L678.1 514.6L676.5 515.8L674.7 516.9L673.6 518.5L672.6 520.3L671.5 521.9L669.8 523.2L667.4 523.9L666.9 526.2L664.8 527.2L663.4 528.7L662.1 530.2L661.2 532.1L660.5 534.3L658.6 535.2L656.7 536.3L655.9 538.3L654.9 540.0L653.3 541.2L652.0 542.7L650.9 544.4L650.2 546.4L648.8 547.8L647.1 548.9L646.3 550.8L643.8 551.4L643.4 553.6L641.2 554.3L640.3 556.2L639.1 557.7L638.1 559.5L636.6 560.8L635.6 562.7L634.9 564.8L632.8 565.6L631.7 567.4L629.9 568.5L628.4 569.9L626.4 570.9L626.0 573.3L624.4 574.7L622.7 575.9L621.6 577.7L619.6 578.7L619.1 581.0L618.0 582.8L615.8 583.6L614.8 585.4L612.6 586.2L611.7 588.2L609.9 589.3L609.6 591.7L608.2 593.1L606.2 594.1L605.9 596.4L603.8 597.2L602.3 598.5L602.1 600.8L599.8 601.4L599.2 603.3L598.1 605.3L596.8 607.0L595.3 608.6L593.8 610.2L593.3 612.6L591.0 613.5L589.3 614.9L589.0 617.4L587.3 618.7L585.5 620.0L585.2 622.3L583.1 623.3L581.9 624.9L580.5 626.4L580.1 628.6L579.5 630.6L577.8 631.7L576.2 632.8L575.0 634.2L573.6 635.4L573.3 637.4L572.2 638.8L569.6 638.8L569.5 641.9L568.2 643.8L566.4 645.0L565.2 646.5L563.6 647.5L562.3 648.7L561.8 650.6L560.0 651.2L557.9 651.7L557.4 653.7L555.7 654.9L554.9 657.0L552.7 658.2L551.1 660.1L549.0 662.0L548.4 663.6L547.0 664.5L546.0 665.9L543.8 666.3L543.0 668.0L541.8 669.5L541.0 671.2L540.3 673.2L539.2 674.8L537.3 675.8L535.8 677.3L535.8 679.9L534.1 681.2L533.5 683.4L531.2 684.3L530.7 686.6L527.8 687.0L527.7 689.8L527.0 691.9L525.1 693.2L524.8 695.7L523.5 697.4L521.7 698.8L520.1 700.2L519.6 702.5L516.8 702.9L516.1 705.1L513.6 705.7L513.2 707.9L511.6 709.2L509.5 710.1L508.6 712.0L506.6 713.0L505.5 714.8L504.3 716.4L503.7 718.6L502.0 719.9L500.4 721.3L498.6 722.5L498.1 724.8L496.7 726.4L494.3 727.2L493.7 729.3L492.5 730.9L490.5 732.0L489.4 733.7L488.9 735.9L486.9 736.9L486.0 738.7L485.1 740.5L483.7 741.9L482.0 743.0L481.4 745.0L480.3 746.5L479.1 747.8L477.9 749.2L476.5 750.4L475.6 752.7L474.2 754.5L471.8 755.5L470.4 757.2L468.7 758.7L466.9 760.2L465.3 761.7L464.9 764.2L462.2 764.7L461.3 766.7L459.2 767.6L457.5 768.8L457.1 771.1L456.5 773.2L454.1 773.5L452.4 774.5L451.7 776.3L449.8 776.9L448.8 778.1L447.6 779.2L446.7 780.5L445.8 781.6L444.2 783.8L442.2 785.2L441.1 786.8L440.3 788.7L439.1 789.6L437.8 790.5L436.4 791.0L435.1 792.1L433.3 792.8L431.7 794.5L429.5 795.6L428.0 796.4L426.4 797.1L424.6 797.4L422.6 797.6L420.7 798.1L418.9 799.1L417.0 800.0L414.9 800.3L412.8 801.0L410.6 801.4L408.7 802.8L406.4 802.8L404.4 804.0L402.1 803.7L400.1 804.9L398.1 805.9L396.0 806.3L394.5 808.5L392.0 807.3L390.0 808.0L388.3 809.4L386.2 809.8L384.2 810.4L382.3 811.0L380.0 810.5L378.1 811.5L376.1 812.1L374.0 812.1L372.1 813.1L370.4 814.7L368.2 814.6L366.3 815.4L364.1 815.0L362.3 816.6L360.3 816.9L358.2 817.0L356.1 817.5L354.0 817.7L352.2 819.4L349.7 818.5L348.0 820.7L345.7 820.7L343.6 821.1L341.4 821.4L339.4 822.5L337.2 822.6L335.3 823.6L333.1 823.5L331.3 824.9L329.3 824.9L327.4 825.3L325.8 826.7L324.3 827.8L322.5 827.8L319.7 827.5L317.3 828.4L314.9 828.9L312.7 829.4L310.5 829.4L308.6 830.4L306.9 831.5L304.7 830.5L302.7 829.9L301.5 831.5L299.7 831.1L296.9 832.4L295.3 834.7L293.0 834.8L291.6 836.0L290.1 834.5L287.7 835.0L286.7 832.6L284.7 831.4" stroke="#f69a30" stroke-width="1.15" stroke-opacity="1.0"/>
<path d="M559.9 477.9L561.0 477.5L562.1 476.8L562.2 475.1L564.2 474.9L564.2 472.7L565.5 471.6L567.9 471.3L567.8 468.6L570.0 467.9L571.4 466.4L573.1 465.1L574.1 463.0L575.9 461.7L578.1 460.5L578.8 458.0L580.7 456.7L581.9 454.6L584.4 453.7L585.5 451.4L587.0 449.7L589.4 448.8L591.2 447.3L591.6 444.7L593.4 443.3L594.3 441.2L596.6 440.6L597.6 438.8L599.2 437.7L600.5 436.4L602.1 434.7L603.1 432.4L604.9 430.9L607.0 429.7L608.6 428.1L609.7 426.2L611.7 425.1L612.3 422.7L614.4 421.8L615.0 419.5L617.2 418.7L618.6 417.3L619.6 415.5L621.3 414.3L622.4 412.6L624.1 411.6L625.2 410.0L626.1 408.2L627.4 406.7L628.8 405.5L630.1 404.1L632.1 402.8L632.9 400.5L635.3 399.7L636.3 397.6L638.0 396.2L639.8 395.1L640.6 392.9L642.6 391.9L644.0 390.4L646.1 389.6L647.7 388.5L647.6 385.5L650.8 385.9L651.3 383.6L652.2 381.7L653.8 380.5L654.8 378.8L656.4 377.3L657.9 375.7L658.9 373.6L660.9 372.6L662.2 370.8L663.8 369.4L665.3 367.9L665.7 365.5L667.5 364.3L669.1 363.0L670.9 361.9L671.5 359.8L672.9 358.4L674.1 356.8L675.7 355.7L677.7 354.7L679.2 353.1L680.6 351.5L681.8 349.7L683.6 348.6L684.9 347.1L686.7 346.2L688.7 345.5L690.6 344.8L691.4 342.5L693.0 341.3L695.0 340.9L696.1 338.8L698.5 338.7L700.2 337.2L702.5 336.8L704.3 335.4L706.0 333.7L708.2 333.2L710.2 332.3L712.2 331.7L714.1 330.6L716.2 330.7L717.9 329.8L719.7 329.6L722.0 329.3L724.2 328.9L726.4 329.4L728.5 329.0L730.5 329.2L732.5 328.2L734.3 329.2L736.1 329.5L737.9 329.2L740.2 329.8L742.0 330.8L743.2 332.6L745.1 333.3L746.9 334.6L749.2 335.6L750.4 337.1L752.2 337.9L754.0 338.9L756.0 339.7L757.3 341.8L759.5 342.3L762.1 342.1L763.5 343.7L765.5 344.2L767.3 345.9L768.9 347.6L771.2 347.8L773.2 348.6L774.8 350.2L777.0 350.7L779.3 351.2L780.8 353.2L783.3 353.1L785.1 354.9L787.4 355.5L789.2 357.0L791.9 356.4L793.6 357.6L795.4 358.2L797.7 359.4L799.6 360.7L801.2 361.8L804.0 360.6L804.2 363.1L804.9 365.4L806.3 367.8L806.9 370.4L807.1 372.2" stroke="#f69a30" stroke-width="1.15" stroke-opacity="1.0"/>
<path d="M292.6 624.0L288.8 629.2L287.1 631.9L285.7 632.2L287.0 631.0L285.7 632.7L285.9 634.1L285.9 636.8L286.5 639.0L285.4 641.4L286.7 643.1L287.9 644.1L289.1 645.9L291.3 646.5L293.7 646.8L295.6 649.3L297.7 648.2L298.9 649.5L300.2 650.7L301.9 651.4L304.0 651.9L306.8 650.6L309.9 652.1L311.3 652.2L312.8 653.1L314.6 652.6L316.4 653.1L318.3 652.5L320.3 652.9L322.3 653.8L324.3 654.7L326.5 654.0L328.6 654.8L330.9 653.8L333.1 654.1L335.3 655.1L337.5 654.8L339.6 656.0L341.8 654.4L343.9 655.8L346.0 654.8L348.0 655.2L350.0 654.3L352.1 655.0L354.1 654.3L356.2 654.8L358.2 654.1L360.3 654.0L362.2 652.0L364.2 651.4L366.3 651.6L368.3 651.8L370.2 650.3L372.2 650.6L374.1 649.6L376.1 649.8L377.9 649.3L380.0 650.4L382.2 651.9L383.7 648.4L386.3 651.0L388.1 649.2L390.1 649.0L392.3 649.0L394.2 648.5L396.9 650.2L398.3 648.0L400.1 646.9L402.9 648.8L404.4 647.0L406.5 646.8L407.9 644.7L410.4 645.4L412.1 644.2L414.1 643.6L415.7 641.9L417.9 641.5L419.5 639.8L421.5 639.1L422.8 636.9L424.8 636.0L426.7 634.9L428.7 634.0L430.4 632.7L432.7 632.2L433.6 629.7L435.6 629.0L437.9 628.8L437.5 624.5L441.1 626.5L442.6 625.4L444.8 624.3L446.5 622.6L448.7 621.8L450.4 620.4L452.8 620.2L454.9 619.4L456.0 617.3L457.2 615.2L459.1 614.3L461.4 613.9L461.3 610.4L464.4 610.9L465.8 609.4L467.4 608.2L467.0 605.3L469.4 605.0L470.1 603.3L471.5 602.1L472.3 600.3L473.9 599.1L476.1 598.0L476.8 595.5L479.4 594.4L480.9 591.8L481.4 590.2L482.9 589.3L484.1 588.1L484.7 586.2L488.1 586.9L488.7 584.8L490.0 583.3L490.7 581.2L493.0 580.6L493.4 578.0L496.7 578.3L497.9 576.5L499.0 574.6L500.9 573.3L503.4 572.8L503.2 569.4L505.4 568.5L507.5 567.5L509.3 566.3L510.5 564.4L513.8 564.7L514.0 561.9L515.1 560.1L516.9 559.0L518.7 557.9L520.1 556.4L521.1 554.5L521.2 551.5L523.6 551.0L524.5 548.9L525.9 547.3L526.9 545.3L528.8 544.2L530.0 542.4L530.3 539.6L531.7 538.0L532.6 536.0L534.5 534.9L535.4 532.9L537.8 532.5L539.5 531.5L540.9 530.1L541.8 528.3L543.6 527.4L545.7 527.0L546.9 525.7L547.6 523.9L549.6 523.6L551.2 521.6L553.3 520.3L553.5 517.6L556.7 517.7L559.6 517.7L559.4 514.9L560.2 513.1L561.3 511.7L561.8 509.6L563.6 508.7L563.7 506.2L565.2 504.9L566.9 503.6L568.9 502.2L570.2 500.1L570.3 497.9L572.2 497.1L574.4 496.4L574.4 493.8L576.5 492.9L577.0 490.7L578.7 489.3L580.9 488.3L581.9 486.4L583.7 485.0L585.1 483.3L586.5 481.6L586.8 479.0L589.5 478.4L590.9 476.7L592.0 474.8L594.6 474.3L595.7 472.5L596.8 470.8L597.9 469.1L599.2 467.8L599.9 465.9L600.8 463.5L602.5 461.8L604.9 460.9L606.5 459.4L607.8 457.7L608.4 455.4L610.7 454.7L610.8 452.0L612.8 451.2L613.9 449.5L614.8 447.6L616.3 446.2L618.3 445.3L619.3 443.4L620.7 441.9L621.4 439.6L623.0 438.4L623.0 435.8L624.3 434.4L626.4 433.5L628.0 432.3L628.9 430.4L627.3 426.5L631.8 427.6L632.8 425.7L634.6 424.6L635.3 422.5L636.1 420.6L638.7 420.1L640.0 418.5L640.6 416.4L643.0 415.7L644.8 414.6L645.9 412.9L648.0 411.9L649.4 410.4L651.3 409.2L650.4 405.7L653.3 405.5L654.6 403.8L655.7 402.0L657.6 400.9L659.1 399.5L660.3 397.7L661.0 395.6L662.5 394.1L663.7 392.4L666.0 391.5L666.7 389.4L668.2 387.8L669.3 385.9L670.8 384.5L672.1 383.0L672.8 380.8L674.4 379.4L675.6 377.8L677.8 376.8L679.2 375.2L680.1 373.3L681.8 371.9L682.4 369.7L684.2 368.4L685.8 367.0L687.1 365.3L688.0 363.3L689.3 361.6L690.5 360.0L692.6 358.9L692.7 356.3L692.9 353.8L695.0 352.9L696.9 351.6L697.5 349.5L699.5 348.3L700.2 346.2L702.8 345.5L702.3 342.5L703.2 340.5L704.3 338.7L705.0 336.6L707.3 335.8L709.3 334.7L709.8 332.4L710.9 330.7L711.6 328.6L714.1 327.9L714.4 325.6L716.1 324.3L716.9 322.4L719.1 321.4L719.8 319.5L720.9 317.8L721.6 315.8L722.4 313.9L724.2 312.7L724.4 310.5L723.5 307.6L725.8 306.7L727.0 305.1L727.7 303.1L729.0 301.6L730.0 299.8L730.3 297.6L732.5 296.6L733.3 294.7L734.5 293.0L735.9 291.2L737.1 289.4L738.6 287.7L740.5 286.4L742.4 285.0L743.6 283.2L744.9 281.4L747.1 280.4L748.6 278.8L749.4 276.6L752.6 276.6L752.9 274.2L755.1 273.4L756.0 271.6L757.7 270.5L759.4 269.6L759.6 266.6L761.7 265.2L762.1 262.7L763.9 261.4L764.5 259.4L767.5 259.1L767.7 256.8L767.9 254.6L768.6 252.7L770.1 251.4L769.1 248.1L772.3 248.0L773.7 246.3L774.4 244.1L776.4 242.9L778.2 241.5L777.8 238.3L781.4 238.5L783.1 237.1L783.5 234.6L784.4 232.7L786.6 231.8L789.6 231.8L787.9 228.2L789.5 226.2L792.9 225.5L792.9 222.7L794.1 220.8L796.3 219.6L797.4 217.8L797.3 215.6L798.9 214.5L799.1 211.5L801.9 209.9L802.2 207.5L803.0 205.6L801.8 204.1L800.3 203.4L798.0 203.1L795.3 203.2L792.4 203.8L789.7 204.9L788.0 205.3L786.1 205.7L784.2 206.2L782.1 206.0L779.8 205.4L778.5 210.1L776.0 208.6L774.1 209.7L772.0 209.9L770.2 211.5L767.8 209.9L765.7 209.7L764.1 212.3L762.0 211.9L759.9 211.7L758.3 214.0L756.0 213.0L754.0 213.6L752.0 213.9L750.2 215.2L747.9 214.4L745.9 214.8L743.8 214.8L741.8 215.4L739.6 215.1L737.5 215.3L735.6 216.2L733.7 216.9L731.5 217.2L730.1 219.8L727.8 219.4L725.9 220.3L723.6 220.2L721.6 220.6L719.7 221.6L717.9 222.8L715.7 223.0L713.9 224.1L711.7 223.8L710.2 225.5L708.0 225.7L705.7 225.7L703.5 227.1L701.0 228.5L699.2 228.1L697.3 227.5L695.6 228.4L693.6 228.3L691.3 226.5L689.6 229.1L688.0 232.5L685.2 228.4L683.1 229.2L681.2 231.2L679.0 231.2L676.8 231.2L675.0 233.1L672.9 233.0L671.2 234.6L668.7 233.4L667.1 235.6L664.8 235.5L662.9 236.6L660.9 237.5L658.5 237.2L656.9 239.2L654.5 238.9L652.9 240.5L651.2 241.9L649.0 241.7L647.1 242.1L645.3 242.6L643.7 243.4L641.4 244.3L639.2 244.7L637.1 245.5L635.2 246.3L632.5 244.8L632.2 249.1L629.5 247.7L627.4 247.6L625.4 247.9L625.2 251.4L622.6 251.4L621.3 253.1L620.5 255.4L618.6 256.1L617.6 258.0L614.1 257.5L614.9 261.4L613.7 263.5L611.0 263.4L611.4 265.7L610.5 266.9L609.9 268.4L609.1 269.9L608.8 271.8L607.7 273.4L606.1 274.8L603.7 276.0L602.8 278.5L601.3 280.9L598.2 282.5L598.4 284.6L596.1 285.0L592.9 284.7L593.9 287.8L594.4 290.7L592.6 291.9L590.9 293.2L589.3 294.6L587.9 296.4L587.5 298.9L585.8 300.5L583.9 301.9L582.1 303.4L581.7 306.1L579.9 307.7L578.4 309.4L577.0 311.2L574.9 312.3L573.3 313.9L572.7 316.2L571.7 318.1L569.9 319.3L568.5 320.6L566.4 321.3L565.5 322.9L564.7 324.4L562.5 324.6L561.1 327.3L558.9 328.5L558.1 330.5L556.2 330.8L555.8 332.5L554.8 333.4L552.9 333.2L551.2 333.8L549.8 335.2L548.0 336.8L547.6 340.4L545.1 343.0L545.6 345.3L543.2 345.2L541.8 346.2L541.0 347.8L540.0 349.2L539.2 350.9L537.3 351.9L536.1 353.4L534.9 355.1L533.4 356.5L532.1 358.3L531.7 360.7L530.8 362.8L529.7 364.8L527.1 365.7L526.2 367.8L525.2 370.0L524.0 372.0L522.0 373.4L520.2 374.9L519.5 377.2L517.2 378.4L516.6 380.8L515.0 382.4L514.1 384.5L512.8 386.2L510.5 387.1L509.5 388.9L508.6 390.8L508.0 392.8L506.6 394.1L505.3 395.5L502.2 395.2L502.6 397.6L502.2 399.3L501.3 400.5L498.7 402.4L497.7 404.8L496.7 406.6L494.5 406.9L493.5 407.8L494.8 410.7L493.0 410.6L490.7 409.7L490.3 411.1L489.2 412.0L487.2 412.3L486.9 415.2L485.2 417.1L482.5 419.0L480.1 422.1L480.7 424.4L478.8 424.6L477.3 425.3L475.9 426.0L474.6 426.9L474.1 428.7L472.8 429.7L472.4 431.7L470.9 432.7L469.2 433.6L468.2 435.1L465.8 435.5L465.6 437.9L463.3 438.5L463.3 441.1L461.9 442.6L460.2 443.8L460.0 446.5L458.8 448.2L456.8 449.2L456.0 451.5L454.2 452.7L453.0 454.6L452.2 456.8L450.8 458.5L448.7 459.6L448.0 462.0L444.8 462.0L443.7 464.1L441.8 465.4L440.6 467.4L437.4 467.5L435.3 468.6L435.3 471.6L433.1 472.7L431.9 474.5L429.4 475.2L427.2 476.3L425.5 477.7L424.1 479.3L422.5 480.8L421.5 482.8L420.0 484.3L419.2 486.4L416.7 486.9L415.8 488.9L414.3 490.2L412.9 491.6L411.5 493.0L410.2 494.7L408.7 496.1L407.1 497.5L405.5 498.8L405.0 501.3L403.4 502.5L402.7 504.8L401.3 506.3L400.2 508.1L398.3 509.1L396.3 510.1L395.6 512.3L394.7 514.2L393.5 515.9L392.1 517.4L390.6 518.8L390.4 521.4L388.4 522.3L386.4 523.2L384.2 523.9L383.7 526.2L382.2 527.5L380.6 528.9L378.5 529.6L377.3 531.2L375.4 532.2L374.0 533.6L373.0 535.4L370.3 535.6L369.1 537.2L367.9 538.8L365.7 539.5L365.4 541.9L363.1 542.4L362.2 544.4L360.6 545.6L360.8 548.5L358.2 548.8L357.5 550.8L356.5 552.6L355.7 554.6L353.8 555.5L352.7 557.1L350.7 557.9L349.5 559.5L349.4 562.3L347.7 563.6L345.4 564.4L343.7 565.7L342.5 567.6L341.1 569.3L339.4 570.8L337.3 571.8L336.5 574.2L334.1 575.1L332.4 576.6L330.5 578.0L330.5 581.1L328.3 582.2L326.0 583.1L325.8 586.1L322.6 586.2L322.1 588.8L322.1 591.9L318.9 591.9L317.6 593.8L316.6 595.9L315.5 597.8L313.9 599.3L312.5 600.9L311.4 602.7L309.5 603.8L309.5 606.5L309.2 609.0L305.5 608.2L304.6 610.0L302.7 610.8L301.6 612.2L300.4 613.5L298.4 614.0L297.4 615.2L297.8 617.8L293.3 615.8L294.6 618.9L293.8 620.1L291.5 619.8L290.7 620.8L290.0 621.8" stroke="#38b4a9" stroke-width="1.15" stroke-opacity="1.0"/>
<path d="M291.0 622.6L287.6 628.2L284.9 630.4L283.9 631.7L285.6 631.8L285.6 632.7L285.8 634.1L286.3 636.8L286.3 639.1L286.3 641.1L287.4 642.6L288.3 643.5L289.5 645.0L292.0 644.3L294.2 645.4L296.9 645.0L298.5 645.4L299.6 647.0L300.8 648.3L302.7 647.5L304.7 647.3L307.1 647.9L310.4 647.2L311.8 647.0L313.2 649.2L314.9 649.8L316.8 648.6L318.6 649.7L320.6 648.8L322.7 648.4L324.7 649.4L326.7 651.6L328.8 651.9L331.0 651.9L333.3 651.1L335.4 651.5L337.5 653.5L339.8 652.2L341.9 654.0L344.0 653.6L346.0 654.0L348.0 653.2L350.0 654.3L352.1 653.5L354.1 653.9L356.2 654.3L358.2 654.4L360.2 652.1L362.3 653.8L364.3 653.1L366.3 652.2L368.5 653.9L370.4 652.3L372.4 652.1L374.2 650.8L376.4 652.2L378.3 651.9L380.2 651.4L382.1 651.6L384.2 651.2L386.5 651.5L388.2 649.7L390.0 648.5L392.2 648.7L394.2 648.6L396.0 647.2L398.0 647.0L400.5 648.0L402.0 646.3L404.1 646.1L406.3 646.2L408.2 645.4L409.3 642.7L410.9 641.3L413.2 641.4L413.9 638.0L416.5 638.6L418.0 637.1L419.7 635.8L422.1 635.6L423.3 633.4L425.4 632.7L427.2 631.5L428.9 630.2L430.4 628.5L432.2 627.4L434.5 627.2L436.8 627.0L438.8 626.5L440.9 626.1L442.1 624.6L445.2 625.0L447.5 624.2L449.8 623.6L451.8 622.7L454.3 622.5L455.5 620.4L457.9 620.1L459.5 618.6L460.5 616.3L461.9 614.5L464.4 614.3L465.0 611.6L465.8 609.4L467.0 607.8L469.2 607.3L468.9 604.7L469.9 603.2L472.3 602.7L470.9 599.3L473.3 598.6L473.5 595.9L475.5 594.4L476.3 591.6L478.6 589.7L480.4 589.2L480.4 586.8L482.9 586.9L483.4 584.8L485.2 584.0L486.4 582.5L487.5 580.8L489.1 579.5L491.0 578.5L492.6 577.2L493.6 575.1L495.3 573.8L497.1 572.6L498.2 570.5L499.2 568.4L501.0 567.1L502.8 565.8L504.3 564.2L507.9 564.9L508.0 561.8L508.9 559.7L511.1 558.9L512.2 557.1L514.3 556.3L516.1 555.2L517.2 553.4L517.8 550.9L520.9 551.3L522.4 549.7L523.6 548.0L525.9 547.3L528.0 546.5L529.4 544.9L530.6 543.1L531.9 541.3L534.6 541.1L538.0 541.7L537.7 538.4L538.3 536.1L539.7 534.6L542.0 534.2L543.7 533.1L545.1 531.7L546.6 530.7L547.0 528.3L547.9 526.7L549.8 526.2L550.3 524.3L552.3 522.7L554.7 521.7L555.1 519.1L557.7 518.7L558.1 516.3L560.1 515.5L561.5 514.3L562.8 513.0L563.5 511.2L565.1 510.0L566.5 508.7L565.3 505.0L567.5 504.0L569.3 502.6L572.0 501.6L573.1 500.3L574.0 498.6L574.3 496.4L575.5 494.7L577.3 493.6L579.1 492.3L579.8 490.2L582.4 489.5L582.8 487.1L584.2 485.4L584.4 482.7L587.1 482.1L588.4 480.3L589.4 478.3L591.6 477.3L592.2 475.0L593.7 473.5L594.2 471.2L595.5 469.7L596.6 468.0L598.0 466.7L599.9 465.9L600.0 462.8L602.9 462.2L604.3 460.4L605.1 458.1L606.9 456.9L608.7 455.7L610.1 454.2L611.6 452.8L611.6 450.1L614.1 449.7L616.0 448.7L617.2 447.0L618.5 445.4L620.2 444.2L620.7 441.9L624.5 442.3L624.2 439.5L624.1 436.8L626.3 436.0L627.9 434.8L629.3 433.4L631.4 432.4L632.1 430.4L633.4 428.8L634.3 427.0L635.3 425.2L637.8 424.6L638.5 422.5L640.7 421.7L641.8 419.9L641.4 417.1L643.3 416.0L644.9 414.7L646.8 413.7L648.0 411.9L649.4 410.3L652.7 410.4L652.4 407.4L653.3 405.5L654.9 404.1L656.2 402.5L657.2 400.6L658.3 398.7L659.7 397.3L661.9 396.4L662.0 393.7L663.6 392.3L665.3 390.9L666.3 389.0L667.7 387.4L668.9 385.6L670.0 383.9L671.5 382.4L673.2 381.2L674.2 379.3L676.3 378.3L676.9 376.1L678.3 374.5L681.1 374.0L680.4 370.9L682.1 369.5L682.6 367.2L684.6 366.0L685.6 364.2L686.8 362.4L689.2 361.6L689.7 359.3L691.5 358.0L693.0 356.5L692.7 353.7L695.6 353.3L697.6 352.2L698.4 350.1L700.4 349.0L701.1 346.9L702.0 344.9L705.3 344.9L707.7 344.0L706.3 340.3L707.4 338.5L708.4 336.6L710.4 335.5L711.4 333.6L712.2 331.6L713.6 330.1L715.5 328.9L715.7 326.5L716.5 324.5L718.0 323.1L718.9 321.3L719.5 319.2L721.8 318.3L722.4 316.4L724.8 315.5L725.1 313.3L725.8 311.3L725.9 309.1L727.8 307.9L728.0 305.7L729.8 304.5L729.8 302.1L731.9 301.1L732.4 299.0L733.9 297.7L734.5 295.6L735.5 293.7L736.4 291.7L739.1 291.0L740.4 289.2L741.7 287.4L742.9 285.5L744.9 284.3L747.2 283.3L747.7 280.9L748.5 278.7L750.6 277.7L751.8 276.0L754.1 275.1L754.7 273.0L756.2 271.7L757.6 270.4L758.9 269.1L760.8 267.5L761.5 265.0L763.3 263.6L763.7 261.3L766.6 260.9L767.5 259.1L767.3 256.5L767.1 254.0L771.6 254.9L772.3 253.1L773.7 251.6L774.8 249.9L776.8 248.9L777.3 246.5L778.9 245.0L779.5 242.7L781.3 241.2L782.5 239.4L783.9 237.8L784.4 235.3L784.7 232.9L787.5 232.6L786.9 229.7L789.0 229.0L790.6 226.9L792.3 225.1L793.4 222.9L794.9 221.2L795.6 219.2L793.9 216.0L798.3 216.2L797.6 213.8L800.3 212.1L801.6 209.8L802.1 207.5L803.3 205.6L801.8 204.1L800.3 203.3L798.3 204.3L795.4 203.7L793.0 206.0L789.9 206.1L788.6 208.5L786.4 206.7L784.5 207.8L782.7 209.4L780.5 209.2L778.4 209.6L776.7 211.9L774.4 211.7L772.5 212.6L770.6 213.7L768.6 214.1L766.4 213.4L764.3 212.9L762.4 214.2L760.5 214.7L758.4 214.6L756.4 215.1L754.3 214.7L752.1 214.3L750.1 214.9L748.2 215.7L746.1 215.6L744.2 216.6L742.1 216.4L739.9 216.1L738.0 216.9L736.1 218.1L734.1 218.7L732.2 219.5L730.0 219.5L728.1 220.5L726.2 221.5L724.5 223.0L722.1 222.3L719.9 222.1L717.9 222.8L715.9 223.7L714.1 224.8L712.1 225.0L710.3 226.0L708.4 226.9L706.3 227.8L703.7 227.6L700.7 227.3L699.2 227.8L697.3 227.5L695.6 228.6L693.7 228.7L691.5 227.8L689.4 227.8L687.3 227.7L685.5 230.4L683.1 229.0L680.9 229.3L678.7 229.6L676.7 230.3L674.4 229.9L672.4 230.7L670.0 229.6L668.2 231.5L666.3 232.7L664.2 233.4L661.7 232.8L660.0 234.9L658.1 236.2L654.9 233.4L654.1 237.6L651.7 237.3L649.5 237.3L647.8 238.4L646.0 239.3L644.4 240.4L642.5 240.5L640.1 240.7L637.8 241.1L636.1 242.8L634.3 243.9L632.2 244.0L630.2 244.5L629.0 246.5L627.1 247.1L624.3 246.0L624.1 249.6L622.2 250.7L620.6 252.2L619.8 254.6L617.5 254.8L616.5 256.8L614.9 258.2L614.3 260.8L612.6 262.5L611.8 264.0L610.9 265.3L610.5 266.9L609.7 268.3L609.5 270.2L607.5 270.9L606.6 272.6L605.3 274.3L602.2 274.9L601.8 277.8L598.3 278.7L599.2 283.3L596.9 283.5L596.9 285.6L594.6 286.0L593.8 287.7L592.1 288.9L590.8 290.4L590.0 292.4L588.3 293.9L587.2 295.8L585.9 297.7L583.7 298.8L583.2 301.3L581.6 303.1L580.9 305.5L577.7 305.8L577.1 308.3L576.6 310.8L574.6 312.1L573.2 313.8L571.9 315.6L569.8 316.5L569.3 318.8L568.4 320.6L566.3 321.2L565.3 322.7L564.8 324.5L564.2 326.1L561.8 328.0L560.4 330.0L558.7 331.2L556.7 331.3L556.6 333.4L555.2 333.8L553.7 334.2L552.5 335.3L551.9 337.2L550.7 339.3L547.6 340.5L545.4 343.4L544.1 344.1L543.2 345.3L542.4 346.7L541.2 347.9L540.6 349.6L539.1 350.9L538.9 353.1L536.0 353.3L535.2 355.3L534.5 357.4L533.5 359.4L531.9 360.9L530.3 362.5L529.9 365.0L527.8 366.2L526.6 368.1L525.7 370.4L522.5 370.8L521.3 372.9L520.6 375.2L518.7 376.6L518.2 379.1L516.7 380.9L514.4 381.9L514.3 384.6L512.2 385.7L510.3 386.9L508.5 388.2L507.5 390.0L506.7 391.8L506.3 393.9L503.6 394.1L502.7 395.6L501.1 396.4L500.8 398.2L499.9 399.3L497.1 401.0L496.3 403.6L495.7 405.7L492.8 405.3L493.3 407.6L491.6 407.5L491.7 409.2L490.5 409.5L490.5 411.3L488.7 411.4L487.6 412.8L486.4 414.7L484.3 416.2L482.8 419.3L479.6 421.6L476.2 420.3L478.2 424.0L476.9 424.9L475.4 425.5L475.0 427.3L474.3 428.9L471.7 428.7L470.9 430.3L470.3 432.2L467.8 432.2L468.2 435.2L466.9 436.5L465.6 437.9L463.8 438.9L462.3 440.3L462.3 443.0L460.2 443.9L458.0 444.6L456.5 446.1L455.8 448.3L454.7 450.2L453.3 451.9L451.8 453.4L450.4 455.1L449.2 457.0L447.7 458.7L445.6 459.7L444.5 461.8L443.3 463.7L441.4 465.0L440.4 467.2L438.0 468.0L436.9 470.1L435.4 471.7L433.1 472.7L432.2 474.9L431.1 476.8L430.2 479.1L427.3 479.3L426.0 481.1L424.4 482.5L423.5 484.6L421.6 485.8L419.0 486.3L418.5 488.6L417.3 490.3L415.2 491.1L414.0 492.7L412.2 493.6L411.4 495.8L409.1 496.5L408.1 498.4L406.1 499.4L405.2 501.4L403.6 502.8L401.3 503.4L400.1 505.2L399.0 507.0L396.6 507.6L395.2 509.1L394.1 510.8L393.6 513.2L390.6 513.2L389.1 514.5L388.5 516.8L387.1 518.3L385.0 519.0L383.8 520.7L382.9 522.6L380.6 523.3L379.7 525.1L378.5 526.8L377.4 528.5L375.3 529.3L373.3 530.2L372.5 532.2L371.3 533.8L369.8 535.1L367.8 536.0L367.5 538.4L365.0 538.8L364.3 540.9L362.8 542.2L362.4 544.5L360.8 545.7L359.5 547.3L358.9 549.4L357.0 550.4L356.0 552.1L355.0 553.9L354.6 556.2L352.5 556.9L351.0 558.3L350.3 560.3L348.7 561.6L347.7 563.5L346.5 565.4L344.1 566.1L343.1 568.2L343.0 571.1L339.6 571.0L338.8 573.3L336.9 574.6L335.1 576.0L332.8 577.0L331.4 578.8L330.0 580.6L329.6 583.4L327.6 584.7L326.1 586.4L325.4 588.8L323.3 589.9L321.6 591.5L320.4 593.4L318.5 594.7L318.4 597.5L316.4 598.7L316.0 601.2L313.4 601.8L312.7 603.9L311.3 605.5L310.4 607.3L309.5 609.3L307.2 609.8L304.6 610.0L304.9 612.7L302.7 613.2L301.8 614.8L300.1 615.5L298.5 616.2L297.2 617.3L296.1 618.3L296.2 620.4L294.2 620.5L292.4 620.6L291.5 621.5L290.3 622.0" stroke="#38b4a9" stroke-width="1.15" stroke-opacity="1.0"/>
<path d="M291.5 623.0L287.1 627.8L284.4 630.1L284.6 631.9L284.4 632.5L285.3 632.8L286.3 634.2L284.6 636.6L284.6 639.2L284.7 641.7L286.8 643.0L288.0 643.9L289.5 645.0L291.4 646.1L293.7 646.9L296.3 646.9L297.3 649.4L299.3 648.2L300.7 648.7L301.4 654.0L304.0 651.7L306.5 653.2L309.9 651.3L311.2 653.7L312.9 652.7L314.5 654.2L316.3 654.0L318.3 652.9L320.1 654.5L322.1 655.6L324.3 654.6L326.4 654.9L328.6 655.9L330.8 655.4L333.0 655.9L335.3 655.4L337.5 655.0L339.7 655.2L341.8 654.5L344.0 654.3L346.0 654.2L348.0 653.8L350.0 657.1L352.1 654.9L354.1 653.4L356.2 657.8L358.2 655.0L360.3 653.8L362.3 654.4L364.4 654.3L366.4 654.2L368.5 653.9L370.5 654.4L372.6 654.8L374.5 653.1L376.4 652.8L378.3 652.2L380.3 652.4L381.8 649.7L384.2 651.1L386.3 650.7L388.2 649.7L390.5 650.5L392.3 649.0L394.4 649.1L395.6 646.1L398.5 648.4L399.9 646.2L402.0 646.4L404.1 646.0L405.2 643.3L407.6 643.9L409.7 643.7L411.2 642.0L413.1 641.2L415.3 641.0L416.9 639.5L418.4 637.8L420.9 638.0L422.2 635.7L422.8 632.5L426.8 635.0L428.3 633.4L429.6 631.3L431.9 630.9L433.0 628.8L435.4 628.8L437.0 627.4L438.4 625.8L440.1 625.0L441.9 624.2L444.0 623.0L445.6 621.2L447.8 620.4L449.6 619.1L451.1 617.3L453.7 617.5L455.4 616.3L457.0 615.0L458.8 613.9L460.1 612.2L462.0 611.4L463.2 609.6L464.9 608.4L466.2 607.1L468.4 606.6L469.7 605.3L471.3 604.3L472.0 602.5L474.0 601.6L474.7 599.7L476.8 598.7L478.4 596.9L479.2 594.2L481.1 592.1L481.1 589.8L482.8 589.2L484.0 588.0L485.5 587.0L486.6 585.4L487.1 583.1L489.1 582.4L489.6 580.0L492.7 580.2L492.3 576.8L493.1 574.7L495.2 573.7L496.2 571.6L498.5 570.9L500.4 569.6L501.7 567.8L503.7 566.8L505.4 565.3L506.7 563.6L508.4 562.2L510.5 561.3L511.7 559.5L514.3 559.2L514.4 556.4L517.0 556.2L517.9 554.1L519.9 553.2L521.2 551.6L522.6 549.9L523.9 548.3L525.2 546.6L526.6 544.9L528.4 543.8L529.5 541.9L530.9 540.2L532.8 539.3L534.6 538.1L535.8 536.4L536.5 534.1L538.4 533.2L539.7 531.7L540.7 529.9L541.7 528.2L543.8 527.7L544.1 525.3L545.8 524.6L546.2 522.6L547.4 521.4L549.8 520.2L549.6 516.8L552.7 516.8L553.1 514.3L554.9 513.4L556.1 511.9L558.8 511.9L559.5 510.1L561.0 509.0L564.2 509.3L564.4 506.9L566.2 505.7L567.2 503.8L568.9 502.2L571.3 501.0L573.4 500.5L573.6 498.3L574.9 496.8L576.7 495.8L577.6 493.9L579.3 492.5L581.1 491.3L581.5 488.9L583.4 487.6L585.1 486.1L586.1 484.1L587.2 482.2L589.5 481.2L590.7 479.4L592.2 477.8L593.0 475.7L594.4 474.1L596.2 472.9L597.4 471.3L599.4 470.4L599.3 467.8L601.2 467.0L601.7 464.3L603.9 463.1L605.9 461.9L606.8 459.7L608.8 458.7L610.6 457.5L611.6 455.6L613.1 454.2L613.7 452.0L613.6 449.2L616.8 449.5L617.6 447.5L618.4 445.4L620.0 444.0L620.2 441.4L622.5 440.6L624.1 439.3L624.7 437.3L626.8 436.5L627.8 434.7L627.4 431.8L628.1 429.8L629.8 428.6L631.5 427.3L633.5 426.3L634.0 424.1L636.5 423.6L636.6 421.0L637.8 419.3L637.6 416.5L641.3 416.9L643.5 416.1L643.9 413.9L645.4 412.5L646.6 410.7L648.4 409.5L649.1 407.3L651.0 406.2L651.7 404.1L653.6 403.0L654.6 401.1L655.7 399.3L657.1 397.8L658.6 396.3L660.3 395.0L661.0 392.9L662.2 391.2L663.3 389.3L665.1 388.1L666.8 386.7L667.2 384.3L668.4 382.6L670.0 381.2L670.0 378.7L673.1 378.5L674.0 376.5L675.1 374.7L675.5 372.4L677.4 371.2L678.4 369.3L680.2 368.1L681.5 366.3L682.4 364.4L683.6 362.6L685.6 361.5L686.3 359.4L688.9 358.7L689.3 356.4L691.6 355.5L693.6 354.4L694.8 352.7L696.9 351.6L697.6 349.5L698.2 347.3L700.0 346.0L702.7 345.5L703.0 343.0L705.3 342.2L706.1 340.2L706.8 338.0L708.9 337.0L710.6 335.6L710.9 333.2L713.2 332.4L712.9 329.5L714.2 327.9L716.1 326.8L719.1 326.4L719.3 324.0L719.7 321.8L721.0 320.2L722.9 319.0L723.3 316.9L725.0 315.6L726.3 314.0L727.1 312.2L727.7 310.2L728.4 308.3L729.4 306.6L731.0 305.3L732.1 303.6L730.5 300.2L733.3 299.7L735.1 298.5L735.1 296.0L737.4 295.2L737.6 292.6L738.6 290.6L740.0 288.9L741.7 287.4L742.7 285.3L744.7 284.2L744.9 281.3L746.5 279.8L747.2 277.5L749.6 276.8L749.8 274.2L751.1 272.6L752.9 271.5L753.6 269.6L756.3 269.3L756.0 266.8L757.9 265.2L760.3 264.2L760.8 261.8L763.4 261.1L765.0 259.7L766.9 258.7L768.3 257.3L770.6 256.5L771.3 254.7L771.9 252.8L774.3 252.1L775.7 250.6L775.2 247.6L777.1 246.4L779.4 245.4L779.5 242.6L781.2 241.2L781.4 238.4L783.4 237.3L784.9 235.8L786.8 234.6L788.0 233.0L788.2 230.7L789.6 229.5L792.4 228.2L793.2 225.6L793.7 223.2L794.5 221.0L796.7 219.8L796.1 217.1L796.7 215.3L797.4 213.7L798.8 211.3L800.2 209.1L800.1 206.7L801.3 205.6L801.0 205.1L800.2 204.8L798.3 204.5L796.0 205.7L793.2 206.6L790.2 207.2L788.0 205.4L786.7 208.6L784.3 206.4L782.5 208.4L780.1 207.2L778.2 208.7L776.0 208.6L774.1 209.8L772.0 209.8L770.0 210.6L767.8 209.9L766.1 211.5L764.1 212.1L761.8 211.0L759.7 210.5L758.1 213.3L756.0 213.2L753.8 212.6L752.1 214.4L749.9 213.8L748.0 214.6L746.1 215.7L744.0 215.7L741.9 215.5L740.1 217.1L738.1 217.6L736.0 217.5L734.2 218.8L732.1 219.0L729.8 218.7L727.5 218.6L725.9 220.4L723.6 220.1L721.4 219.9L720.1 223.0L717.7 222.0L715.7 223.0L713.6 223.2L711.4 223.0L709.6 224.0L707.9 225.2L705.8 226.0L703.5 226.8L700.8 227.6L699.1 227.7L697.2 226.9L695.6 228.6L693.5 227.6L691.7 228.9L689.8 230.2L687.6 230.2L685.4 230.0L683.4 231.0L680.9 229.5L678.9 230.7L676.9 231.4L674.7 231.3L672.8 232.4L670.9 233.4L669.1 234.9L666.4 233.1L664.6 234.7L662.4 235.3L660.1 235.1L658.4 237.0L656.4 237.7L654.3 238.4L653.3 241.6L650.1 238.9L648.8 241.3L647.5 243.3L645.3 242.6L643.9 244.1L641.2 243.6L639.3 245.1L637.0 245.0L634.9 245.5L633.5 247.3L632.0 248.6L630.1 248.9L628.4 249.6L627.0 250.9L624.8 250.6L623.4 252.6L621.4 253.3L619.1 253.6L618.2 255.7L616.5 256.8L616.0 259.3L613.7 260.2L611.4 261.5L611.9 264.1L608.3 263.3L608.5 265.5L607.9 267.1L606.9 268.4L605.4 269.6L605.2 271.7L604.1 273.5L602.3 275.0L601.7 277.7L599.3 279.4L596.9 281.6L596.1 282.9L596.7 285.5L594.8 286.2L594.7 288.4L593.0 289.6L591.8 291.2L589.9 292.4L589.4 294.7L587.4 296.0L585.7 297.5L582.8 298.1L581.2 299.8L579.0 301.0L579.4 304.2L576.9 305.2L574.9 306.6L574.7 309.3L572.8 310.7L570.2 311.4L569.8 313.8L568.5 315.5L567.4 317.2L566.4 319.0L565.2 320.4L564.2 321.8L563.8 323.7L561.6 323.8L560.0 326.4L558.4 328.1L557.8 330.2L556.3 330.9L556.0 332.8L554.8 333.4L553.9 334.4L552.5 335.2L551.6 337.0L549.1 337.8L547.4 340.2L545.1 343.1L543.7 343.7L542.9 345.1L541.9 346.3L540.3 347.2L540.0 349.2L539.0 350.7L535.8 350.7L535.5 353.0L534.5 354.8L533.5 356.6L533.3 359.2L530.9 360.1L529.6 361.9L528.7 364.0L526.8 365.5L527.0 368.5L525.1 369.9L522.6 370.9L522.5 373.8L521.1 375.6L519.4 377.2L519.1 379.8L516.6 380.8L516.5 383.5L513.5 384.0L512.0 385.6L511.4 387.8L511.1 390.2L510.9 392.6L507.3 392.3L504.6 392.6L504.6 394.9L503.9 396.5L503.1 398.0L501.1 398.4L500.3 399.7L497.5 401.3L497.0 404.2L495.6 405.7L494.4 406.8L493.5 407.8L493.1 409.1L491.9 409.3L490.9 409.9L491.0 411.8L488.9 411.6L488.8 414.0L486.4 414.7L484.0 416.0L482.2 418.7L479.5 421.6L477.9 421.9L476.7 422.6L476.1 424.1L474.8 425.0L472.9 425.3L472.9 427.5L471.2 428.2L470.1 429.6L468.5 430.4L466.1 430.7L464.9 432.1L463.8 433.6L463.0 435.5L462.3 437.6L459.6 437.8L458.6 439.5L458.9 442.6L457.0 443.7L456.7 446.3L453.9 446.6L454.9 450.4L451.2 449.9L450.6 452.3L448.3 453.2L447.7 455.6L445.5 456.6L445.3 459.5L444.1 461.4L440.7 461.3L440.3 464.0L439.3 466.2L437.3 467.3L435.4 468.7L432.8 469.3L431.7 471.4L430.5 473.3L428.7 474.7L427.0 476.1L426.2 478.3L424.2 479.4L423.3 481.5L421.4 482.7L420.8 485.0L419.2 486.4L418.0 488.1L416.4 489.4L415.3 491.2L413.7 492.3L413.3 494.7L412.8 497.1L411.3 498.6L411.0 501.1L408.7 501.8L408.9 504.9L405.3 504.4L403.5 505.6L403.0 508.0L401.0 508.8L399.5 510.3L398.4 512.1L396.5 513.1L395.2 514.7L394.1 516.5L393.4 518.6L391.6 519.7L390.0 521.0L388.6 522.5L386.6 523.4L385.2 524.9L383.6 526.1L382.6 527.9L381.3 529.5L379.3 530.3L377.4 531.3L376.5 533.2L374.7 534.3L373.1 535.5L371.9 537.2L370.5 538.5L368.8 539.7L367.6 541.3L366.3 542.8L364.4 543.8L364.4 546.5L362.0 546.9L360.3 548.0L360.1 550.5L357.2 550.5L356.5 552.6L355.2 554.1L353.7 555.3L352.5 557.0L350.6 557.8L348.7 558.8L348.0 561.0L346.6 562.6L344.9 563.8L344.4 566.3L343.0 568.0L340.4 568.6L339.7 571.1L338.2 572.7L336.6 574.3L336.3 577.2L333.4 577.5L332.6 579.9L330.5 581.1L328.7 582.6L328.5 585.5L326.4 586.6L324.5 588.0L323.5 590.1L322.1 591.9L319.2 592.2L318.1 594.3L317.2 596.4L314.8 597.2L313.0 598.4L312.1 600.5L309.9 601.3L309.0 603.3L306.6 603.8L306.3 606.3L304.3 607.1L304.2 609.6L302.5 610.6L301.6 612.2L300.9 614.0L299.5 615.0L297.8 615.7L297.3 617.3L297.8 619.9L296.3 620.4L295.8 621.9L294.9 622.8L293.8 623.5L293.5 624.9" stroke="#38b4a9" stroke-width="1.15" stroke-opacity="1.0"/>
<path d="M289.5 621.4L285.5 626.4L283.2 629.2L282.7 631.4L282.5 633.6L283.1 633.3L282.6 633.7L282.4 636.4L282.7 639.4L283.5 642.1L285.2 644.2L286.6 646.0L288.1 648.1L289.9 650.7L293.7 647.1L295.5 649.6L297.0 650.5L297.9 653.0L300.1 651.1L302.0 650.8L304.0 652.0L306.5 653.3L310.0 650.5L311.4 651.6L312.8 653.2L314.7 651.8L316.4 652.5L318.4 652.2L320.2 653.3L322.4 652.3L324.4 653.8L326.5 654.1L328.6 654.7L330.8 655.0L333.0 655.2L335.3 654.4L337.5 655.6L339.7 655.5L341.8 656.8L343.9 656.6L346.0 657.1L348.0 657.9L350.1 657.2L352.1 658.1L354.2 657.3L356.2 655.6L358.3 655.9L360.4 656.7L362.4 655.4L364.5 656.1L366.5 654.7L368.5 654.6L370.6 655.0L372.4 652.9L374.5 653.6L376.4 652.8L378.4 652.8L380.5 653.4L382.3 652.3L384.1 650.7L386.0 649.3L388.3 650.3L390.4 650.2L392.6 650.2L394.3 648.7L396.5 648.9L398.3 647.8L399.9 646.5L402.0 646.1L403.6 644.8L406.1 645.6L407.8 644.4L409.9 644.2L411.3 642.3L413.8 642.7L415.2 640.8L417.6 640.8L419.5 639.8L421.3 638.6L423.5 638.1L425.4 637.0L427.1 635.5L429.0 634.6L430.8 633.3L433.4 633.5L434.7 631.5L436.2 629.9L438.1 629.2L439.2 627.1L440.6 625.7L442.6 625.4L444.9 624.5L446.4 622.4L448.2 621.0L450.5 620.5L451.1 617.4L454.4 618.6L454.5 615.0L456.6 614.4L457.8 612.6L459.4 611.4L461.4 610.6L464.1 610.6L463.0 606.5L465.5 606.4L467.1 605.5L467.6 603.6L469.1 602.6L470.7 601.5L471.4 599.7L472.5 598.0L473.9 596.2L475.3 594.3L477.2 592.4L478.4 589.5L480.1 588.9L481.2 587.6L482.1 586.1L484.4 585.8L486.0 584.8L486.8 582.9L487.4 580.7L489.8 580.3L490.9 578.4L491.7 576.3L493.9 575.4L496.1 574.6L497.2 572.6L499.0 571.4L500.8 570.1L501.5 567.7L503.7 566.7L505.4 565.3L506.5 563.4L508.9 562.8L510.7 561.5L511.4 559.2L513.4 558.3L514.7 556.7L516.2 555.3L517.8 554.0L520.4 553.7L521.0 551.4L522.7 550.1L524.9 549.3L526.5 547.9L528.2 546.7L528.3 543.6L531.1 543.5L531.5 540.9L533.6 540.0L534.2 537.6L536.7 537.3L539.3 537.1L539.9 534.8L541.9 534.1L542.8 532.1L544.3 530.9L545.9 529.9L547.3 528.7L548.6 527.5L548.9 525.3L551.1 525.1L552.9 523.3L554.7 521.8L556.0 519.9L557.7 518.6L558.3 516.5L560.8 516.2L561.0 513.8L563.5 513.6L564.6 512.1L565.3 510.3L566.6 508.7L568.4 507.7L569.4 505.7L570.5 503.6L572.8 502.4L573.3 500.4L575.0 499.4L577.4 498.9L578.1 496.9L578.7 494.7L580.1 493.2L581.1 491.3L582.7 489.8L583.3 487.5L585.7 486.6L586.7 484.6L587.7 482.5L589.0 480.8L591.9 480.3L591.7 477.4L593.0 475.6L594.2 473.9L595.6 472.4L597.8 471.7L598.8 469.9L601.9 470.1L601.2 467.1L602.2 464.7L603.2 462.5L606.6 462.5L607.8 460.6L609.0 458.9L610.6 457.4L612.0 456.0L613.3 454.5L614.6 452.9L615.0 450.5L617.5 450.1L618.5 448.3L620.2 447.1L621.2 445.1L622.2 443.2L623.9 441.8L624.9 440.0L625.7 438.1L626.9 436.5L628.0 434.9L629.2 433.3L630.3 431.5L632.1 430.4L634.3 429.6L634.0 426.7L635.8 425.6L635.5 422.7L636.1 420.6L638.6 420.0L640.0 418.5L640.9 416.6L641.8 414.8L643.3 413.4L644.7 411.9L646.3 410.5L647.3 408.6L646.6 405.2L650.2 405.5L652.6 404.9L653.0 402.4L654.9 401.4L656.9 400.3L657.5 398.1L659.2 396.8L662.4 396.8L663.1 394.6L663.7 392.4L665.6 391.2L667.0 389.6L668.6 388.1L670.2 386.7L671.1 384.8L671.4 382.4L673.4 381.3L675.3 380.1L675.8 377.9L677.6 376.7L679.9 375.7L680.6 373.6L681.4 371.6L683.1 370.2L684.9 368.9L684.8 366.2L686.3 364.7L687.9 363.3L689.4 361.7L690.8 360.2L691.9 358.4L693.5 357.0L694.8 355.3L695.5 353.2L697.1 351.8L698.1 349.9L700.2 348.9L701.5 347.3L703.1 345.8L703.6 343.5L703.4 340.7L705.5 339.6L707.8 338.8L708.1 336.3L710.2 335.3L711.7 333.9L713.6 332.6L713.7 330.1L714.6 328.2L715.7 326.5L717.0 324.9L718.2 323.3L719.6 321.7L719.4 319.2L720.9 317.7L722.0 316.1L722.8 314.2L723.8 312.4L724.0 310.2L726.3 309.3L726.3 306.9L727.4 305.3L728.4 303.6L730.2 302.4L730.5 300.2L732.4 299.0L733.6 297.4L734.5 295.6L735.5 293.7L737.3 292.4L739.1 291.0L739.6 288.5L740.7 286.6L742.4 285.1L743.7 283.3L745.5 281.9L746.9 280.2L747.3 277.7L750.6 277.6L750.8 275.1L752.4 273.7L752.9 271.5L754.2 270.1L755.9 269.1L757.8 268.2L760.9 267.5L759.8 263.8L762.3 262.9L764.3 261.7L764.6 259.4L766.5 258.3L767.4 256.6L766.2 253.3L768.7 252.8L770.6 251.7L772.4 250.6L773.3 248.7L774.6 247.1L776.1 245.5L778.1 244.3L778.0 241.4L779.7 239.9L781.6 238.7L783.4 237.3L784.2 235.2L785.5 233.6L787.1 232.2L788.8 231.1L788.5 228.7L789.6 226.3L791.6 224.7L793.5 223.0L793.5 220.4L795.9 219.3L796.7 217.5L797.5 215.7L797.4 213.7L798.4 211.1L800.7 209.3L799.8 206.6L802.0 205.6L800.7 205.3L800.2 206.3L797.8 201.9L795.7 204.7L793.0 206.2L790.0 206.6L788.2 206.6L786.4 206.8L784.5 207.7L782.5 208.2L780.5 208.9L778.1 208.0L776.1 208.9L774.4 211.5L771.9 209.5L770.0 210.4L768.1 211.2L766.0 211.1L764.1 212.0L762.0 211.9L760.0 212.5L757.9 212.2L756.1 213.7L754.2 214.6L752.1 214.4L750.2 215.3L747.9 214.5L746.1 215.6L744.3 217.0L742.2 217.0L740.1 217.0L738.1 217.5L736.4 219.1L734.1 218.5L732.0 218.7L729.8 218.8L727.7 219.2L725.9 220.5L724.1 221.8L721.9 221.8L719.7 221.7L718.1 223.2L715.5 222.5L714.0 224.5L712.2 225.2L709.9 224.8L708.2 226.2L706.0 226.7L703.8 227.9L701.0 228.5L699.5 229.3L697.5 228.2L695.8 229.4L693.9 230.3L691.9 230.3L689.8 230.5L687.9 231.8L685.7 231.8L683.6 232.2L681.5 233.1L679.5 233.7L677.3 233.8L675.3 234.4L673.4 235.0L671.7 236.6L669.4 236.0L667.3 236.3L665.4 237.4L663.0 237.1L661.2 238.5L659.4 240.0L657.5 241.0L655.3 241.0L654.0 243.6L651.8 243.4L649.5 242.9L647.7 243.7L645.9 244.2L643.9 244.2L641.7 245.1L639.1 244.7L637.7 246.9L635.6 247.2L633.6 247.5L632.0 248.6L630.2 249.2L627.9 248.5L627.1 251.0L624.8 250.7L623.5 252.7L620.9 252.6L619.9 254.7L617.9 255.4L615.2 255.5L611.7 255.0L612.1 258.7L611.6 261.6L608.4 261.2L607.5 262.7L607.0 264.4L606.8 266.3L603.4 266.1L604.2 268.7L601.3 269.1L602.4 272.3L601.0 274.1L600.6 276.9L599.9 279.9L597.8 282.2L597.1 283.7L595.9 284.8L595.1 286.4L594.0 287.9L592.4 289.1L591.7 291.2L590.8 293.1L589.0 294.4L587.7 296.2L585.9 297.6L583.9 298.9L583.1 301.3L580.6 302.3L578.4 303.5L577.0 305.3L575.3 306.9L574.5 309.2L573.7 311.4L570.5 311.6L570.1 314.1L568.6 315.6L567.5 317.3L566.5 319.0L564.5 319.8L564.4 321.9L563.3 323.2L561.3 323.5L559.7 326.1L558.3 327.9L556.3 328.6L554.8 329.1L554.4 330.8L553.3 331.5L552.0 332.2L550.8 333.3L549.4 334.8L548.1 336.9L546.9 339.8L544.1 342.2L543.6 343.7L543.7 345.7L541.4 345.9L540.9 347.6L539.5 348.8L539.3 351.0L537.9 352.3L537.2 354.3L535.8 355.8L534.1 357.1L533.1 359.0L531.4 360.5L530.3 362.4L528.2 363.7L527.1 365.6L526.7 368.3L523.6 368.8L522.7 371.0L521.7 373.2L520.3 375.0L517.5 375.8L517.1 378.3L514.6 379.2L514.6 382.1L514.1 384.5L511.9 385.5L510.6 387.2L511.1 390.2L509.1 391.2L509.5 394.0L508.0 395.2L506.9 396.7L506.0 398.3L505.0 399.6L504.3 401.0L503.4 402.2L501.4 404.6L499.3 406.1L498.1 407.8L493.8 406.2L496.1 410.3L493.6 409.5L493.0 410.5L492.1 411.2L491.0 411.8L490.2 413.0L487.2 412.4L486.2 414.4L482.9 414.8L482.1 418.6L478.6 420.7L478.3 422.3L475.8 421.9L476.3 424.3L474.2 424.4L473.6 426.0L472.6 427.3L471.7 428.7L469.5 429.0L468.7 430.7L467.7 432.2L465.8 432.9L464.4 434.2L464.0 436.5L461.8 437.1L460.7 438.7L460.0 440.9L459.3 442.9L456.8 443.5L456.2 445.8L454.8 447.4L453.5 449.1L452.2 450.8L450.3 452.1L449.9 454.6L447.7 455.7L446.0 457.1L444.8 459.0L443.6 460.9L442.5 463.0L441.4 465.0L440.0 466.8L439.0 469.0L436.5 469.7L436.0 472.3L435.1 474.5L432.9 475.5L431.3 477.0L430.5 479.4L429.5 481.4L430.1 484.9L426.2 484.2L425.0 486.1L423.6 487.7L421.5 488.5L420.8 490.7L418.3 491.2L418.3 493.9L416.0 494.5L414.8 496.1L412.7 497.0L410.7 498.0L410.1 500.3L407.3 500.6L406.7 502.8L406.5 505.5L403.1 505.1L402.5 507.4L400.0 508.0L398.3 509.1L398.0 511.7L396.9 513.5L394.6 514.1L393.7 516.1L392.5 517.8L391.3 519.5L389.8 520.9L388.2 522.1L387.0 523.8L384.9 524.5L383.8 526.3L382.6 527.9L380.6 528.8L378.7 529.8L378.8 532.7L376.2 533.0L374.4 534.0L373.4 535.8L371.6 536.9L371.2 539.3L369.4 540.3L367.2 540.9L366.2 542.7L364.8 544.1L363.1 545.3L361.9 546.8L360.4 548.2L359.5 550.0L358.0 551.3L355.9 552.1L355.4 554.2L354.4 556.1L351.1 555.6L349.4 556.7L348.8 558.9L348.2 561.1L347.1 563.0L345.1 564.1L343.8 565.8L342.0 567.1L340.8 569.1L339.3 570.6L337.9 572.4L336.5 574.2L335.6 576.5L333.7 577.8L331.4 578.8L330.0 580.7L328.7 582.5L327.5 584.5L326.1 586.4L324.4 587.8L323.1 589.8L320.9 590.8L320.0 593.0L318.7 594.8L318.6 597.8L314.7 597.1L314.2 599.6L312.8 601.2L310.8 602.2L308.8 603.1L307.9 605.0L307.0 606.9L305.3 608.0L304.7 610.0L303.2 611.2L301.9 612.5L300.8 613.8L299.3 614.8L296.6 614.6L296.7 616.8L296.2 618.4L295.8 620.0L294.6 620.8L294.3 622.3L293.4 623.2L292.5 624.0" stroke="#38b4a9" stroke-width="1.15" stroke-opacity="1.0"/>
<path d="M293.7 624.9L289.3 629.6L286.4 631.4L286.8 632.4L285.9 631.7L287.4 632.4L285.5 634.1L285.1 636.7L284.9 639.2L286.3 641.1L287.5 642.5L287.2 645.1L290.2 643.5L291.2 646.9L293.5 647.5L296.1 647.6L298.1 646.8L299.5 647.6L300.7 648.9L302.5 648.3L304.2 650.4L306.8 650.2L310.2 649.0L311.5 650.2L313.2 649.0L314.8 651.0L316.6 650.8L318.5 650.6L320.6 649.0L322.4 651.4L324.5 651.5L326.7 651.4L328.7 653.6L331.0 652.0L333.2 652.9L335.4 652.8L337.5 654.0L339.7 654.9L341.8 655.0L344.0 654.0L346.0 655.2L348.0 654.8L350.0 656.5L352.1 655.3L354.1 654.7L356.2 654.3L358.2 654.3L360.3 653.6L362.3 654.2L364.4 654.2L366.4 653.2L368.4 652.4L370.4 652.9L372.4 652.9L374.3 651.5L376.4 652.3L378.2 651.0L380.0 650.4L381.9 650.0L384.0 650.1L385.7 647.9L387.6 647.3L389.8 647.8L391.9 647.6L393.4 645.6L395.1 644.3L397.3 644.8L399.2 644.3L400.9 643.3L402.7 642.2L404.6 641.9L406.7 641.6L408.1 639.9L410.2 639.6L412.0 638.7L413.9 638.1L416.2 638.0L417.2 635.4L419.2 634.8L421.3 634.1L422.8 632.4L424.7 631.4L426.8 630.9L428.5 629.5L430.5 628.7L432.9 628.6L433.9 626.3L436.5 626.6L437.7 624.8L439.2 623.4L441.1 623.0L443.3 621.8L445.9 621.5L447.6 620.1L448.9 618.0L451.8 618.5L453.3 616.9L455.2 616.0L456.6 614.3L457.8 612.6L459.7 611.8L461.1 610.3L463.0 609.3L463.9 607.4L464.7 605.7L466.1 604.6L467.9 603.8L469.1 602.5L470.4 601.3L470.2 598.7L471.5 597.2L472.1 594.8L474.6 593.7L476.1 591.4L478.3 589.4L480.4 589.2L481.9 588.4L482.6 586.6L484.5 585.9L486.0 584.8L487.0 583.1L489.5 582.8L491.1 581.5L493.3 580.9L493.8 578.4L494.7 576.3L497.5 576.1L499.1 574.6L501.0 573.5L501.8 571.1L503.5 569.7L505.7 568.9L506.6 566.6L507.8 564.7L510.1 564.0L510.9 561.7L512.6 560.5L513.2 558.1L515.1 557.2L517.1 556.3L518.4 554.7L519.8 553.1L520.9 551.2L522.9 550.3L524.3 548.7L525.6 546.9L527.3 545.6L528.9 544.3L530.4 542.8L532.1 541.5L534.0 540.5L534.6 538.1L536.9 537.6L538.3 536.1L540.0 534.9L541.4 533.5L542.8 532.1L543.8 530.4L546.0 530.0L546.8 528.1L548.0 526.8L549.7 526.0L550.3 524.3L552.9 523.3L554.2 521.2L556.0 519.9L557.9 518.8L559.3 517.4L560.1 515.5L561.4 514.2L562.3 512.6L563.1 510.8L564.6 509.7L565.0 507.4L566.5 506.0L567.9 504.4L569.3 502.6L570.6 500.5L572.1 499.4L573.4 498.1L573.4 495.6L576.2 495.3L576.9 493.3L578.2 491.6L580.1 490.5L581.1 488.5L582.6 486.9L583.4 484.7L585.7 483.7L588.1 482.9L588.1 480.0L590.8 479.4L591.2 477.0L593.6 476.1L594.6 474.3L596.2 472.9L597.3 471.2L598.4 469.6L599.9 468.3L601.2 467.0L600.8 463.5L604.2 463.3L605.3 461.3L606.7 459.7L607.5 457.5L609.1 456.1L610.4 454.4L611.5 452.7L612.7 451.1L615.5 450.9L616.4 449.0L617.3 447.1L618.8 445.7L621.5 445.4L621.9 442.9L624.4 442.2L624.1 439.4L626.5 438.9L628.3 437.7L629.1 435.8L630.2 434.1L631.3 432.4L633.2 431.3L634.4 429.7L635.6 428.1L636.7 426.3L637.7 424.5L639.5 423.3L639.3 420.5L641.3 419.6L642.2 417.7L644.0 416.5L644.8 414.6L645.8 412.8L647.4 411.4L648.6 409.7L649.9 408.0L651.8 406.9L653.2 405.4L654.1 403.4L654.7 401.2L657.3 400.6L659.3 399.6L660.0 397.5L661.4 396.0L663.5 394.9L665.7 394.0L666.0 391.5L667.2 389.8L669.2 388.7L670.5 386.9L670.9 384.6L672.5 383.2L673.8 381.6L675.6 380.4L677.2 379.0L677.3 376.4L679.1 375.1L679.4 372.8L680.7 371.0L681.8 369.2L683.2 367.7L684.8 366.2L684.9 363.6L686.2 362.0L688.1 360.8L689.5 359.2L688.4 355.7L692.2 355.9L694.2 354.9L693.2 351.4L695.5 350.6L696.5 348.6L698.2 347.3L699.8 345.9L701.0 344.2L704.4 344.1L703.8 341.0L705.4 339.5L705.6 337.0L707.2 335.7L709.3 334.6L710.2 332.7L711.9 331.4L713.0 329.6L714.5 328.2L714.7 325.8L716.7 324.7L719.1 323.9L717.8 320.5L721.4 320.5L721.5 318.1L722.7 316.5L723.0 314.3L725.7 313.7L725.2 311.0L725.9 309.1L726.7 307.2L729.3 306.6L729.0 304.0L729.3 301.8L730.5 300.2L731.5 298.4L732.7 296.8L734.3 295.5L734.3 292.8L736.9 292.0L737.9 290.0L738.6 287.7L741.3 287.0L742.7 285.4L743.6 283.2L746.1 282.4L746.6 279.9L749.4 279.5L750.9 278.0L752.0 276.1L753.5 274.7L754.6 273.0L755.2 271.0L757.4 270.2L758.8 269.1L759.8 266.7L761.6 265.1L764.0 264.2L765.0 262.2L766.2 260.6L767.9 259.4L768.7 257.6L770.5 256.5L771.2 254.6L772.6 253.2L773.1 251.1L774.0 249.3L776.4 248.5L777.3 246.5L778.8 244.9L779.4 242.5L781.8 241.7L781.7 238.7L781.0 235.3L785.3 236.1L785.4 233.5L786.1 231.5L787.6 230.2L788.1 228.3L788.9 225.8L791.1 224.3L792.8 222.6L793.5 220.4L794.2 218.4L794.7 216.4L796.2 215.0L796.9 213.4L798.1 210.9L799.5 208.7L800.8 207.0L801.9 205.6L802.0 204.0L800.3 204.2L798.2 204.0L795.8 205.2L793.1 206.4L790.0 206.7L788.5 207.9L786.4 207.2L784.9 209.5L782.4 207.8L780.5 209.1L778.4 209.4L776.2 209.3L774.2 210.4L772.1 210.7L770.3 212.0L767.9 210.4L765.9 210.7L764.2 212.5L762.3 213.6L760.1 212.8L758.3 214.2L756.3 214.8L754.2 214.7L752.3 215.4L750.2 215.4L748.0 214.8L746.2 216.2L744.3 217.1L742.2 216.8L740.1 217.0L738.3 218.2L736.1 217.9L734.3 219.4L731.7 217.8L729.9 219.2L727.8 219.5L725.7 219.6L724.0 221.4L721.7 221.0L719.7 221.5L717.7 222.1L715.1 221.3L713.9 224.1L711.9 224.5L710.1 225.2L708.2 226.1L706.6 228.6L703.8 228.2L701.0 228.4L699.4 229.0L697.6 228.9L695.9 230.4L694.0 230.4L692.0 231.2L689.9 230.8L688.0 232.5L685.9 233.0L683.5 231.9L681.6 233.6L679.1 231.8L677.1 232.6L674.9 232.2L673.1 233.8L670.8 232.7L668.9 234.0L666.6 234.0L664.6 235.0L662.2 234.4L660.1 235.1L657.9 235.6L655.0 233.8L654.1 237.6L651.0 235.3L649.9 238.4L648.3 239.8L646.5 240.6L644.4 240.4L643.4 242.7L640.8 242.6L638.6 243.1L636.9 244.7L635.5 247.0L633.4 247.0L631.3 246.9L629.6 248.0L628.3 249.5L626.7 250.3L625.4 251.7L623.6 252.9L622.9 255.4L620.4 255.3L617.2 254.6L616.5 256.8L614.9 258.3L613.7 260.2L612.0 262.0L609.8 262.4L610.4 264.9L608.5 265.5L607.9 267.0L606.6 268.2L603.4 268.2L604.4 271.2L604.1 273.4L602.2 274.9L599.8 276.3L598.8 279.0L596.4 281.2L595.0 282.0L594.3 283.5L593.4 285.1L591.6 286.1L590.7 287.8L589.6 289.5L588.3 291.1L587.1 292.9L587.5 296.1L584.1 296.2L583.5 298.6L581.1 299.7L580.9 302.5L578.8 303.8L577.3 305.5L575.4 306.9L574.7 309.4L573.8 311.5L571.5 312.4L569.6 313.7L568.0 315.1L568.5 318.1L565.8 318.4L565.1 320.3L563.7 321.4L562.5 322.5L560.7 323.0L558.5 325.0L557.4 327.1L555.4 327.6L554.4 328.6L553.4 329.5L551.7 329.5L550.8 330.8L549.9 332.4L548.9 334.3L547.6 336.5L546.4 339.4L543.5 341.7L542.8 343.1L543.5 345.5L541.8 346.2L541.4 348.0L541.8 350.6L536.9 349.1L538.5 352.8L536.3 353.6L534.7 354.9L534.1 357.1L533.0 359.0L530.9 360.1L529.3 361.6L527.4 363.1L525.7 364.6L524.8 366.8L523.5 368.7L521.4 370.0L519.3 371.3L518.7 373.8L516.2 374.8L514.5 376.4L514.1 378.9L513.3 381.0L511.3 382.3L512.0 385.6L509.1 386.0L508.5 388.2L506.9 389.5L506.5 391.7L506.1 393.8L504.0 394.4L504.4 396.9L502.9 397.9L500.6 398.0L500.7 400.0L500.0 403.5L497.8 404.9L495.5 405.5L494.7 407.1L493.4 407.7L491.9 407.8L491.2 408.6L490.8 409.8L489.8 410.5L488.4 411.1L486.9 412.1L484.2 412.4L482.7 414.7L480.6 417.2L478.1 420.3L477.4 421.4L476.4 422.4L475.5 423.6L473.9 424.2L474.5 426.8L471.8 426.5L470.9 428.0L470.1 429.6L470.0 431.8L469.1 433.5L467.4 434.4L465.6 435.3L465.5 437.8L464.4 439.5L462.6 440.5L461.9 442.6L459.9 443.5L458.6 445.2L457.4 446.9L455.7 448.2L455.4 450.9L452.1 450.8L451.5 453.1L451.0 455.7L447.9 455.8L447.4 458.4L446.7 460.8L444.2 461.5L442.8 463.2L440.5 464.2L439.4 466.3L437.9 467.9L434.8 468.1L435.6 471.9L432.1 471.7L430.4 473.2L429.2 475.1L427.9 476.9L427.2 479.2L424.6 479.8L423.2 481.4L421.5 482.8L419.8 484.1L419.3 486.5L417.5 487.6L416.4 489.5L415.1 490.9L413.2 491.9L412.7 494.1L411.5 495.8L409.7 497.1L408.0 498.3L406.0 499.3L404.7 501.0L403.5 502.7L400.9 503.0L400.7 505.8L399.1 507.0L398.0 508.8L395.6 509.4L395.4 512.1L393.5 513.1L392.1 514.5L391.1 516.4L391.5 519.6L388.7 519.8L387.3 521.2L385.4 522.3L384.2 523.9L382.0 524.6L380.9 526.3L379.4 527.7L378.0 529.1L376.9 530.8L375.2 532.0L372.9 532.5L372.8 535.2L370.8 536.1L369.6 537.7L366.6 537.6L367.1 540.8L364.5 541.1L363.5 542.8L362.6 544.7L361.1 546.1L359.2 546.9L358.2 548.7L356.3 549.7L354.7 550.9L353.9 552.8L352.6 554.3L351.3 555.8L348.8 556.1L347.8 557.9L347.1 560.1L346.2 562.2L343.9 562.9L341.5 563.6L341.5 566.6L339.8 568.1L338.8 570.2L336.7 571.3L335.2 573.0L333.8 574.8L332.9 577.1L331.2 578.6L329.8 580.4L328.1 582.0L326.8 583.9L324.3 584.7L323.3 586.8L322.0 588.7L320.1 590.0L319.7 592.7L317.2 593.5L316.1 595.4L312.3 594.9L313.3 598.7L311.5 599.9L311.0 602.4L309.0 603.3L307.1 604.3L306.5 606.5L305.5 608.2L303.8 609.2L303.7 611.6L302.0 612.5L301.0 614.0L299.0 614.5L299.1 616.8L299.2 619.1L296.8 619.0L296.7 620.8L294.5 620.7L294.2 622.2L293.6 623.4L293.1 624.5" stroke="#38b4a9" stroke-width="1.15" stroke-opacity="1.0"/>
<path d="M300.1 649.6L301.1 650.8L302.7 650.2L304.2 651.5L306.1 652.0L308.3 652.2L310.6 651.9L312.9 652.5L315.2 653.0L317.4 654.2L319.8 653.9L322.1 654.1L323.9 654.9L326.0 655.1L328.0 655.7L330.1 656.3L332.0 657.4L333.8 658.8L335.8 659.4L338.0 659.6L339.9 660.5L342.2 660.2L343.8 662.0L346.2 660.9L348.0 662.5L350.2 662.2L351.8 664.1L354.0 664.1L356.0 664.4L357.9 664.9L359.8 665.7L361.7 666.3L363.7 666.3L365.6 666.7L367.6 667.2L369.7 666.8L371.8 665.7L373.9 666.0L375.9 665.1L378.0 664.9L380.1 664.4L382.4 664.7L384.4 663.6L386.3 662.0L389.0 662.7L390.3 661.1L392.3 660.9L393.9 660.0L396.0 659.9L397.4 658.4L399.2 657.4L401.6 657.7L403.1 656.1L405.4 655.9L406.7 653.9L408.7 652.8L410.9 651.9L412.8 650.5L414.3 649.5L416.2 649.0L418.0 648.2L419.7 647.1L421.6 646.2L423.1 644.7L424.6 643.2L426.0 641.6L427.7 640.3L429.8 639.4L431.9 638.6L433.1 636.7L434.2 634.8L436.0 633.7L437.8 632.8L439.5 631.8L440.8 630.4L442.6 629.7L443.8 627.3L445.9 626.0L447.7 624.2L449.9 623.1L452.0 621.8L453.1 619.5L455.5 618.8L456.5 616.6L458.4 615.9L459.6 614.5L460.6 613.1L461.7 612.3L462.7 611.7" stroke="#38b4a9" stroke-width="1.15" stroke-opacity="1.0"/>
<path d="M800.6 204.5L801.8 205.5L804.8 205.5L805.1 208.3L805.5 210.3L807.3 211.7L808.8 213.9L808.5 216.0L808.0 218.4L807.9 220.9L806.3 222.9L807.3 225.9L804.6 227.0L802.4 228.2L800.1 229.2L797.9 229.8L796.1 232.5L793.9 233.4L792.1 233.9L793.0 235.3L793.3 237.7L792.6 240.5L791.2 242.6L789.2 244.2L787.1 246.0L784.5 247.1L783.0 248.2L782.3 250.0L781.6 252.0L779.9 253.1L777.6 253.9L776.0 255.9L774.8 257.1L774.4 259.0L772.1 259.6L771.3 261.5L769.3 262.6L768.8 265.0L767.7 267.0L765.6 268.4L763.6 270.0L762.2 272.2L761.1 273.5L759.5 274.6L758.0 275.9L756.1 276.8L756.2 279.6L754.3 280.7L752.9 282.2L752.0 284.2L749.1 284.6L748.7 287.1L747.9 289.3L746.4 290.9L744.6 292.3L743.3 294.2L741.8 295.8L741.9 298.2L740.3 299.4L738.2 300.3L736.3 301.4L735.7 303.4L735.7 305.7L734.1 307.1L732.7 308.6L732.0 310.5L732.4 313.2L730.1 314.1L728.8 315.7L728.7 318.1L725.4 318.4L725.2 320.8L724.3 322.6L723.4 324.5L721.3 325.5L720.7 327.6L719.5 329.3L718.2 330.8L717.2 332.8L715.4 334.0L714.8 336.2L712.7 337.2L711.3 338.7L710.9 341.1L709.1 342.3L708.9 344.9L707.5 346.5L706.0 347.9L704.8 349.6L702.4 350.5L701.2 352.2L700.6 354.4L699.1 355.9L698.3 357.9L696.8 359.4L695.9 361.4L694.0 362.6L693.4 364.8L692.0 366.3L689.9 367.5L689.1 369.5L686.8 370.4L686.2 372.6L684.7 374.1L682.7 375.2L682.1 377.3L681.3 379.4L679.5 380.6L678.3 382.3L677.6 384.3L675.4 385.2L675.2 387.8L672.9 388.7L671.8 390.6L669.4 391.3L669.0 393.7L668.1 395.6L667.1 397.6L664.7 398.3L663.7 400.2L661.9 401.3L661.7 403.9L659.8 405.0L658.3 406.5L656.7 407.9L656.1 410.1L653.8 411.0L651.9 412.1L651.8 414.6L650.5 416.2L648.7 417.3L648.0 419.4L646.9 421.2L645.3 422.6L644.2 424.3L643.1 426.2L641.7 427.6L639.9 428.8L639.5 431.1L638.4 432.9L637.8 434.9L635.5 435.7L633.6 436.6L633.0 438.6L631.2 439.6L631.8 442.5L628.4 442.7L627.3 444.8L625.9 446.7L623.9 447.9L621.9 449.1L621.0 451.2L620.1 453.3L616.9 453.2L616.7 455.9L615.0 457.1L613.5 458.4L611.6 459.3L610.8 461.2L609.8 462.8L607.7 464.0L606.9 466.1L604.6 466.7L604.3 468.8L602.3 469.5L602.1 471.7L600.7 472.9L599.3 474.1L597.5 475.3L598.0 478.5L595.2 479.3L595.6 482.1L592.3 481.9L591.4 484.0L590.9 486.6L589.3 488.3L588.0 490.4L586.3 492.2L584.3 493.8L582.7 495.5L581.2 497.3L579.8 499.0L578.3 500.4L576.7 501.6L575.0 502.4L574.8 504.1L574.2 505.2" stroke="#38b4a9" stroke-width="1.15" stroke-opacity="1.0"/>
<path d="M284.7 738.0L284.0 735.9L283.3 732.6L286.8 729.9L287.0 728.0L289.3 727.2L290.8 725.6L292.2 723.9L293.6 721.8L295.5 720.2L296.9 718.2L299.6 717.3L300.2 715.3L301.3 714.1L302.2 712.9L302.6 711.3L304.7 710.8L305.5 709.0L307.2 707.3L309.3 705.2L311.3 702.2L310.9 699.9L313.0 699.7L314.2 698.6L314.6 696.6L315.6 695.2L317.5 694.3L318.2 692.3L318.7 690.1L320.4 688.8L321.3 686.7L322.2 684.6L322.8 682.2L325.2 681.4L327.0 680.1L328.1 678.0L328.5 675.3L330.7 674.3L332.6 673.0L333.5 670.9L335.6 669.8L337.1 668.2L338.1 666.3L340.0 665.2L341.0 663.4L342.0 661.8L344.0 661.0L345.5 659.9L345.9 657.2L348.1 656.1L350.2 654.9L351.4 653.1L352.2 650.9L354.4 649.9L355.5 648.1L357.6 647.2L358.1 644.9L359.7 643.6L361.1 642.2L362.6 641.0L363.8 639.5L365.2 638.2L366.1 636.5L367.7 635.6L368.5 633.8L370.0 632.8L371.7 632.0L372.4 630.4L374.3 628.9L375.8 627.3L377.9 626.5L379.1 624.9L380.9 623.9L381.0 621.4L382.3 620.1L383.6 618.8L384.9 617.5L385.6 615.5L387.0 614.2L387.6 612.2L390.0 611.6L391.1 609.6L391.9 607.8L392.9 606.1L393.1 603.7L395.7 603.1L395.2 600.1L396.2 598.1L397.6 596.5L397.9 594.0L399.1 592.1L402.5 591.9L402.5 589.2L403.9 587.5L406.1 586.5L408.0 585.3L408.8 583.4L410.7 582.3L410.9 580.1L412.5 578.3L414.5 577.0L415.9 575.3L418.5 574.5L419.2 572.4L421.0 571.2L422.7 569.9L423.2 567.7L425.0 566.6L426.2 564.9L427.7 563.6L429.8 562.6L430.1 560.1L431.1 558.3L432.9 557.2L434.0 555.6L435.6 554.3L435.9 552.0L438.0 551.2L439.3 549.6L441.5 548.9L441.5 546.3L442.2 544.2L444.1 543.2L445.7 541.9L447.3 540.5L448.9 539.1L449.7 537.2L450.9 535.6L451.6 533.5L453.2 532.2L454.3 530.3L456.0 529.0L456.4 526.7L458.3 525.5L459.5 523.8L460.6 522.1L462.6 521.1L463.4 519.3L463.9 517.3L465.3 516.0L466.1 514.5L467.6 512.6L469.1 510.9L470.7 509.5L472.3 508.3L472.2 506.0L473.4 504.6L474.5 503.0L476.1 501.7L476.8 499.6L478.3 497.9L479.1 496.2L480.7 495.1L481.6 493.2L483.4 492.1L485.2 490.9L486.1 488.8L487.0 486.8L489.2 485.8L490.3 484.0L491.1 482.0L492.2 480.2L494.3 479.3L495.4 477.8L495.9 475.9L497.4 474.1L498.7 472.2L499.9 470.5L501.7 469.2L502.1 467.1L503.1 465.4L504.5 463.9L504.8 461.8L506.7 460.8L508.4 459.5L509.5 457.5L510.9 455.6L511.4 453.0L513.1 451.4L515.0 449.9L516.6 448.3L516.6 445.7L517.4 443.8L519.3 443.0L520.3 440.7L521.3 439.2L522.1 437.8L522.4 435.7L523.6 433.5L525.6 432.8L525.8 430.4L526.9 428.5L528.6 427.0L529.7 425.1L530.6 423.0L532.3 421.7L532.8 419.8L534.4 419.1L535.9 416.5L537.3 415.1L538.3 414.2L539.1 413.2L539.4 412.3L539.2 410.7L539.7 408.4L539.7 406.0L539.0 403.7L539.0 401.3L541.2 399.8L543.0 398.4L545.4 396.4L546.1 394.9L547.9 394.3L549.3 393.0L551.5 392.4L552.6 390.4L554.7 389.5L556.6 388.3L557.7 386.1L559.4 384.8L561.7 384.4L562.7 382.7L564.3 381.1L566.1 380.0L567.0 378.4L567.7 376.6L568.8 375.1L572.5 375.2L571.7 371.1L574.2 369.1L575.3 368.0L576.3 366.6L578.7 366.2L578.6 363.6L580.6 362.6L581.9 361.0L583.5 359.5L584.3 357.3L586.4 356.2L587.3 353.9L589.4 352.8L592.0 352.1L592.6 349.6L593.9 347.8L596.0 346.7L596.9 344.6L598.4 343.2L600.5 342.5L601.2 340.1L603.3 339.1L604.3 337.2L605.4 335.3L607.2 334.2L608.8 332.9L610.2 331.3L610.9 329.2L612.1 327.5L614.5 327.1L615.7 325.5L616.6 323.6L618.3 322.5L619.7 321.1L621.3 320.0L622.5 318.4L624.2 317.0L625.7 315.4L627.5 314.1L629.3 312.9L630.3 310.8L632.1 309.7L634.2 308.8L635.8 307.5L637.5 306.3L639.8 305.9L640.8 303.8L643.1 303.5L645.2 302.9L646.0 300.7L649.1 301.3L650.3 299.4L652.3 298.5L654.2 297.6L656.6 297.5L657.5 295.1L659.4 294.3L661.1 293.2L663.3 293.0L664.7 291.3L666.7 291.0L668.0 289.2L669.6 288.0L672.0 288.1L673.4 286.3L675.4 285.6L677.1 284.2L679.1 283.8L681.2 283.6L682.9 282.2L684.6 281.0L686.4 280.0L688.5 279.7L690.0 278.0L692.3 278.5L694.2 277.4L696.2 276.5L698.3 275.8L700.2 274.6L702.4 274.3L704.3 272.9L706.6 273.1L708.8 273.1L710.8 272.4L712.9 272.0L715.0 271.6L717.0 271.1L719.2 271.1L721.2 270.1L723.3 270.6L725.4 269.7L727.5 269.8L729.6 270.4L731.6 268.8L733.8 269.2L735.9 269.7L737.9 269.2L740.0 269.0L742.1 269.1L744.1 268.1L746.3 268.1L748.2 266.9L750.5 267.8L752.5 266.6L754.6 266.7L756.7 266.2L758.8 266.4L761.0 266.7L763.1 266.3L765.4 265.5L767.6 266.7L770.0 265.3L772.2 267.0L774.4 267.0L776.6 267.3L778.6 267.8L780.5 268.5L782.4 268.4L784.1 269.0L787.0 268.3L789.3 269.7L791.4 270.1L793.1 271.2L794.4 272.7L796.2 273.2L797.7 275.5L798.8 277.7L800.3 279.7L800.7 282.1L800.2 284.2L800.5 286.3L800.3 288.6L800.0 291.0L799.3 292.5L797.5 293.3L798.0 295.3L797.5 297.7L796.0 300.9L794.5 301.8L793.9 303.3L792.4 304.5L791.3 306.1L790.6 308.1L789.5 309.9L789.2 312.2L787.7 314.0L785.9 315.6L785.1 317.8L783.8 319.8L783.3 322.3L781.4 323.9L780.0 325.7L778.8 327.6L778.5 329.7L776.8 331.1L776.1 332.9L774.5 334.3L772.5 335.4L773.2 338.2L771.3 339.4L770.6 341.3L769.6 343.1L768.1 344.6L766.8 346.3L766.5 348.5L765.2 350.3L764.0 352.1L762.5 353.7L762.9 356.5L760.6 357.7L759.3 359.2L757.8 360.6L757.6 362.9L756.6 364.7L755.3 366.3L754.1 368.0L753.9 370.4L752.6 372.2L751.1 373.8L749.7 375.4L749.1 377.6L747.9 379.4L747.4 381.6L746.4 383.5L743.5 384.1L743.2 386.5L741.5 387.8L740.4 389.4L739.0 390.9L738.7 393.1L736.1 394.0L735.0 395.9L733.8 397.8L732.3 399.3L729.9 400.2L729.0 402.1L728.0 404.0L725.6 404.7L724.5 406.5L723.2 408.1L722.3 410.0L720.8 411.4L719.7 413.2L717.7 414.1L716.9 416.2L714.6 416.9L713.7 418.8L712.4 420.4L710.4 421.3L710.3 423.9L708.9 425.1L707.6 426.6L706.7 428.3L704.5 428.8L704.3 431.2L702.1 431.9L701.2 433.6L699.7 434.9L698.6 436.7L697.0 437.9L696.1 440.0L694.4 441.4L692.9 443.1L691.2 444.8L690.0 446.1L688.4 447.1L687.4 448.8L686.3 450.4L685.5 452.4L684.6 454.2L682.7 455.2L681.6 457.0L680.4 458.7L678.8 460.1L677.6 461.9L675.8 463.1L674.5 464.8L673.6 466.9L671.4 467.8L670.8 470.1L669.1 471.4L668.0 473.4L666.0 474.4L664.9 476.3L662.5 476.9L662.0 479.3L660.2 480.4L658.1 481.2L656.6 482.5L655.2 484.0L653.7 485.3L652.5 487.0L650.7 488.0L648.9 489.1L647.3 490.2L645.7 491.5L643.7 492.2L643.1 494.7L641.4 495.7L639.4 496.6L638.3 498.3L636.7 499.6L635.0 500.7L633.0 501.5L631.9 503.4L630.4 504.8L629.4 506.8L627.1 507.3L625.6 508.7L624.1 510.1L622.4 511.2L621.0 512.7L619.3 513.9L617.9 515.4L617.0 517.5L614.2 517.5L613.9 520.4L611.4 520.8L610.8 523.3L608.6 524.1L607.1 525.5L605.3 526.8L604.6 529.1L603.3 530.7L601.6 531.9L599.7 533.0L598.4 534.5L596.9 535.9L595.5 537.3L594.1 538.7L593.2 540.5L591.7 541.7L589.5 542.0L588.8 543.9L586.0 544.3L585.5 547.3L582.9 547.7L581.2 549.2L578.8 549.8L577.7 551.9L576.3 553.6L574.4 554.6L572.8 556.0L571.3 557.4L569.9 558.8L568.0 559.5L566.1 560.1L565.0 561.7L563.3 562.3L562.3 563.8L561.3 565.1L559.2 565.0L557.8 567.9L555.2 568.8L553.1 570.0L551.2 571.0L549.7 572.4L548.0 573.1L546.7 574.2L545.2 575.0L543.9 576.0L542.3 578.7L540.8 579.7L540.0 582.1L539.5 583.1L538.3 583.6L537.3 584.1L535.6 584.1L534.1 584.8L532.8 586.5L530.9 588.0L528.5 590.0L525.2 591.8L524.2 592.9L522.8 593.6L521.5 594.6L520.4 596.0L518.9 597.2L517.4 598.4L515.0 598.6L514.1 601.0L512.8 602.9L510.3 603.3L508.5 604.7L507.2 606.8L504.9 607.5L502.9 608.8L500.5 609.4L498.9 611.2L497.0 612.5L495.6 614.4L493.2 614.9L492.3 617.5L490.4 618.5L488.2 618.8L486.9 620.5L485.9 622.4L484.1 622.8L482.7 623.7L481.7 624.9L480.2 625.3L477.7 628.1L475.1 629.4L473.4 630.9L471.6 631.4L470.3 632.2L469.6 633.7L468.2 634.1L466.8 635.2L464.4 635.6L463.8 637.8L462.2 638.8L460.4 639.5L459.3 641.3L457.9 642.7L455.8 643.2L454.4 644.9L452.5 645.9L450.1 646.4L448.8 648.4L447.2 650.0L445.5 651.7L442.8 652.0L441.7 653.6L439.5 653.8L438.0 655.0L436.6 656.5L434.4 656.8L433.1 658.5L431.5 659.9L429.2 660.1L427.9 661.9L426.2 663.2L424.4 664.3L421.9 664.5L420.7 666.5L419.0 667.7L416.8 668.2L414.9 669.1L413.3 670.5L411.0 670.7L409.7 672.4L407.9 673.5L405.8 673.8L404.1 674.9L402.3 675.8L400.1 676.1L398.1 676.6L396.3 677.5L394.6 678.7L392.6 679.2L390.4 679.6L388.7 680.9L386.7 681.7L384.5 682.0L382.9 683.8L381.2 685.3L379.0 685.4L377.4 686.6L376.0 688.3L374.5 689.8L372.4 690.3L370.8 691.8L368.9 692.9L367.3 694.5L365.1 695.0L363.5 696.6L361.3 697.1L360.3 699.6L358.2 700.2L356.4 701.3L354.7 702.5L352.8 703.1L351.2 704.3L349.8 705.7L348.4 706.8L346.6 707.1L344.9 709.3L342.5 710.0L340.3 710.6L338.6 711.9L336.6 712.6L335.0 713.7L333.7 715.4L332.1 716.5L330.2 716.9L328.7 718.1L326.9 718.7L325.3 719.8L323.5 720.7L321.5 721.5L320.0 723.3L318.0 724.4L315.9 725.3L313.9 726.6L311.7 727.4L309.3 728.0L307.7 729.6L305.5 730.3L303.7 731.4L302.0 732.4L300.0 732.5L298.9 734.1L295.5 734.6L293.4 736.8L290.6 736.5L288.5 736.5L287.1 737.1L286.0 737.3" stroke="#861a2a" stroke-width="1.15" stroke-opacity="1.0"/>
<path d="M285.7 737.3L285.3 735.7L286.0 733.5L287.3 730.1L288.0 728.7L288.7 726.8L290.2 725.2L291.3 723.0L293.3 721.6L294.8 719.6L296.1 717.5L298.2 716.2L299.3 714.6L300.2 713.2L301.3 712.2L302.2 711.0L303.1 709.6L304.1 707.8L305.5 705.9L307.5 703.7L309.7 700.7L310.3 699.3L311.4 698.3L312.9 697.5L314.0 696.2L314.1 693.8L315.1 692.2L316.7 691.0L318.6 690.0L319.0 687.6L320.1 685.7L321.5 684.0L323.6 683.0L326.0 682.1L325.9 679.1L327.8 677.7L329.1 675.9L330.6 674.2L331.3 671.9L333.5 670.9L336.2 670.3L336.6 667.8L337.7 666.0L339.2 664.5L341.0 663.4L342.6 662.3L343.6 660.7L345.7 660.1L346.6 657.8L348.3 656.3L350.1 654.8L353.1 654.4L353.4 651.9L354.4 649.9L355.1 647.7L357.1 646.7L358.4 645.1L359.0 643.1L360.1 641.4L361.8 640.3L363.1 638.9L364.4 637.5L365.6 636.1L366.0 634.0L368.3 633.7L369.2 632.1L369.4 630.0L370.9 629.0L372.6 627.3L374.0 625.5L375.5 624.1L376.1 621.9L377.8 620.8L379.6 619.9L381.0 618.7L383.4 618.6L384.6 617.2L386.1 616.0L387.6 614.9L389.9 614.3L390.7 612.2L391.0 609.5L394.5 609.9L396.1 608.6L397.2 606.9L398.9 605.5L400.3 603.9L402.0 602.4L403.0 600.5L405.3 599.4L407.3 598.2L408.2 596.1L408.8 593.8L409.5 591.7L411.5 590.5L412.4 588.6L411.9 585.7L414.7 585.3L414.6 582.9L416.5 581.4L417.5 579.3L419.0 577.6L419.7 575.5L421.3 574.0L421.9 571.9L423.3 570.4L424.3 568.6L424.7 566.4L426.7 565.3L427.9 563.7L430.1 562.8L431.1 560.9L431.4 558.6L434.2 558.3L435.3 556.7L436.6 555.2L437.8 553.6L438.7 551.8L440.1 550.3L441.9 549.2L444.0 548.4L444.5 546.2L445.2 544.1L447.6 543.4L449.4 542.2L449.9 539.9L450.4 537.8L452.5 536.8L453.6 535.1L455.3 533.8L455.9 531.6L457.7 530.3L458.8 528.5L460.4 527.1L461.6 525.3L462.7 523.6L464.1 522.2L465.3 520.7L466.6 519.2L466.9 517.2L468.3 516.1L469.8 514.2L470.8 512.2L473.3 511.3L473.8 509.3L473.3 506.7L474.9 505.6L475.7 503.9L476.1 501.7L477.6 500.2L477.6 497.3L478.8 495.9L480.1 494.5L480.8 492.6L481.7 490.6L483.2 489.2L483.7 486.8L485.3 485.3L485.5 482.7L487.1 481.3L487.9 479.2L489.5 478.0L490.1 475.9L491.6 474.8L493.0 473.6L493.9 471.5L496.2 470.4L497.5 468.7L498.1 466.7L499.2 465.0L501.5 464.2L501.7 462.0L502.8 460.4L504.2 458.9L505.0 457.0L507.8 456.2L508.6 453.8L510.6 452.4L512.1 450.5L514.4 449.4L515.3 447.3L516.4 445.5L517.7 444.0L519.1 442.9L522.1 442.0L521.7 439.5L523.3 438.6L524.1 437.0L525.4 435.0L527.2 434.3L528.1 432.5L529.9 431.2L531.9 430.2L533.2 428.3L535.0 427.0L537.1 426.0L537.7 423.9L539.7 423.4L541.7 421.1L542.9 418.8L543.9 416.7L544.5 414.3L545.0 412.0L544.0 409.8L544.2 407.5L543.3 405.7L543.7 404.2L542.9 402.4L544.0 401.3L545.6 400.5L547.2 398.1L547.2 396.2L548.7 395.2L550.4 394.4L552.9 394.3L553.5 391.5L555.8 390.9L557.9 389.9L559.0 387.7L560.7 386.3L562.9 385.7L564.3 384.3L566.1 382.8L566.8 380.7L568.4 379.5L569.7 378.2L571.0 376.7L571.8 374.6L573.9 373.0L575.9 370.6L576.6 369.1L577.8 368.0L578.8 366.3L580.5 365.3L581.7 363.7L583.1 362.1L585.0 360.9L586.7 359.5L588.0 357.7L589.8 356.3L590.4 353.7L593.0 353.0L594.3 351.1L596.9 350.5L597.1 347.8L598.8 346.5L600.4 345.1L601.8 343.7L602.5 341.4L604.4 340.2L605.9 338.7L607.3 337.1L609.7 336.6L610.2 334.2L611.7 332.9L613.4 331.7L614.6 330.1L615.9 328.5L617.2 327.1L618.6 325.7L620.4 324.8L621.6 323.2L622.9 321.8L624.5 320.7L626.5 319.7L628.2 318.3L629.5 316.5L630.9 314.8L632.9 313.9L634.2 312.2L635.7 310.7L637.5 309.6L638.8 307.9L640.7 307.1L642.4 305.9L643.4 303.9L645.2 303.0L645.0 299.2L648.0 299.8L649.7 298.4L651.4 297.2L653.3 296.2L655.2 295.3L656.4 293.3L658.1 292.1L659.5 290.4L661.6 290.0L662.8 287.9L665.3 288.3L667.2 287.6L668.5 285.8L670.8 285.6L672.5 284.2L674.6 283.7L676.4 282.6L678.7 282.8L680.7 282.2L682.5 281.1L684.4 280.4L686.3 279.6L688.2 278.9L689.9 277.8L691.8 277.1L694.5 278.2L696.3 276.7L698.4 276.2L700.5 275.7L702.5 274.5L704.7 274.8L706.7 273.8L708.8 273.2L710.8 272.5L713.1 273.4L715.3 273.6L717.2 272.6L719.4 273.0L721.5 273.1L723.5 273.2L725.5 272.3L727.7 272.9L729.7 272.7L731.8 272.0L733.9 271.7L736.0 271.7L738.1 271.8L740.2 270.8L742.4 271.3L744.4 270.4L746.5 270.4L748.6 269.9L750.7 269.8L752.7 268.7L754.9 270.1L756.8 268.4L758.9 269.1L761.0 268.7L763.1 266.6L765.4 266.6L767.6 266.7L769.9 267.3L772.1 268.3L774.2 269.1L776.4 268.6L778.5 269.0L780.5 268.8L782.3 269.7L783.8 270.6L786.4 271.8L788.9 271.1L790.6 272.6L792.5 272.8L793.5 274.3L794.6 275.2L796.5 276.4L797.9 278.2L798.2 280.5L799.1 282.4L798.6 284.3L797.9 286.0L799.2 288.3L798.1 290.4L797.8 292.0L797.7 293.4L798.2 295.4L796.7 297.3L795.7 300.7L794.5 301.7L795.0 303.9L794.2 305.5L793.7 307.5L792.7 309.3L792.8 311.8L790.8 313.2L789.9 315.3L789.2 317.6L788.2 319.7L786.1 321.2L786.0 323.9L784.0 325.4L783.0 327.5L781.9 329.5L780.6 331.0L779.6 332.7L778.7 334.5L777.2 335.9L776.1 337.6L774.7 339.1L773.3 340.6L772.3 342.4L772.1 344.6L770.8 346.3L769.9 348.2L768.2 349.6L766.8 351.3L764.6 352.4L764.6 355.0L763.6 357.0L761.7 358.5L760.7 360.1L759.9 361.9L759.3 364.0L757.8 365.5L756.3 367.0L755.3 368.8L753.9 370.5L752.8 372.3L752.0 374.4L751.1 376.3L749.2 377.6L747.7 379.2L746.7 381.1L745.6 383.0L744.9 385.0L743.3 386.5L742.0 388.1L741.0 389.9L740.4 391.9L739.0 393.3L737.2 394.8L736.6 397.2L734.4 398.3L733.4 400.2L732.1 401.9L730.3 403.2L729.0 404.9L727.6 406.5L726.9 408.6L725.2 409.8L724.0 411.5L721.8 412.4L721.3 414.6L720.7 416.8L719.0 418.1L717.4 419.3L716.6 421.4L715.1 422.8L713.7 424.2L711.5 424.9L711.5 427.5L709.7 428.4L708.4 429.8L707.5 431.5L706.3 433.0L704.9 434.4L703.3 435.5L701.8 436.9L700.5 438.4L699.5 440.2L697.5 441.3L695.9 442.8L695.2 445.2L692.9 446.4L691.4 447.4L690.1 448.7L689.5 450.7L687.5 451.5L686.8 453.5L684.8 454.4L683.3 455.7L682.0 457.4L680.2 458.5L678.9 460.2L677.5 461.7L676.0 463.2L674.5 464.8L673.8 467.0L671.4 467.7L670.1 469.5L668.6 471.0L666.8 472.3L665.5 474.0L664.2 475.6L663.1 477.4L661.0 478.3L659.7 479.9L658.0 481.0L656.9 482.9L655.7 484.6L653.6 485.2L652.7 487.3L650.8 488.1L649.0 489.1L647.1 490.0L645.9 491.8L644.3 492.9L643.3 494.9L641.5 495.9L639.9 497.1L637.8 497.7L636.4 499.2L634.7 500.4L633.1 501.7L631.7 503.1L630.5 505.0L628.0 505.2L627.3 507.6L625.5 508.6L624.6 510.6L622.0 510.7L620.3 511.9L619.6 514.2L618.2 515.8L616.2 516.7L614.9 518.3L613.3 519.7L612.7 522.2L610.4 522.9L609.8 525.4L607.9 526.4L606.7 528.2L605.1 529.6L604.5 532.0L603.1 533.6L601.4 534.7L600.3 536.6L598.5 537.6L597.7 539.6L595.8 540.6L594.9 542.4L593.3 543.5L591.4 544.2L589.8 545.0L588.6 547.3L586.5 548.5L584.8 550.0L582.7 551.0L580.5 551.9L579.0 553.5L577.4 555.0L575.4 556.0L573.9 557.3L572.1 558.4L570.4 559.4L568.6 560.3L567.3 561.6L565.3 562.0L564.6 563.9L563.2 565.0L561.4 565.3L560.4 566.5L558.2 568.5L555.9 569.7L553.7 570.9L552.9 573.5L551.0 574.3L550.2 576.2L548.6 576.9L547.1 577.3L545.8 577.8L544.3 579.8L544.4 581.9L542.0 583.9L541.2 585.4L539.9 585.8L539.5 587.6L537.4 587.0L536.7 589.0L534.6 589.3L532.4 590.4L529.4 591.4L526.8 594.2L525.4 594.6L524.0 595.3L522.5 596.0L520.8 596.7L519.2 597.5L517.8 599.0L516.2 600.3L514.1 600.9L512.3 602.2L510.1 603.0L507.6 603.4L506.3 605.6L504.5 607.0L503.1 609.0L501.0 610.2L498.7 610.9L497.7 613.5L495.8 614.7L493.9 615.9L492.8 618.2L490.0 617.9L488.5 619.3L487.0 620.5L485.7 622.0L484.7 623.7L482.6 623.5L481.5 624.7L481.0 626.5L477.9 628.5L475.0 629.3L472.8 630.0L472.2 632.4L470.4 632.3L469.4 633.2L468.3 634.4L466.4 634.6L464.9 636.3L463.0 636.7L461.5 637.8L460.3 639.3L458.8 640.6L457.1 641.5L454.7 641.8L453.6 643.8L451.4 644.4L450.0 646.3L448.4 647.8L446.1 648.5L444.1 649.7L442.1 651.0L440.8 652.3L438.6 652.5L437.3 654.0L435.4 654.7L433.5 655.5L430.9 655.2L429.8 657.4L428.0 658.4L425.7 658.7L424.2 660.3L422.7 661.8L420.6 662.4L418.4 662.9L416.5 663.8L414.5 664.6L414.2 668.0L411.6 667.7L409.6 668.3L407.4 668.5L406.1 670.2L404.9 672.2L402.9 672.7L401.2 673.8L399.6 675.1L397.8 675.9L396.8 678.5L394.4 678.2L392.1 678.4L390.8 680.3L388.4 680.2L386.8 681.8L385.1 683.3L383.3 684.6L381.6 686.0L379.5 686.1L377.9 687.4L376.5 689.1L374.4 689.6L373.3 692.1L370.7 691.7L369.3 693.7L367.4 694.6L365.6 696.0L363.8 697.2L362.4 699.1L360.4 699.9L358.0 699.8L356.9 702.2L354.5 702.1L352.8 703.1L351.3 704.4L350.0 706.0L348.4 706.8L346.6 707.2L344.5 708.5L342.8 710.4L340.3 710.6L338.1 710.8L336.9 713.1L334.8 713.2L333.0 714.1L331.6 715.3L329.9 716.2L327.9 716.4L326.3 717.6L325.0 719.2L323.4 720.6L321.6 721.7L319.5 722.5L317.1 722.9L315.7 725.0L314.0 726.7L311.3 726.7L309.2 727.8L307.3 729.1L305.5 730.2L303.5 731.0L301.0 730.7L300.0 732.6L299.1 734.5L295.3 734.2L292.9 735.6L290.6 736.4L288.8 737.5L287.1 737.1L286.0 737.3" stroke="#861a2a" stroke-width="1.15" stroke-opacity="1.0"/>
<path d="M287.7 735.6L286.4 735.6L287.0 733.8L289.0 731.0L289.0 729.3L290.4 728.1L291.4 726.2L293.0 724.5L294.1 722.3L295.8 720.4L298.3 719.3L298.8 716.7L299.5 714.8L301.4 714.2L302.0 712.8L302.7 711.4L303.2 709.6L304.5 708.2L305.4 705.8L307.5 703.7L310.2 701.2L310.4 699.4L311.6 698.5L312.5 697.1L313.2 695.5L315.0 694.7L315.5 692.6L317.2 691.4L317.5 689.0L319.8 688.3L319.7 685.3L321.7 684.3L324.0 683.3L325.2 681.4L326.5 679.6L328.0 677.9L329.2 676.0L330.0 673.7L332.5 673.0L333.7 671.1L335.9 670.0L337.5 668.6L339.9 667.9L341.3 666.4L342.4 664.7L344.2 663.7L345.0 661.9L347.0 661.3L348.8 659.7L350.1 657.9L351.9 656.4L353.6 654.9L355.7 653.9L357.1 652.2L358.6 650.7L359.3 648.6L360.3 646.7L361.2 644.9L362.7 643.6L364.3 642.4L365.1 640.6L365.9 638.8L366.3 636.7L367.6 635.4L368.1 633.5L370.2 633.0L370.8 631.2L371.6 629.7L373.3 628.0L374.2 625.8L375.8 624.4L376.7 622.5L378.7 621.7L379.0 619.3L381.4 619.2L382.6 617.7L383.8 616.3L385.3 615.3L386.5 613.8L388.1 612.6L389.7 611.2L390.6 609.1L391.9 607.8L393.8 606.8L394.5 604.8L397.4 604.4L397.3 601.6L398.7 600.0L400.1 598.3L401.3 596.5L402.2 594.4L404.7 593.5L404.9 590.9L406.4 589.4L408.0 587.9L408.9 586.0L410.1 584.3L411.1 582.7L412.6 581.4L414.6 579.9L415.4 577.6L416.4 575.6L417.2 573.5L419.3 572.5L421.1 571.3L421.1 568.7L422.0 566.8L424.2 566.0L425.9 564.7L427.6 563.4L428.0 561.1L430.5 560.4L431.2 558.4L432.3 556.7L434.3 555.8L435.2 554.0L437.3 553.2L437.8 551.0L438.9 549.3L440.0 547.6L442.1 546.7L443.2 545.1L444.0 543.1L445.9 542.0L447.4 540.5L448.9 539.1L449.5 537.1L451.2 535.9L452.6 534.3L453.4 532.3L454.2 530.3L455.8 528.8L456.5 526.8L457.8 525.1L459.2 523.5L460.6 522.1L461.6 520.3L462.1 518.3L462.7 516.4L463.7 514.9L465.3 513.9L466.4 511.7L467.6 509.9L469.0 508.4L469.7 506.6L470.4 504.7L471.7 503.3L473.3 502.2L474.1 500.3L475.1 498.3L476.7 496.6L477.4 494.8L478.6 493.3L480.2 492.0L481.0 490.0L482.2 488.3L483.6 486.7L485.2 485.3L486.6 483.6L488.0 482.0L488.8 480.0L490.7 478.9L492.3 477.7L492.4 475.4L494.4 474.7L495.9 473.0L497.2 471.2L498.6 469.6L499.4 467.6L500.6 466.0L502.0 464.6L503.0 462.9L504.0 461.2L505.4 459.8L506.8 458.3L507.9 456.3L509.7 454.7L511.3 452.9L512.1 450.6L513.4 448.6L515.4 447.3L517.2 446.1L518.5 444.7L519.0 442.9L521.6 441.6L522.4 440.0L522.8 438.3L524.1 437.1L527.0 436.3L528.5 435.4L529.5 433.7L531.6 432.8L533.4 431.5L534.8 429.7L536.5 428.2L537.9 426.7L539.8 425.7L540.7 424.2L542.9 422.0L543.6 419.3L545.8 417.5L546.1 414.6L545.4 412.0L545.6 409.5L546.1 407.1L545.1 405.6L544.4 404.2L545.2 403.0L545.0 401.9L546.4 401.2L549.0 400.0L548.6 397.7L549.5 396.3L551.9 396.2L552.7 394.0L554.8 393.2L556.3 391.5L558.2 390.3L559.8 388.6L561.5 387.3L563.3 386.2L565.2 385.2L566.0 382.7L567.9 381.6L568.1 379.3L569.8 378.3L571.0 376.7L572.6 375.2L573.3 372.5L576.0 370.7L577.4 369.9L578.0 368.1L579.5 366.9L579.7 364.6L582.2 364.1L583.8 362.7L584.1 360.1L586.1 359.0L587.9 357.6L588.8 355.3L589.3 352.7L592.4 352.5L593.5 350.5L594.8 348.6L596.6 347.3L597.2 345.0L599.1 343.8L600.3 342.3L601.8 340.7L603.3 339.1L604.9 337.8L606.4 336.3L607.2 334.1L608.6 332.6L610.3 331.4L611.1 329.4L612.4 327.9L614.6 327.3L615.6 325.4L617.2 324.3L618.4 322.6L619.6 321.0L621.5 320.2L623.0 319.0L624.7 317.6L625.2 314.9L627.4 314.1L629.3 312.9L631.2 311.9L632.1 309.6L634.3 309.0L636.3 308.1L637.4 306.2L639.5 305.5L639.9 302.5L643.6 304.2L644.7 302.3L646.9 301.9L648.8 300.9L649.6 298.2L651.6 297.4L653.6 296.6L655.5 295.8L657.0 294.3L659.5 294.4L660.9 292.9L662.1 290.9L664.6 291.2L666.2 290.0L667.6 288.4L669.6 287.9L671.2 286.4L673.6 286.6L674.7 284.0L676.9 283.9L678.9 283.3L681.1 283.3L682.5 281.1L684.3 280.1L686.1 279.3L688.2 278.9L690.2 278.5L692.0 277.5L694.0 276.7L696.0 275.5L698.1 275.0L700.3 275.0L702.2 273.6L704.3 273.2L706.4 272.3L708.3 270.9L710.7 271.8L712.6 270.3L714.5 268.8L717.0 270.6L719.0 269.6L721.1 269.3L723.2 268.1L725.3 267.6L727.5 269.0L729.5 268.2L731.6 267.5L733.6 266.6L735.7 267.0L737.8 267.2L739.9 267.9L742.0 267.9L744.0 267.3L746.1 267.2L748.4 268.3L750.4 267.4L752.7 268.8L754.7 268.1L756.8 267.3L758.9 268.2L761.0 268.4L763.1 268.6L765.3 268.7L767.5 268.7L769.8 269.3L772.0 269.8L774.2 269.6L776.3 270.0L778.4 270.3L780.3 270.9L782.2 269.9L783.9 270.4L786.6 270.6L789.1 270.5L791.0 271.5L793.1 271.4L794.5 272.6L795.9 273.7L797.8 275.4L798.9 277.7L801.1 279.5L801.0 282.0L801.7 284.2L801.2 286.4L801.2 288.8L800.9 291.3L800.6 293.0L799.9 294.3L800.0 296.3L798.3 298.2L796.9 301.4L795.9 302.5L794.3 303.6L794.6 305.8L793.8 307.5L792.9 309.4L791.7 311.1L791.0 313.3L790.9 315.9L788.8 317.3L788.5 319.9L786.9 321.7L784.5 323.0L784.0 325.4L783.0 327.5L780.8 328.8L781.2 331.4L779.2 332.5L777.5 333.7L776.7 335.6L776.1 337.6L774.5 339.0L772.5 340.1L772.3 342.4L770.7 343.8L769.8 345.7L768.4 347.3L767.0 348.9L766.4 351.0L765.1 352.8L764.2 354.7L763.4 356.9L761.6 358.4L761.2 360.5L760.4 362.3L758.4 363.4L758.7 366.0L757.1 367.4L756.6 369.6L754.3 370.7L753.7 372.9L752.5 374.6L751.4 376.5L750.1 378.2L749.7 380.6L747.9 381.9L747.0 383.9L745.3 385.4L744.5 387.3L743.9 389.4L742.2 390.8L740.9 392.3L739.0 393.3L737.4 395.0L736.1 396.8L734.8 398.6L733.4 400.2L731.9 401.8L728.8 402.0L730.3 406.0L728.3 407.1L726.0 407.8L725.3 410.0L722.8 410.5L722.2 412.7L721.2 414.5L719.7 416.0L718.6 417.7L717.4 419.4L715.8 420.7L715.2 422.8L714.5 424.9L712.6 425.9L711.1 427.1L709.6 428.3L708.7 430.0L707.3 431.3L706.6 433.3L705.1 434.5L703.6 435.8L702.4 437.4L701.1 438.9L700.3 441.0L698.6 442.3L696.6 443.5L695.0 445.0L693.8 447.1L692.4 448.3L690.8 449.3L690.2 451.3L689.3 453.1L687.6 454.2L686.7 456.1L685.0 457.2L684.6 459.7L681.8 460.0L680.6 461.8L679.9 464.0L677.9 465.0L676.5 466.6L674.6 467.8L672.9 469.2L671.0 470.3L670.2 472.5L668.2 473.6L666.8 475.2L665.0 476.4L664.0 478.4L661.7 479.0L661.3 481.6L658.4 481.5L656.5 482.4L655.4 484.3L653.1 484.6L651.6 486.0L650.1 487.3L648.4 488.5L647.1 490.0L645.4 491.1L644.2 492.8L642.4 493.9L641.6 496.0L640.1 497.4L637.7 497.6L636.5 499.3L635.6 501.5L633.4 502.0L631.8 503.3L630.9 505.4L629.4 506.8L627.4 507.6L626.1 509.2L624.6 510.6L624.2 513.3L622.2 514.0L620.8 515.6L619.2 516.9L617.5 518.1L615.8 519.4L614.7 521.3L613.2 522.8L611.2 523.7L609.5 525.0L607.7 526.2L606.6 528.1L605.0 529.5L603.5 531.0L601.4 531.8L600.4 533.7L598.5 534.7L596.7 535.7L595.0 536.7L594.3 538.8L592.5 539.7L591.2 541.1L589.7 542.2L588.1 543.1L586.9 545.3L584.9 546.6L583.7 548.7L582.5 550.8L580.3 551.7L579.1 553.7L576.8 554.3L575.3 555.8L573.5 556.9L572.1 558.3L570.6 559.6L569.3 561.1L568.1 562.6L567.3 564.5L565.6 565.2L563.9 565.8L562.7 566.9L560.7 566.9L558.9 569.4L556.1 570.1L553.8 571.0L551.9 572.1L550.2 573.1L548.1 573.3L547.2 574.9L545.3 575.0L544.2 576.2L542.6 578.8L541.0 579.8L539.6 581.6L538.6 582.0L537.2 582.0L536.6 583.1L535.6 584.0L534.2 585.0L532.7 586.3L530.7 587.8L528.0 589.2L525.1 591.7L523.6 592.0L522.5 593.0L521.2 594.2L520.2 595.8L518.5 596.6L516.4 597.0L516.1 600.1L513.1 599.6L512.0 601.8L509.8 602.5L507.9 603.7L506.6 605.9L504.6 607.1L502.8 608.6L501.0 610.2L499.4 611.9L497.0 612.5L495.3 614.1L493.6 615.4L492.4 617.6L490.5 618.5L488.5 619.3L487.3 621.0L486.1 622.5L484.5 623.3L482.9 624.0L481.7 624.9L480.7 626.0L477.5 627.9L474.7 628.8L474.7 633.1L471.7 631.5L470.4 632.3L469.4 633.3L468.1 634.0L466.3 634.3L464.4 635.6L463.4 637.3L461.5 637.7L459.7 638.5L458.0 639.4L456.4 640.7L454.9 642.1L452.8 642.7L451.3 644.3L449.8 646.0L447.7 646.8L445.7 648.0L443.2 648.4L442.1 650.9L441.1 652.8L438.8 652.8L437.5 654.3L436.4 656.1L433.8 656.0L432.9 658.2L431.0 659.0L429.7 660.9L428.2 662.5L426.0 662.9L424.0 663.7L423.3 666.7L420.9 666.9L419.8 669.1L417.8 669.9L415.9 670.7L414.7 672.8L412.6 673.3L411.5 675.6L409.3 675.8L407.3 676.5L406.3 678.8L403.6 678.1L401.8 679.2L400.7 681.4L398.6 681.8L396.9 683.1L395.4 684.6L392.7 684.0L391.3 685.8L389.7 687.3L388.2 689.2L386.1 689.8L383.9 690.4L382.0 690.9L380.1 691.6L378.1 692.2L376.4 693.4L373.7 692.8L372.8 695.6L370.6 696.1L367.9 695.7L366.0 696.6L364.4 698.4L362.7 699.7L360.0 699.2L358.1 700.0L356.2 700.8L354.0 701.1L352.3 702.1L350.4 702.7L348.9 703.9L347.6 705.4L346.1 706.1L343.9 707.4L341.7 708.4L340.0 710.0L337.9 710.5L336.1 711.4L334.3 712.3L333.1 714.2L331.7 715.5L329.0 714.5L328.0 716.6L326.2 717.3L324.1 717.5L321.5 717.2L320.8 720.3L318.6 720.9L317.2 722.9L314.8 723.5L312.9 724.9L310.9 726.2L308.8 727.1L306.9 728.3L304.7 729.0L303.3 730.6L301.7 731.8L299.8 732.3L298.1 732.6L295.6 734.8L292.8 735.6L290.7 736.7L289.0 738.0L287.2 737.7L286.0 738.2" stroke="#861a2a" stroke-width="1.15" stroke-opacity="1.0"/>
<path d="M286.3 736.8L285.0 735.8L285.7 733.4L287.8 730.4L288.6 729.0L289.6 727.5L291.0 725.8L292.9 724.4L294.7 722.7L295.8 720.4L297.2 718.4L298.8 716.6L301.0 716.0L301.0 713.9L302.3 713.0L303.8 712.2L304.3 710.5L305.1 708.7L306.8 707.0L309.5 705.4L311.4 702.2L312.3 701.1L314.2 700.8L315.0 699.3L316.1 698.0L317.0 696.4L319.0 695.6L320.3 694.2L322.3 693.2L323.1 691.2L324.7 689.8L326.7 688.7L328.2 687.1L329.8 685.6L331.0 683.6L332.6 682.1L334.1 680.4L335.6 678.7L338.0 677.9L337.6 674.5L338.5 672.4L339.9 670.7L341.6 669.4L342.8 667.7L343.8 666.0L344.2 663.6L346.3 663.0L346.3 660.6L347.2 658.4L347.9 655.9L349.9 654.7L350.8 652.5L352.8 651.3L353.5 649.2L353.7 646.6L356.3 646.1L357.1 644.0L357.8 642.1L358.9 640.4L360.0 638.8L361.5 637.5L360.9 634.6L363.2 634.1L364.7 632.9L366.1 631.7L367.3 630.5L368.4 629.1L369.6 627.9L371.7 626.5L372.6 624.2L373.9 622.5L375.5 621.2L377.3 620.3L378.4 618.7L380.3 618.0L381.6 616.7L383.1 615.7L384.7 614.7L386.3 613.6L387.9 612.4L389.5 611.1L391.3 609.8L392.2 608.1L393.2 606.3L394.8 605.0L397.0 604.1L398.0 602.1L399.9 600.9L400.1 598.3L404.2 598.6L404.6 596.2L405.6 594.2L406.4 592.0L407.8 590.4L408.6 588.4L409.7 586.6L411.0 585.0L412.0 583.3L413.4 582.0L413.7 579.3L415.9 578.0L416.6 575.8L417.9 574.1L418.8 572.1L419.9 570.3L420.6 568.3L421.7 566.6L424.0 565.8L425.2 564.2L427.1 563.1L427.6 560.8L429.5 559.6L431.4 558.6L433.3 557.5L433.7 555.4L435.4 554.2L436.1 552.2L438.1 551.3L439.7 550.0L441.2 548.6L442.8 547.4L444.0 545.7L446.0 544.7L447.5 543.3L449.5 542.2L451.3 541.0L451.8 538.9L452.8 537.1L453.9 535.3L455.4 533.9L456.7 532.2L457.7 530.2L459.0 528.6L459.4 526.3L461.3 525.1L462.2 523.3L462.2 520.7L463.7 519.5L464.9 518.0L466.1 516.7L466.9 515.0L467.7 512.6L469.6 511.3L470.2 509.2L471.5 507.8L472.2 506.0L472.9 504.2L474.7 503.2L474.9 500.8L476.4 499.3L478.0 497.6L478.3 495.6L479.1 493.7L480.2 492.1L482.7 491.5L482.8 488.8L483.9 486.9L486.1 486.0L486.8 483.8L488.6 482.5L489.9 480.9L490.9 479.1L491.1 476.8L493.5 476.3L494.0 474.5L495.7 472.8L496.6 470.7L498.7 469.6L499.7 467.8L500.5 465.9L502.0 464.6L503.1 463.0L503.8 461.1L505.9 460.1L507.3 458.7L508.4 456.7L509.8 454.8L511.1 452.7L512.9 451.2L514.7 449.7L516.2 448.0L518.0 446.8L518.9 445.0L519.0 442.9L520.1 440.6L522.2 439.8L523.6 438.9L524.1 437.0L525.7 435.3L526.6 433.8L528.6 433.0L529.8 431.2L530.8 429.1L532.9 428.0L534.1 426.1L535.6 424.7L536.6 423.0L537.6 421.7L539.5 419.4L540.6 417.3L542.1 415.9L543.7 414.1L542.9 412.1L542.7 410.0L541.4 408.1L541.6 405.9L541.5 404.0L542.1 402.1L543.7 401.2L543.8 399.0L546.5 397.5L546.7 395.6L547.3 393.6L549.0 392.6L551.4 392.4L553.0 390.9L554.3 389.0L555.9 387.4L557.9 386.4L559.0 384.4L560.8 383.4L561.7 381.7L563.1 380.0L564.1 378.3L565.2 377.0L567.1 376.2L567.5 374.0L569.7 372.9L571.8 371.2L572.5 367.6L573.1 365.9L574.7 365.1L575.3 363.2L577.1 362.2L578.3 360.5L580.4 359.6L582.6 358.7L584.0 356.9L584.7 354.6L587.5 354.1L589.2 352.6L591.2 351.4L592.4 349.4L594.8 348.6L596.5 347.2L598.3 346.0L599.1 343.9L601.8 343.7L603.3 342.1L604.4 340.3L606.3 339.1L608.5 338.3L608.8 335.7L611.5 335.4L612.1 333.2L612.6 330.9L613.5 329.0L615.1 327.8L617.0 326.8L617.8 324.8L619.7 324.0L620.0 321.5L621.8 320.5L623.0 319.0L624.1 316.9L626.0 315.8L627.5 314.1L628.7 312.3L630.5 311.0L631.8 309.2L633.2 307.6L635.1 306.5L637.2 305.8L638.9 304.7L640.7 303.7L642.4 302.5L643.6 300.7L645.7 300.2L647.5 299.0L649.7 298.4L651.8 297.7L653.8 297.0L655.3 295.5L657.4 295.0L659.1 293.7L661.0 293.0L663.0 292.5L664.3 290.7L666.0 289.7L667.9 289.0L669.5 287.8L671.3 286.8L673.3 285.9L675.4 285.7L677.3 284.8L679.1 283.6L681.3 283.6L682.7 281.6L684.5 280.8L686.8 281.0L688.4 279.6L690.6 279.9L692.2 278.4L694.5 278.2L696.5 277.3L698.3 275.6L700.7 276.2L702.8 275.7L704.8 275.0L706.8 274.3L709.0 274.2L711.0 273.7L713.2 273.9L715.3 273.5L717.2 272.5L719.3 272.4L721.4 272.6L723.5 273.4L725.6 272.3L727.7 272.8L729.8 273.6L731.8 272.4L734.0 272.7L736.0 271.0L738.1 271.6L740.1 270.4L742.3 271.1L744.3 269.6L746.3 269.0L748.5 269.6L750.5 268.3L752.6 268.1L754.7 268.2L756.8 267.1L758.9 266.8L761.0 266.3L763.1 266.0L765.4 266.1L767.7 265.0L770.0 265.5L772.2 266.1L774.5 265.8L776.7 266.1L778.8 265.6L780.8 266.4L782.5 267.6L784.6 266.0L787.2 267.2L789.9 267.0L792.0 268.5L794.1 269.1L795.5 270.8L798.0 271.1L799.9 273.6L800.1 277.0L802.8 278.8L804.9 281.2L804.3 284.1L804.1 286.8L802.8 289.2L802.1 291.6L801.5 293.3L800.8 294.7L800.4 296.5L798.9 298.4L796.5 301.2L795.8 302.5L794.6 303.7L793.9 305.4L793.0 307.1L792.3 309.0L790.5 310.4L790.1 312.8L787.2 313.7L787.4 316.5L785.7 318.2L784.3 320.1L783.9 322.6L782.1 324.3L780.5 326.0L780.1 328.4L778.6 329.8L778.1 331.8L775.5 332.5L775.1 334.7L774.8 336.8L772.8 338.0L771.8 339.7L770.9 341.5L769.4 343.0L767.7 344.4L767.8 346.9L765.9 348.2L764.6 349.9L764.2 352.2L763.3 354.2L760.4 355.0L760.5 357.7L759.8 359.5L759.5 361.7L758.0 363.1L756.9 364.9L756.0 366.8L754.9 368.6L753.8 370.4L752.5 372.1L752.2 374.4L750.7 376.0L750.3 378.4L748.7 379.9L748.2 382.1L747.6 384.4L745.4 385.4L744.5 387.3L743.8 389.4L742.0 390.6L740.9 392.3L740.0 394.1L738.4 395.7L737.5 397.9L735.4 399.0L733.6 400.4L733.0 402.7L731.3 404.1L730.4 406.0L730.1 408.6L727.8 409.3L727.2 411.6L724.6 412.0L723.8 414.1L722.9 416.0L722.0 417.9L719.8 418.7L717.7 419.7L716.7 421.5L715.3 423.0L714.0 424.5L712.6 425.9L711.7 427.6L709.6 428.3L708.5 429.9L706.9 431.0L705.3 432.1L704.7 434.2L703.1 435.4L701.8 436.8L700.6 438.4L699.0 439.8L696.8 440.7L695.3 442.2L693.9 444.0L692.1 445.6L690.9 447.0L689.8 448.4L688.3 449.6L687.3 451.3L686.2 452.9L685.4 454.9L682.6 455.1L681.5 456.9L680.8 459.1L678.9 460.1L677.2 461.5L675.8 463.1L674.4 464.7L672.9 466.2L671.4 467.8L669.5 468.9L668.8 471.2L667.0 472.4L664.4 472.8L663.3 474.7L662.5 476.9L660.3 477.6L659.1 479.3L656.9 479.9L656.2 482.1L654.4 483.0L652.8 484.3L651.3 485.7L649.7 486.8L648.1 488.1L645.9 488.5L645.0 490.7L643.1 491.5L642.4 493.8L641.2 495.5L639.6 496.8L638.1 498.1L637.2 500.2L635.2 501.0L633.9 502.6L632.7 504.4L630.9 505.4L629.9 507.4L628.2 508.5L626.5 509.8L625.7 512.0L624.5 513.6L623.3 515.2L621.8 516.7L620.2 518.0L618.5 519.1L616.2 519.7L615.3 521.9L613.5 523.1L611.3 523.8L610.1 525.6L608.1 526.6L606.3 527.8L604.8 529.2L602.7 530.1L602.1 532.5L599.9 533.2L598.5 534.6L596.7 535.7L595.0 536.8L593.9 538.5L591.7 538.9L590.3 540.2L589.6 542.1L588.8 543.9L586.6 545.0L584.1 545.6L582.8 547.7L581.3 549.3L579.7 550.9L577.7 551.9L575.5 552.8L574.4 554.7L572.6 555.8L571.0 557.0L568.9 557.6L568.6 560.3L566.5 560.7L565.3 562.0L563.9 563.0L562.1 563.5L561.7 565.7L560.3 566.4L557.2 567.1L555.2 568.9L553.5 570.5L551.2 571.1L549.9 572.7L549.1 574.7L547.3 575.1L546.3 576.2L544.9 576.9L543.1 579.1L542.3 580.6L540.9 582.9L539.5 583.2L538.2 583.4L538.0 585.3L536.8 586.0L535.4 586.8L533.8 588.1L532.4 590.4L528.9 590.6L526.2 593.3L524.5 593.3L524.0 595.2L522.0 595.3L520.8 596.6L519.2 597.6L517.7 598.9L516.3 600.4L514.2 601.1L512.1 602.0L510.4 603.4L508.7 604.9L506.4 605.7L504.4 606.8L502.8 608.6L500.8 609.9L498.4 610.5L496.8 612.2L494.9 613.4L492.9 614.5L490.7 615.2L488.2 615.2L487.4 617.7L484.8 617.3L483.7 619.1L482.1 619.9L480.5 620.5L479.5 621.8L477.8 621.7L474.7 623.7L473.0 626.1L470.4 626.0L469.2 627.3L468.1 628.2L466.7 628.6L465.3 629.3L463.9 630.7L461.8 631.8L460.7 633.4L458.8 633.9L457.4 635.4L455.6 636.1L454.0 637.4L452.7 639.0L450.1 639.0L448.4 640.4L446.7 641.7L445.1 643.2L443.8 645.3L441.4 645.8L439.7 647.5L439.0 649.7L437.1 650.2L435.2 650.9L433.4 651.9L432.0 653.3L430.5 654.7L428.6 655.5L427.0 656.9L425.8 658.8L423.7 659.5L421.9 660.6L420.6 662.4L418.6 663.3L417.1 664.8L415.7 666.4L413.6 667.0L412.2 668.6L410.1 669.2L408.6 670.5L407.4 672.6L405.1 672.6L403.8 674.3L401.7 674.7L400.3 676.3L397.7 675.9L396.8 678.4L395.3 680.1L393.2 680.4L391.7 682.0L389.8 683.0L387.9 683.9L386.2 685.3L384.1 686.1L382.2 687.2L380.7 688.5L378.8 689.1L377.0 690.1L375.1 690.8L374.3 694.0L371.7 693.6L369.8 694.5L367.7 695.3L366.2 697.0L364.0 697.6L362.0 698.3L360.4 700.0L357.7 699.3L356.7 701.9L354.4 702.0L353.1 703.6L351.3 704.5L350.1 706.2L347.9 706.0L346.5 707.0L344.0 707.6L342.1 709.1L340.5 710.9L338.4 711.5L336.8 712.9L334.7 713.0L332.9 713.8L330.8 713.8L329.5 715.3L327.6 715.8L326.0 717.0L324.3 718.0L322.4 718.7L320.6 720.0L318.6 720.9L316.8 722.4L314.4 722.9L312.9 724.9L310.6 725.7L308.7 727.0L307.0 728.5L304.9 729.3L303.6 731.2L301.4 731.3L299.9 732.3L298.5 733.3L295.5 734.5L292.8 735.5L290.9 737.1L288.7 737.1L287.0 736.5L286.0 737.7" stroke="#861a2a" stroke-width="1.15" stroke-opacity="1.0"/>
<path d="M286.3 736.8L285.2 735.8L285.9 733.5L287.4 730.2L288.1 728.7L288.9 726.9L289.9 724.9L291.0 722.8L293.5 721.7L294.4 719.3L296.3 717.7L298.5 716.4L298.9 714.3L299.7 712.9L300.5 711.6L301.5 710.4L303.0 709.5L303.4 707.3L304.9 705.4L307.8 703.9L309.5 700.6L309.5 698.7L310.9 697.9L312.6 697.2L313.1 695.4L315.1 694.7L316.2 693.2L317.9 692.1L318.9 690.2L320.0 688.5L321.5 686.9L322.3 684.8L324.5 683.8L325.5 681.7L327.1 680.1L328.8 678.6L330.6 677.2L331.3 674.9L333.7 674.0L335.2 672.3L336.7 670.8L337.5 668.6L338.7 666.8L340.7 665.9L341.5 663.9L343.0 662.6L343.9 660.9L345.8 660.2L346.8 658.0L348.7 656.6L349.7 654.5L350.8 652.5L353.1 651.6L354.4 649.9L355.4 648.0L356.9 646.5L358.4 645.2L359.8 643.8L361.4 642.5L362.4 640.8L363.9 639.6L364.5 637.7L366.0 636.5L367.9 635.7L368.8 634.1L370.4 633.1L371.1 631.5L373.1 631.0L374.5 629.1L376.1 627.6L377.2 625.8L379.0 624.8L381.2 624.3L381.9 622.3L383.5 621.3L384.5 619.7L386.2 618.8L387.2 617.2L388.6 615.8L390.3 614.6L391.6 613.0L393.1 611.2L394.4 609.8L395.8 608.4L396.6 606.4L397.6 604.5L399.1 603.0L400.3 601.2L401.3 599.2L403.1 597.8L405.0 596.4L406.0 594.4L406.7 592.3L408.5 590.9L409.3 588.8L410.8 587.4L412.3 586.0L414.0 584.8L414.2 582.6L415.6 580.7L416.8 578.8L418.5 577.2L420.3 575.9L420.9 573.7L421.4 571.5L423.9 570.9L424.5 568.8L425.0 566.6L427.1 565.7L427.4 563.3L428.0 561.1L430.2 560.2L430.9 558.2L432.0 556.5L433.7 555.3L434.9 553.8L435.6 551.8L436.9 550.3L437.9 548.5L439.1 546.9L440.1 545.0L442.5 544.4L443.2 542.4L444.6 540.9L444.8 538.5L446.1 536.9L447.3 535.3L448.9 534.1L450.4 532.6L452.1 531.4L453.4 529.7L455.2 528.4L456.0 526.4L457.1 524.6L458.8 523.3L461.0 522.4L462.1 520.7L463.7 519.5L464.4 517.6L465.2 516.0L466.9 515.0L468.4 513.2L469.9 511.5L471.3 510.0L472.1 508.2L473.3 506.7L474.5 505.3L476.3 504.3L476.9 502.3L477.9 500.4L479.0 498.4L480.3 497.1L480.1 494.6L482.1 493.7L483.0 491.7L484.4 490.2L485.0 487.9L486.7 486.5L487.8 484.7L489.3 483.1L490.6 481.5L492.1 480.1L494.0 479.1L495.1 477.6L495.5 475.6L498.2 474.7L498.5 472.1L499.9 470.4L501.6 469.1L502.9 467.6L504.0 465.9L504.9 464.2L506.6 463.0L508.0 461.6L509.6 460.4L511.1 458.7L513.0 457.2L514.6 455.5L516.3 453.8L516.6 451.2L518.2 449.6L519.4 447.8L520.6 446.3L522.4 445.4L523.3 442.9L524.5 441.4L525.0 439.9L526.1 438.6L526.9 436.2L528.5 435.5L530.1 434.3L531.0 432.3L532.4 430.6L534.7 429.7L535.2 427.1L536.4 425.4L537.9 424.1L539.5 423.2L540.3 420.0L542.8 418.8L543.2 416.4L544.0 414.2L544.4 412.0L544.2 409.7L544.2 407.5L543.3 405.7L542.6 404.1L544.6 402.8L543.7 401.2L544.5 399.6L545.9 396.9L547.0 395.9L549.3 396.0L550.7 394.8L551.5 392.5L553.1 390.9L554.8 389.5L556.7 388.4L558.1 386.5L559.4 384.8L560.6 383.1L562.0 381.9L562.8 379.7L564.6 378.8L565.1 376.9L567.1 376.2L567.9 374.3L567.9 371.4L569.7 369.4L572.2 367.3L572.7 365.6L573.5 364.0L575.2 363.0L576.1 361.3L577.3 359.6L578.9 358.3L580.2 356.5L581.1 354.3L583.0 353.0L584.6 351.4L586.6 350.2L588.1 348.4L589.0 346.2L591.0 345.0L591.9 342.9L594.0 341.9L595.4 340.3L596.4 338.5L598.1 337.2L599.6 335.6L601.2 334.2L602.9 332.9L604.4 331.5L606.0 330.2L607.7 328.9L609.1 327.5L611.3 326.8L612.7 325.3L614.3 324.1L616.8 323.8L617.6 321.8L619.6 321.0L620.6 319.3L622.8 318.8L624.1 316.9L626.3 316.2L628.4 315.2L630.2 314.0L632.0 312.8L633.4 311.2L635.1 310.0L636.4 308.3L638.2 307.1L639.8 305.8L641.8 305.1L643.6 304.1L644.8 302.3L646.3 301.0L648.4 300.3L649.6 298.3L651.2 296.8L653.2 296.0L655.4 295.6L656.5 293.5L658.3 292.5L660.4 292.0L661.8 290.4L663.8 289.7L665.5 288.6L667.1 287.5L669.1 287.1L670.8 285.6L672.8 284.8L674.6 283.9L676.7 283.5L678.6 282.4L680.7 282.3L682.6 281.3L684.3 280.1L686.3 279.6L687.8 277.8L690.0 278.0L691.9 277.3L694.1 276.9L696.3 276.8L698.3 275.8L700.4 275.3L702.7 275.3L704.8 274.8L706.8 274.3L708.9 273.9L711.0 273.5L713.1 273.1L715.2 272.9L717.2 272.3L719.4 273.3L721.4 272.1L723.5 272.2L725.6 273.5L727.7 273.3L729.8 274.5L731.8 272.3L734.0 273.5L736.1 272.5L738.2 271.9L740.4 272.6L742.4 271.2L744.6 272.2L746.7 272.1L748.7 271.6L750.7 270.4L752.8 270.0L754.8 269.8L757.0 271.0L759.0 269.3L761.0 269.5L763.1 270.7L765.3 270.3L767.5 270.0L769.8 269.2L772.0 269.5L774.1 271.2L776.3 270.5L778.4 270.4L780.3 270.7L782.1 270.6L783.7 271.4L786.5 271.3L788.6 272.3L790.2 273.9L792.3 273.2L793.4 274.6L795.0 274.8L796.5 276.4L797.9 278.2L798.1 280.6L798.9 282.4L798.9 284.2L799.4 286.2L799.7 288.5L799.4 290.8L798.4 292.2L797.6 293.4L797.1 294.8L796.3 297.0L794.4 300.0L794.0 301.5L793.4 303.0L792.4 304.5L791.2 306.1L791.7 308.7L790.1 310.2L789.3 312.3L788.2 314.3L786.7 316.1L785.2 317.9L784.8 320.4L783.0 322.1L781.6 324.0L781.2 326.5L779.9 328.3L778.8 329.9L778.3 332.0L777.0 333.5L776.5 335.5L775.0 336.9L774.4 338.9L773.5 340.7L772.3 342.4L771.0 344.0L770.8 346.3L769.5 348.0L768.6 349.8L767.2 351.5L766.3 353.5L764.8 355.1L764.2 357.4L762.9 359.2L761.0 360.3L760.5 362.3L759.8 364.3L757.6 365.3L757.5 367.7L756.4 369.5L754.7 371.0L753.8 372.9L752.4 374.6L751.7 376.7L749.5 377.8L748.7 379.9L748.1 382.1L745.6 383.0L744.3 384.7L743.2 386.4L741.4 387.7L740.7 389.7L740.3 391.9L737.8 392.4L736.2 394.1L734.7 395.7L732.6 396.8L731.7 398.9L730.3 400.5L728.2 401.5L728.0 404.0L725.2 404.4L723.7 405.8L722.6 407.6L720.8 408.7L719.8 410.6L718.5 412.1L716.5 413.1L716.0 415.4L714.1 416.5L713.6 418.7L711.7 419.8L711.3 422.1L710.2 423.7L709.1 425.3L707.9 426.8L706.9 428.5L706.2 430.3L703.8 430.8L702.8 432.4L701.8 434.2L700.6 435.7L699.3 437.3L697.6 438.6L696.8 440.7L694.8 441.8L693.1 443.3L692.2 445.7L690.3 446.4L688.8 447.5L688.3 449.6L686.7 450.8L685.9 452.7L683.3 453.1L682.0 454.6L681.0 456.4L679.9 458.3L678.2 459.6L676.2 460.6L675.2 462.6L673.8 464.2L672.6 465.9L670.4 466.8L669.8 469.2L669.0 471.4L666.7 472.2L665.3 473.7L663.6 475.0L662.8 477.1L661.1 478.4L659.6 479.8L658.5 481.6L657.2 483.2L656.3 485.2L654.6 486.4L652.1 486.6L651.3 488.8L650.2 490.6L647.8 490.9L647.0 493.1L645.1 493.9L642.5 493.9L641.9 496.5L639.9 497.1L638.9 499.1L636.5 499.3L635.1 500.9L633.9 502.7L631.8 503.3L630.5 504.9L628.3 505.5L626.4 506.5L624.6 507.5L623.9 509.9L621.7 510.5L620.2 511.8L618.5 513.0L617.1 514.6L615.7 516.2L614.2 517.5L612.9 519.3L611.4 520.8L608.3 520.6L607.9 523.3L606.1 524.5L604.6 526.0L603.8 528.1L603.4 530.8L600.3 530.5L599.4 532.7L597.7 533.8L596.2 535.2L594.9 536.6L593.8 538.3L592.3 539.5L590.7 540.5L589.3 541.8L587.4 542.3L586.0 544.3L584.7 546.4L582.7 547.5L581.4 549.5L579.1 550.2L577.3 551.5L575.6 552.8L574.0 554.2L572.5 555.6L570.7 556.6L569.1 557.8L567.4 558.8L566.4 560.5L565.2 561.9L563.8 562.9L561.9 563.3L560.3 563.9L560.0 566.0L557.7 567.8L555.6 569.4L553.7 570.8L551.6 571.6L550.5 573.5L548.6 574.0L547.1 574.8L545.9 575.8L544.7 576.7L542.8 579.0L542.6 580.8L540.6 582.6L539.6 583.4L538.2 583.4L537.7 584.9L536.1 584.8L535.3 586.7L533.7 587.9L531.6 589.2L529.3 591.3L525.8 592.8L525.0 594.0L524.0 595.3L522.7 596.2L520.9 596.7L520.0 598.7L517.7 598.9L516.1 600.1L515.0 602.3L513.1 603.3L511.1 604.4L510.1 606.9L507.3 606.9L505.1 607.9L503.7 609.9L501.7 611.1L499.4 611.9L497.6 613.4L495.4 614.1L493.2 615.0L491.6 616.4L489.9 617.7L488.2 618.9L485.9 619.0L484.1 619.7L483.4 621.8L482.0 622.7L480.0 622.6L479.1 623.6L475.5 624.9L472.9 626.0L472.8 629.9L470.8 630.0L468.8 629.4L468.1 631.1L466.1 630.8L465.0 632.4L463.4 634.1L461.9 635.1L460.8 636.8L459.4 638.1L457.4 638.6L456.4 640.6L455.1 642.3L452.5 642.3L451.1 644.1L449.4 645.3L448.1 647.4L445.7 647.9L444.2 649.8L442.3 651.3L441.0 652.6L439.1 653.1L437.9 654.8L436.0 655.6L434.5 657.0L432.1 657.1L430.9 658.9L429.5 660.6L427.6 661.5L425.3 661.8L424.0 663.8L422.3 665.0L420.2 665.8L417.9 666.0L416.4 667.5L414.9 669.2L413.5 670.8L411.0 670.7L409.4 672.0L408.1 673.7L406.4 674.9L404.4 675.4L402.8 676.7L401.1 677.8L398.8 677.9L397.3 679.3L395.4 680.2L394.0 682.0L391.8 682.3L390.6 684.5L388.4 684.9L386.9 686.7L384.5 686.8L382.5 687.6L381.1 689.2L378.8 689.1L377.5 691.1L375.3 691.2L373.3 692.1L371.5 693.2L369.4 693.8L367.8 695.4L365.8 696.3L363.9 697.4L361.8 697.9L359.7 698.6L358.1 700.2L356.6 701.6L354.5 702.2L352.9 703.4L351.2 704.3L349.2 704.5L347.3 704.7L346.2 706.3L343.7 707.0L341.6 708.2L340.0 709.9L337.5 709.6L335.9 711.0L333.8 711.2L331.8 711.5L330.2 712.6L328.7 713.8L326.9 714.4L325.5 716.0L323.3 716.0L321.6 717.3L319.6 718.2L317.8 719.5L315.0 719.4L313.1 720.7L311.9 723.2L309.5 723.8L307.7 725.3L305.4 725.9L303.5 726.9L301.6 727.9L300.5 729.8L298.7 730.3L297.7 731.8L294.6 732.7L291.6 733.0L289.6 733.9L288.1 735.0L287.0 735.8L286.0 734.8" stroke="#861a2a" stroke-width="1.15" stroke-opacity="1.0"/>
<path d="M800.2 280.1L799.6 280.7L797.4 284.3L796.3 285.2L796.0 286.7L795.2 288.1L794.9 289.9L793.3 291.2L793.1 293.4L791.4 294.9L790.5 297.0L789.7 299.2L787.8 300.9L786.6 303.1L786.1 305.7L785.1 308.2L782.9 308.9L782.8 311.0L781.8 312.6L780.4 314.0L779.4 315.7L778.2 317.4L777.7 319.5L776.1 321.0L774.7 322.7L773.5 324.5L773.0 326.8L771.3 328.2L770.6 330.4L769.4 332.3L767.4 333.6L766.4 335.5L764.5 336.8L764.1 339.1L763.3 341.1L761.8 342.5L760.2 344.0L759.6 346.2L758.2 347.8L756.9 349.4L756.5 351.7L755.5 353.5L752.6 354.0L752.4 356.4L751.3 358.1L749.7 359.6L748.7 361.3L747.7 363.2L746.6 364.9L745.0 366.3L744.4 368.4L742.0 369.2L741.9 371.7L740.1 372.9L739.1 374.8L738.0 376.6L736.4 378.0L735.1 379.7L734.0 381.5L733.3 383.6L731.5 385.0L729.7 386.3L728.8 388.3L727.8 390.2L727.1 392.3L725.5 393.8L724.4 395.6L723.4 397.5L721.7 398.9L720.4 400.5L719.7 402.5L718.9 404.4L717.8 406.1L716.2 407.4L715.1 409.2L713.2 410.4L712.3 412.4L710.4 413.6L709.7 415.7L708.1 417.0L705.7 417.6L705.2 419.9L703.1 420.6L702.2 422.5L701.3 424.4L699.6 425.4L698.1 426.7L697.2 428.6L696.1 430.2L693.8 430.7L692.8 432.5L690.4 433.0L689.8 435.3L688.9 437.2L686.8 438.0L684.9 438.9L683.7 440.5L682.5 442.1L681.7 444.1L680.0 445.2L677.9 446.0L676.2 447.1L675.4 449.1L673.9 450.6L672.9 452.5L670.4 453.0L669.0 454.7L667.8 456.3L666.8 458.1L664.9 459.0L663.4 460.4L662.7 462.6L661.3 464.0L659.1 464.7L658.1 466.7L656.2 467.7L654.9 469.3L653.2 470.7L651.7 472.1L650.7 474.2L648.7 475.3L646.5 476.0L644.6 477.1L643.2 478.8L641.5 480.1L640.0 481.4L639.1 483.3L638.1 485.0L636.6 486.3L635.1 487.6L633.1 488.3L631.9 489.9L630.3 491.1L628.9 492.5L627.8 494.2L626.2 495.5L625.0 497.1L623.3 498.3L621.0 498.9L619.9 500.8L619.3 503.2L617.5 504.4L615.2 505.1L613.7 506.6L612.4 508.4L610.6 509.4L608.7 510.2L607.6 512.0L606.1 513.4L605.1 515.4L603.1 516.3L601.4 517.7L600.2 519.5L598.4 520.7L596.8 522.3L594.6 523.0L593.4 524.9L591.7 526.3L589.6 527.1L588.7 529.4L585.9 529.3L585.4 532.0L583.3 532.6L582.4 534.7L580.3 535.3L579.1 536.8L577.2 537.5L575.8 538.8L574.3 540.8L571.8 541.6L570.2 543.5L568.2 544.7L566.9 547.0L564.9 548.3L562.8 549.3L561.5 551.3L559.2 551.9L557.6 553.2L556.0 554.5L554.2 555.4L553.2 557.2L551.0 557.3L549.9 558.6L549.6 560.6L547.8 560.8L545.3 563.6L545.0 566.0L543.6 567.0L542.6 568.3L541.8 570.8L540.5 571.7L539.1 572.3L538.3 573.4L536.9 573.9L535.8 575.3L534.1 576.3L531.8 577.4L529.7 579.6L525.9 580.8L524.2 580.9L524.3 583.7L521.8 583.0L520.9 584.6L519.5 585.7L517.7 586.4L516.3 587.8L514.5 588.7L512.8 589.9L511.8 592.1L509.0 591.9L507.7 593.9L505.8 595.0L504.4 597.0L502.3 598.0L499.8 598.4L498.3 600.2L496.8 602.0L494.9 603.3L492.4 603.7L491.2 605.8L489.1 606.7L487.3 607.9L486.3 610.1L484.4 611.0L483.2 612.9L480.9 613.0L479.4 614.2L478.1 616.1L476.5 617.8L475.3 619.7L473.2 620.4L471.3 621.3L469.7 622.7L468.2 624.1L466.2 624.8L464.8 626.3L463.6 627.9L461.7 628.6L460.0 629.7L458.7 631.1L456.6 631.6L455.6 633.6L454.1 634.8L452.3 635.6L450.9 637.0L449.2 638.2L447.6 639.3L445.8 640.3L444.3 641.8L442.4 642.6L440.4 643.1L438.6 644.1L437.5 645.9L435.5 646.6L433.5 647.0L432.3 648.8L430.7 650.0L429.3 651.5L427.0 651.4L425.6 653.0L424.0 654.2L422.3 655.2L420.0 655.3L418.3 656.5L416.6 657.6L415.4 659.7L413.2 660.1L411.7 661.6L409.8 662.6L407.8 663.6L405.8 664.4L403.6 665.2L401.8 666.6L400.3 668.5L398.4 668.9L396.8 669.9L395.2 670.7L393.8 672.2L392.0 672.9L390.3 674.0L388.7 675.2L387.1 676.4L385.3 677.3L382.9 677.3L381.3 678.6L379.2 679.2L377.6 680.6L375.7 681.5L374.4 683.5L372.3 683.9L370.7 685.4L368.8 686.3L367.3 687.8L365.5 688.9L363.3 689.3L361.6 690.6L359.9 691.6L358.1 692.6L356.7 694.3L354.8 694.9L353.3 696.4L351.6 697.3L349.6 697.8L348.1 699.0L346.7 700.2L344.9 701.6L343.2 703.1L340.6 703.1L339.0 705.0L337.1 706.3L335.6 708.2L333.4 708.9L331.8 710.9L329.3 711.1L327.2 711.8L325.5 713.4L323.4 714.2L321.1 714.6L319.3 715.7L317.7 717.1L315.1 716.8L313.5 718.0L311.7 718.8L309.6 719.1L308.0 719.9L306.5 720.9L305.3 722.2L303.8 722.8L302.5 723.7L300.6 723.2L299.4 724.0L295.7 726.4L292.7 727.8L290.9 729.8L288.5 729.9L287.6 731.1L286.6 731.7L285.9 732.5" stroke="#861a2a" stroke-width="1.15" stroke-opacity="1.0"/>
<path d="M798.7 279.6L798.7 280.3L796.6 283.9L796.2 285.1L795.1 286.2L795.5 288.2L793.6 289.2L793.5 291.3L792.4 293.0L791.5 295.0L791.0 297.3L789.9 299.3L788.3 301.2L788.0 303.9L785.4 305.3L784.5 307.8L783.8 309.4L783.1 311.2L781.7 312.5L780.7 314.2L779.9 316.0L779.2 318.0L778.1 319.8L777.2 321.7L776.2 323.6L774.6 325.2L773.7 327.3L772.1 328.8L771.8 331.3L770.1 332.7L768.0 334.0L766.9 335.8L765.7 337.6L764.2 339.2L763.4 341.2L762.2 342.9L760.2 344.0L759.3 346.0L758.7 348.1L756.7 349.3L756.0 351.3L754.5 352.8L753.5 354.6L751.2 355.5L750.2 357.4L749.4 359.3L747.8 360.7L746.5 362.3L744.6 363.5L744.0 365.5L742.9 367.3L741.9 369.2L739.8 370.2L739.4 372.4L738.1 374.1L737.6 376.3L735.9 377.7L734.8 379.5L734.1 381.6L732.7 383.2L731.2 384.8L729.7 386.4L728.4 388.1L727.6 390.1L726.3 391.8L725.8 394.0L724.1 395.4L722.8 397.1L722.0 399.1L721.0 400.9L719.0 402.0L718.6 404.2L717.3 405.7L716.1 407.2L715.2 409.4L713.5 410.7L711.8 412.0L710.0 413.3L709.2 415.3L707.6 416.6L706.0 417.9L705.1 419.7L703.5 421.0L701.8 422.1L700.1 423.2L698.8 424.7L698.1 426.8L696.8 428.2L694.5 428.6L693.0 430.0L692.3 432.0L690.0 432.7L689.4 434.9L687.8 436.1L686.6 437.8L684.7 438.7L683.6 440.5L681.6 441.2L680.6 443.0L679.0 444.3L678.2 446.2L676.0 446.9L674.5 448.3L674.3 451.0L671.2 450.8L669.6 452.2L668.1 453.7L667.1 455.5L665.8 457.1L664.8 458.9L662.6 459.4L661.7 461.4L659.3 461.9L658.3 463.8L656.5 464.9L654.7 466.1L653.2 467.5L651.9 469.2L649.9 470.2L648.4 471.7L647.0 473.3L646.1 475.5L643.7 476.1L642.4 477.9L639.7 478.1L639.2 480.5L637.5 481.6L636.8 483.6L635.9 485.6L633.7 486.1L632.5 487.7L630.7 488.6L629.9 490.6L628.2 491.7L626.6 493.0L625.6 494.9L624.4 496.5L622.5 497.5L621.1 499.0L619.9 500.8L618.2 502.1L617.4 504.2L615.2 505.0L613.7 506.6L612.7 508.8L610.2 508.9L609.5 511.1L607.6 512.0L605.9 513.2L604.0 514.2L603.0 516.2L601.5 517.7L599.6 518.8L597.6 519.8L596.4 521.7L594.0 522.3L593.0 524.5L591.3 525.8L589.6 527.1L588.2 528.8L586.9 530.5L585.2 531.7L583.5 533.0L582.2 534.5L579.8 534.7L578.6 536.3L577.7 538.2L575.0 537.7L573.5 539.8L571.7 541.4L570.1 543.3L568.2 544.8L565.9 545.7L564.8 548.0L561.9 548.0L560.4 549.8L559.3 551.9L557.1 552.7L555.6 554.0L553.7 554.8L552.9 556.8L551.7 558.2L549.9 558.6L548.6 559.5L547.3 560.3L545.3 563.5L543.2 564.9L542.8 566.6L542.9 568.5L541.1 570.1L539.4 570.5L538.8 571.9L538.0 573.0L536.4 573.2L535.5 574.9L533.0 574.8L531.3 576.5L528.9 578.5L525.2 579.9L524.4 581.2L523.1 582.1L522.1 583.3L520.7 584.3L519.0 585.1L517.7 586.4L516.1 587.6L514.6 588.8L512.9 590.0L511.3 591.4L508.9 591.9L507.5 593.6L505.6 594.8L503.7 596.0L502.0 597.5L500.3 599.1L498.2 600.1L496.9 602.1L494.3 602.4L492.6 604.0L491.2 605.8L489.2 606.9L487.2 607.7L486.6 610.5L484.3 611.0L482.8 612.2L480.9 613.0L479.8 614.7L477.7 615.6L476.2 617.3L474.5 618.6L473.5 620.9L471.5 621.7L469.8 622.7L468.2 624.1L465.8 624.2L465.1 626.6L463.1 627.3L461.8 628.7L460.6 630.4L458.9 631.4L457.1 632.3L455.7 633.7L453.9 634.5L452.7 636.3L450.8 636.9L448.7 637.3L447.7 639.4L445.8 640.3L444.0 641.2L442.7 643.1L441.2 644.4L439.5 645.5L437.8 646.5L436.4 648.0L434.6 648.8L433.2 650.2L431.4 651.1L429.4 651.7L428.2 653.3L426.4 654.3L425.2 656.1L423.2 656.7L421.6 658.0L419.8 658.9L418.5 660.6L416.3 661.2L414.1 661.5L412.7 663.3L410.6 664.0L408.9 665.3L407.2 666.8L404.9 667.3L403.0 668.5L400.6 669.0L398.8 669.6L397.7 671.4L396.2 672.5L393.8 672.2L392.0 673.0L390.4 674.1L388.5 674.8L386.7 675.7L385.5 677.7L383.0 677.5L381.2 678.6L379.8 680.3L377.9 681.2L375.7 681.4L374.5 683.6L372.3 684.0L370.4 684.9L368.6 685.9L366.6 686.6L364.9 687.9L362.9 688.6L361.5 690.3L360.1 692.1L358.3 692.9L355.7 692.4L354.2 693.8L352.2 694.4L350.6 695.5L349.1 696.8L347.4 697.7L345.7 698.5L343.8 699.6L342.1 701.2L340.5 703.1L338.2 703.6L336.3 704.8L333.9 705.2L332.3 707.0L330.1 707.8L328.0 708.7L326.0 709.8L324.3 711.2L322.6 712.7L320.0 712.5L318.4 714.1L316.5 715.0L315.0 716.6L313.4 717.9L311.4 718.3L309.7 719.1L308.0 720.0L305.8 719.6L304.7 721.1L303.5 722.3L302.2 723.2L301.0 724.0L300.3 725.4L296.2 727.1L293.2 728.7L291.7 730.9L289.6 731.2L288.3 732.0L287.6 733.0L286.7 733.6" stroke="#861a2a" stroke-width="1.15" stroke-opacity="1.0"/>
<path d="M541.3 508.4L542.4 507.7L543.4 506.4L544.4 504.9L545.4 502.9L548.3 502.0L550.1 499.6L551.1 496.4L552.9 495.7L553.0 493.8L553.9 492.3L554.9 490.8L556.4 489.6L558.8 488.9L559.2 486.7L559.8 484.7L560.9 482.8L562.8 481.5L563.6 479.3L565.1 477.6L566.8 475.9L568.4 474.2L569.8 472.2L571.0 470.0L572.6 469.0L573.6 467.5L574.1 465.6L575.2 464.0L576.9 462.9L578.1 461.3L579.7 460.0L579.9 457.6L581.4 456.2L582.8 454.6L584.9 453.6L585.4 451.3L587.0 449.9L588.2 448.2L589.9 446.8L590.9 444.9L592.7 443.7L593.5 441.6L595.0 440.2L596.1 438.5L598.0 437.4L598.3 435.1L599.6 433.7L601.4 432.4L602.1 430.2L602.9 428.1L605.1 427.1L606.1 425.2L607.7 423.7L609.6 422.5L611.0 420.9L611.7 418.7L613.6 417.6L614.4 415.6L616.2 414.4L617.8 413.1L618.5 411.0L620.9 410.4L621.2 408.2L622.6 406.8L624.0 405.7L624.0 403.2L626.1 402.8L626.7 401.0L628.5 399.2L630.4 397.6L631.6 395.7L633.6 394.7L634.8 393.1L636.4 391.9L637.4 390.3L639.6 389.7L640.2 387.6L641.4 386.0L643.2 384.7L644.6 383.0L645.6 380.6L647.2 379.5L648.1 377.9L649.7 376.6L651.0 375.0L652.0 373.2L652.6 371.0L654.5 369.7L655.6 367.8L658.0 366.8L658.7 364.6L659.7 362.6L662.0 361.6L661.7 358.6L663.6 357.4L665.5 356.1L666.5 354.3L669.0 353.6L669.1 351.1L670.1 349.0L671.8 347.6L673.4 346.1L674.9 344.5L676.0 342.7L677.6 341.3L679.5 340.2L680.9 338.6L681.8 336.6L683.6 335.4L685.4 334.2L686.3 332.2L687.0 330.0L689.6 329.5L690.1 327.1L691.6 325.7L693.3 324.5L694.9 323.2L696.3 321.9L697.6 320.5L698.3 318.5L699.8 317.3L700.7 315.4L702.1 314.1L704.0 313.1L704.8 311.2L706.7 310.2L708.1 308.8L709.0 306.8L710.9 305.7L712.3 304.1L714.4 303.1L715.5 301.1L717.0 299.9L718.1 298.3L719.4 296.6L721.2 295.5L722.5 293.8L724.2 292.4L724.7 289.7L726.6 288.5L728.9 287.5L729.8 285.3L731.3 283.6L733.3 282.5L734.6 280.7L736.1 279.3L737.4 277.7L739.1 276.6L740.0 274.9L741.8 274.2L742.5 272.5L744.1 271.9L745.7 271.9L748.0 269.1L750.5 268.4L752.5 268.6L753.8 267.1L755.5 266.9L757.5 266.3L760.1 267.0L761.8 267.0L763.6 266.9L765.6 266.0L767.7 265.9L769.9 266.5L772.0 266.7L774.2 266.9L776.4 266.0L778.5 266.2L780.5 265.9L782.4 266.3L783.9 267.4L786.6 267.9L789.0 268.9L791.8 268.8L793.8 270.0L795.2 271.8L796.7 272.7L798.1 272.9" stroke="#861a2a" stroke-width="1.15" stroke-opacity="1.0"/>
<path d="M715.0 273.3L716.2 272.6L717.8 272.8L719.6 273.4L721.7 273.1L723.9 272.8L726.2 272.9L728.7 273.4L731.1 273.3L733.5 272.5L735.8 272.9L738.0 272.5L740.1 272.8L742.2 272.9L744.2 272.7L746.3 272.3L748.4 271.7L750.4 271.3L752.5 271.0L754.7 271.0L756.8 271.4L758.9 270.9L761.0 271.3L763.2 271.5L765.3 271.9L767.6 271.9L769.8 272.3L772.1 272.4L774.2 273.3L776.4 273.6L778.5 273.8L780.4 274.4L782.2 274.9L783.9 275.6L786.7 276.3L789.3 277.4L791.5 278.7L793.6 279.5L795.3 280.4L796.7 280.8" stroke="#861a2a" stroke-width="1.15" stroke-opacity="1.0"/>
<path d="M740.4 272.5L741.2 271.4L742.9 270.6L744.6 269.4L746.3 267.8L748.1 266.2L750.5 265.9L752.4 265.4L754.4 265.2L756.6 265.4L758.9 265.0L761.2 265.8L763.6 264.9L766.0 265.7L767.9 265.4L769.9 266.3L772.1 264.9L774.1 265.9L776.3 265.8L778.2 267.1L780.3 266.4L782.1 267.1L783.8 267.5L786.4 267.6L788.6 268.4L790.7 269.5L792.5 270.5L794.6 270.7L795.7 272.1L797.3 273.9L798.7 274.8L799.2 276.8L799.7 278.7L801.1 281.0L801.0 283.6L800.6 286.0L801.0 288.4L801.0 290.8L800.3 292.9L799.9 294.3" stroke="#861a2a" stroke-width="1.15" stroke-opacity="1.0"/>
<path d="M740.9 271.1L742.3 270.8L744.2 270.9L746.4 271.6L749.0 271.6L751.4 273.0L754.0 273.9L755.8 274.6L757.7 275.6L760.1 275.7L761.9 277.4L764.0 278.3L766.7 277.9L768.3 279.8L770.4 280.1L772.1 280.9L774.5 281.7L776.7 282.0L778.4 283.4L780.4 283.4L782.0 284.6L784.0 285.1L786.1 284.8L788.3 285.3L790.6 284.8L792.7 285.0L794.6 285.2L796.3 285.6L798.6 288.4L798.9 291.0" stroke="#861a2a" stroke-width="1.15" stroke-opacity="1.0"/>
<path d="M283.6 708.4L283.2 706.7L283.1 704.7L283.4 702.3L285.1 699.8L285.1 698.2L285.3 696.4L286.1 694.8L287.5 693.4L288.2 691.5L289.4 689.6L291.2 687.9L292.0 685.4L293.4 682.9L294.2 681.4L295.5 680.0L296.9 678.7L297.8 676.8L298.8 674.9L300.5 673.6L301.9 671.8L303.2 670.0L304.4 668.1L306.1 666.5L306.9 664.3L309.2 663.2L309.5 660.6L310.6 658.8L312.1 657.3L314.1 656.3L314.5 653.8L315.5 651.8L317.5 650.7L318.1 648.5L320.5 647.6L321.5 645.7L322.7 644.1L323.5 642.1L325.0 640.6L326.1 638.9L327.9 637.7L329.2 636.1L330.3 634.4L331.5 632.6L333.0 631.3L334.7 630.1L336.1 628.7L337.5 627.4L338.7 625.9L340.3 624.9L341.3 623.2L342.9 622.0L344.3 620.6L345.6 619.1L346.9 617.5L348.5 616.1L350.0 614.5L351.4 612.6L353.2 611.8L354.0 609.9L355.8 608.9L357.2 607.5L358.4 605.8L359.2 603.7L360.6 602.1L361.9 600.4L363.6 598.9L364.6 596.9L366.5 595.6L367.3 593.3L369.4 592.2L370.2 590.2L372.3 589.1L373.9 587.7L374.4 585.4L375.9 584.1L376.9 582.4L379.1 581.3L380.3 579.2L381.9 577.5L382.9 575.3L385.5 574.7L386.9 573.0L388.0 571.0L389.9 569.9L390.9 568.0L392.4 566.5L393.9 565.2L395.8 564.2L396.5 562.3L396.9 560.2L398.9 559.5L400.2 557.4L401.5 555.6L403.4 554.3L404.2 552.3L404.8 550.3L406.2 548.8L406.9 546.9L408.4 545.3L409.2 543.3L410.6 541.5L412.6 540.1L413.5 538.3L415.3 537.2L416.9 535.9L418.0 533.8L419.6 532.3L421.1 530.5L423.2 529.6L425.7 529.1L426.8 526.9L428.8 525.9L430.3 524.3L432.3 523.4L433.9 522.2L434.8 520.2L436.9 519.2L438.4 517.7L440.0 516.3L441.5 514.9L442.9 513.4L444.7 512.5L445.9 510.9L446.6 508.6L448.7 508.0L450.3 506.7L451.4 505.0L453.4 504.1L454.3 502.2L456.3 501.2L457.4 499.4L458.7 497.7L460.5 496.6L461.8 494.9L462.9 493.0L465.0 492.3L466.8 491.1L468.3 489.8L469.5 488.2L470.9 486.6L472.2 484.9L474.2 484.0L476.0 482.9L477.3 481.1L478.9 480.0L481.1 479.5L482.3 477.7L484.2 476.9L486.0 476.0L487.4 474.5L489.3 473.8L491.1 472.5L492.8 470.9L494.6 469.5L496.5 468.2L498.4 467.0L500.3 465.7L502.4 464.9L504.0 463.6L505.7 462.6L507.6 462.1L509.6 460.4L511.6 459.8L513.4 459.2L514.8 457.7L517.5 458.2L519.9 456.5L521.2 455.5L522.6 454.4L524.4 453.8L526.4 453.6L528.3 453.0L530.2 452.3L532.3 451.7L534.0 450.1L536.1 449.4L538.6 449.7L540.3 448.2L542.6 448.0L544.1 446.2L546.1 445.7L547.6 444.5L549.4 443.5L551.7 443.9L553.0 442.0L554.8 441.1L556.5 440.1L558.6 439.7L559.9 437.7L562.0 437.2L563.8 436.1L565.6 435.0L567.9 434.8L569.9 433.8L571.3 432.3L573.0 431.3L575.1 431.1L576.8 430.1L578.6 429.1L580.3 427.8L582.3 427.4L584.2 426.6L586.3 426.2L588.1 424.9L590.0 424.2L592.0 423.3L593.8 422.1L596.0 421.8L597.6 419.9L599.8 419.6L601.6 418.8L603.2 417.5L605.4 417.5L607.2 416.5L609.0 415.5L610.7 414.2L612.9 414.1L615.1 414.0L617.0 413.3L618.6 411.4L620.7 411.1L622.5 409.9L624.6 409.5L626.6 409.0L628.5 408.1L630.2 406.8L632.5 407.0L634.2 405.6L636.1 404.8L638.0 404.1L640.1 403.7L641.9 402.7L644.3 403.2L645.8 401.6L647.7 400.8L649.5 399.6L651.6 399.4L653.5 398.6L655.6 398.4L657.2 397.0L659.3 396.7L661.2 396.0L663.0 395.0L664.9 394.3L666.9 393.7L668.6 392.6L670.8 392.6L672.6 391.8L674.5 391.0L676.4 390.4L678.4 389.9L680.5 390.0L682.1 388.5L684.1 388.3L685.9 387.3L688.1 387.9L690.0 387.2L691.9 386.4L693.6 385.2L695.5 384.7L697.4 383.8L699.2 383.0L701.4 383.4L703.4 383.0L705.2 382.3L707.2 381.8L709.1 381.1L710.9 380.1L713.1 380.3L714.8 379.1L716.6 378.2L718.5 377.4L720.8 377.9L722.6 377.0L724.4 376.2L726.4 375.8L728.2 374.8L730.4 374.8L731.8 372.9L733.8 372.3L735.8 371.9L737.7 371.3L739.7 370.7L741.7 370.1L743.7 369.3L746.0 369.3L747.4 366.9L749.6 366.6L751.9 366.4L753.4 364.4L756.1 365.2L757.6 363.2L759.7 362.8L761.8 362.3L763.3 360.6L765.3 360.2L767.1 359.4L768.8 358.6L770.4 357.7L772.1 357.1L774.4 356.0L776.9 355.4L779.3 354.6L781.0 352.8L783.7 353.1L785.2 351.1L787.2 350.5L789.1 349.9L791.0 349.4L792.6 348.8L794.0 348.0L795.2 347.0L798.8 346.3L800.7 344.8L802.4 344.6L803.8 344.4L804.9 345.9L805.2 348.2L803.8 351.1L803.5 352.7L801.6 353.4L800.7 354.9L798.8 355.9L798.2 358.2L796.2 359.5L795.0 361.7L792.5 362.8L791.1 365.1L790.1 366.6L788.9 367.9L787.6 369.3L786.2 370.7L784.7 372.1L783.9 374.1L782.6 375.8L781.1 377.4L780.2 379.5L778.3 380.8L777.0 382.7L775.7 384.6L774.5 386.6L772.9 388.3L771.6 389.8L770.3 391.3L769.2 393.0L767.5 394.3L766.5 396.2L765.1 397.8L763.5 399.3L762.5 401.2L761.0 402.8L759.8 404.7L757.9 405.9L757.3 408.3L755.7 409.8L753.6 410.8L752.4 412.6L751.2 414.3L750.2 416.2L748.9 417.8L747.3 419.2L746.1 420.8L744.6 422.2L743.1 423.6L742.0 425.4L740.4 426.7L738.5 427.7L737.7 429.7L736.2 431.0L735.6 433.2L733.8 434.3L732.0 435.3L730.8 436.9L729.3 438.3L728.5 440.1L726.4 440.9L725.5 442.9L723.4 443.7L723.3 446.3L721.1 446.9L719.5 448.0L719.5 450.6L717.8 451.6L715.7 452.2L714.8 454.0L712.9 454.9L712.3 457.2L710.4 458.1L709.1 459.8L707.5 461.4L704.9 462.0L703.9 464.4L702.3 465.3L701.8 467.4L700.3 468.5L698.5 469.4L697.4 471.0L695.9 472.3L694.8 473.9L694.0 476.0L692.0 476.9L690.8 478.6L689.2 479.8L687.2 480.9L686.5 483.1L684.6 484.3L682.8 485.6L681.4 487.2L680.1 489.0L678.7 490.8L677.8 493.0L676.2 494.7L673.9 495.6L672.6 497.5L671.3 498.8L670.4 500.5L668.8 501.6L667.9 503.3L667.5 505.5L665.7 506.5L663.5 507.2L662.8 509.2L660.9 510.1L660.1 512.1L658.6 513.5L657.8 515.4L655.9 516.5L654.6 518.1L653.0 519.4L652.0 521.3L650.7 522.9L650.2 525.1L648.8 526.6L646.8 527.6L645.8 529.5L644.2 530.9L642.9 532.5L641.8 534.2L640.2 535.5L639.2 537.3L637.5 538.6L636.0 540.0L634.9 541.7L633.8 543.5L632.8 545.3L631.2 546.6L630.4 548.6L628.5 549.8L627.3 551.5L625.7 552.9L624.4 554.5L623.7 556.7L621.9 557.9L620.2 559.2L619.8 561.6L618.0 562.8L616.9 564.6L615.4 566.0L613.7 567.3L612.8 569.2L611.8 571.0L610.2 572.3L609.1 574.0L607.7 575.5L606.8 577.2L604.9 578.2L604.2 580.1L602.9 581.6L601.8 583.1L600.3 584.2L599.9 586.8L597.6 587.8L596.6 589.8L594.9 591.2L593.7 593.1L592.1 594.5L591.1 596.5L589.6 598.0L588.8 600.0L587.5 601.7L585.8 603.0L585.1 605.0L583.1 605.9L582.1 607.7L581.4 609.6L580.1 611.1L579.1 612.8L577.7 614.0L576.3 615.3L575.4 616.9L573.9 617.9L573.1 619.5L572.3 621.1L570.6 622.9L569.1 624.7L566.9 625.7L566.5 628.1L565.1 629.5L563.8 630.9L562.8 632.5L561.4 633.7L560.3 635.3L558.8 636.6L557.0 637.6L555.8 639.3L554.3 641.0L552.9 642.9L551.1 644.8L549.7 645.8L548.5 647.3L547.4 648.8L545.2 649.3L544.0 651.0L543.2 653.1L541.5 654.3L539.4 655.1L537.9 656.7L536.5 658.4L535.1 660.1L533.4 661.5L531.9 663.1L530.3 664.7L528.7 666.2L526.8 667.4L525.1 668.8L523.9 670.8L521.5 671.1L520.1 672.9L518.7 674.4L517.3 676.0L515.3 676.6L513.9 678.4L512.2 679.9L510.2 681.0L508.7 682.8L506.1 682.6L504.4 684.1L503.0 685.8L501.2 687.0L499.3 688.0L497.4 688.9L495.5 689.9L493.8 691.1L491.7 691.5L489.9 692.6L488.3 693.9L486.1 694.3L484.5 695.5L482.6 696.3L481.1 698.0L479.5 699.3L477.2 699.5L475.3 700.6L473.8 702.4L471.6 703.0L469.7 704.1L467.7 704.9L465.8 706.1L463.6 706.6L462.0 708.2L459.7 708.3L457.7 709.1L455.6 709.7L454.0 711.2L452.4 712.7L450.4 713.2L448.4 713.7L446.6 714.5L444.8 715.1L443.0 715.7L440.8 717.0L438.5 717.5L436.4 718.5L434.1 718.6L432.0 719.5L430.1 720.4L428.0 720.9L426.0 721.5L424.2 723.0L421.9 722.1L419.8 722.4L418.0 724.1L415.8 723.5L413.7 724.4L411.6 724.1L409.6 724.6L407.6 725.0L405.6 725.5L403.5 725.5L401.4 725.7L399.4 726.1L397.3 726.5L395.3 727.3L393.2 727.9L391.0 727.4L388.8 727.6L386.7 728.3L384.4 727.1L382.1 727.8L380.3 729.0L378.3 728.5L376.3 728.2L374.3 728.9L372.3 728.8L370.3 729.0L368.3 728.7L366.2 728.5L364.2 727.9L362.0 729.1L360.0 729.3L357.9 728.7L355.9 728.4L353.7 729.2L351.6 730.1L349.6 728.8L347.5 729.1L345.6 728.0L343.5 727.8L341.3 728.2L339.2 728.1L337.1 727.6L334.9 727.5L332.9 725.8L330.5 726.8L328.4 726.6L326.3 725.5L324.2 725.3L322.1 725.1L320.1 724.8L318.1 724.1L316.4 722.4L314.4 723.1L312.6 723.0L310.9 722.2L309.3 721.8L306.7 720.6L304.1 719.9L301.6 719.8L299.6 718.5L297.5 717.8L295.9 716.1L293.8 716.4L292.0 716.5L290.6 715.6L289.2 714.7L285.8 713.1L284.6 710.5L282.7 708.8" stroke="#b4bf1d" stroke-width="3.9"/>
<path d="M284.0 708.3L283.6 706.6L282.5 704.6L283.5 702.3L285.0 699.8L285.3 698.3L285.2 696.4L286.5 695.0L288.1 693.8L288.4 691.6L289.6 689.7L290.9 687.7L292.5 685.6L293.9 683.3L294.9 681.8L295.8 680.3L297.3 678.9L298.3 677.2L299.6 675.6L300.4 673.5L301.7 671.7L303.3 670.1L304.9 668.5L306.2 666.6L307.9 665.0L308.7 662.8L310.4 661.3L311.1 659.2L312.7 657.7L313.9 656.2L315.4 654.5L316.8 652.8L318.0 651.0L318.4 648.7L320.4 647.5L321.6 645.9L323.5 644.7L324.2 642.6L325.4 641.0L326.9 639.6L328.1 637.9L330.2 636.9L330.7 634.7L332.0 633.1L333.7 631.9L335.3 630.7L336.7 629.4L337.7 627.7L339.3 626.6L341.0 625.6L342.4 624.3L343.7 622.8L345.1 621.5L346.7 620.2L347.4 618.0L349.4 616.9L350.8 615.2L352.7 613.7L354.0 612.5L355.4 611.2L356.9 609.9L357.6 607.8L358.8 606.1L360.3 604.6L361.6 602.9L362.9 601.2L365.1 600.0L365.7 597.7L367.0 596.0L368.7 594.5L370.5 593.1L371.9 591.5L372.7 589.4L373.4 587.3L375.1 586.1L376.3 584.5L377.5 582.9L379.1 581.2L380.7 579.5L382.0 577.6L383.8 576.2L385.2 574.4L387.0 573.0L388.1 571.1L389.6 569.6L391.5 568.6L393.0 567.1L394.4 565.7L395.5 564.0L396.5 562.3L398.1 561.1L399.2 559.7L400.4 557.5L402.0 555.9L403.0 554.0L404.0 552.2L405.5 550.7L406.8 549.2L407.4 547.2L407.8 545.0L409.4 543.4L411.0 541.8L412.7 540.3L414.3 539.1L415.5 537.4L416.5 535.3L418.3 534.1L419.9 532.6L421.9 531.6L423.6 530.1L425.4 528.8L427.3 527.5L429.2 526.4L431.2 525.5L432.3 523.4L434.2 522.6L435.9 521.5L437.4 519.8L438.9 518.2L440.6 516.9L442.1 515.5L443.5 514.1L444.9 512.7L446.4 511.3L447.7 509.8L449.5 508.8L450.0 506.5L451.9 505.6L453.7 504.5L455.4 503.3L456.7 501.7L458.3 500.3L459.6 498.6L460.9 497.0L462.8 496.0L463.8 494.1L465.4 492.7L467.2 491.6L468.4 489.9L470.1 488.8L471.4 487.3L473.2 486.2L474.4 484.2L475.8 482.6L478.4 482.7L479.9 481.3L481.5 480.1L483.1 478.9L485.0 478.1L486.2 476.4L487.9 475.3L489.2 473.7L491.2 472.6L493.4 471.7L495.0 470.1L497.2 469.2L499.0 467.7L500.7 466.3L502.7 465.3L504.4 464.1L506.2 463.4L507.8 462.5L509.6 460.5L511.7 459.9L513.1 458.7L515.3 458.8L516.9 456.8L519.9 456.5L521.1 455.2L522.6 454.4L524.6 454.4L526.3 453.4L528.0 452.3L530.1 451.9L532.2 451.4L534.2 450.5L536.2 449.8L538.1 448.6L540.3 448.0L542.3 447.3L543.8 445.5L546.1 445.9L548.0 445.3L549.5 443.7L551.3 442.9L553.0 442.0L554.7 440.8L556.7 440.3L558.3 439.1L560.2 438.3L561.9 437.1L563.9 436.2L566.0 435.8L567.8 434.6L569.8 433.6L571.4 432.5L573.2 431.8L575.1 431.1L577.1 430.5L578.9 429.7L580.7 428.8L582.4 427.5L584.0 426.2L586.2 426.0L588.1 425.0L590.0 424.0L592.3 423.9L594.0 422.6L595.9 421.6L597.9 420.8L599.5 418.8L601.9 419.5L603.4 417.9L605.1 416.7L607.4 417.1L609.1 415.8L610.7 414.2L613.0 414.4L614.8 413.4L616.9 413.0L618.8 412.1L620.8 411.3L622.6 410.1L624.8 410.0L626.6 409.0L628.2 407.3L630.5 407.6L632.3 406.5L634.4 406.1L636.2 405.0L638.2 404.5L640.2 404.0L642.4 404.0L643.9 402.4L645.6 400.8L647.9 401.3L649.7 400.3L651.7 399.8L653.4 398.4L655.4 397.9L657.2 396.8L659.3 396.6L661.2 396.0L662.9 394.8L665.0 394.5L666.9 393.7L668.9 393.4L670.8 392.6L672.8 392.2L674.5 391.2L676.4 390.5L678.4 390.2L680.4 389.7L682.3 389.3L684.1 388.2L686.2 388.2L688.1 387.6L689.8 386.5L691.9 386.4L693.9 386.2L695.7 385.3L697.5 384.4L699.5 384.2L701.6 384.1L703.5 383.4L705.2 382.1L707.3 382.2L709.2 381.4L711.0 380.6L713.1 380.4L714.7 378.8L717.0 379.3L718.7 378.3L720.5 377.3L722.4 376.5L724.1 375.3L726.4 375.7L728.2 374.9L730.3 374.7L731.8 372.8L733.8 372.5L735.6 371.5L737.9 371.8L739.9 371.1L742.0 370.7L743.8 369.4L745.7 368.6L748.1 368.6L749.8 367.1L751.9 366.5L753.9 365.6L755.7 364.4L757.7 363.6L759.6 362.6L761.7 362.0L763.7 361.5L765.5 360.5L767.1 359.4L768.9 358.8L771.0 358.9L772.3 357.6L774.9 357.0L777.4 356.4L779.4 355.1L781.2 353.2L783.3 352.3L785.3 351.5L787.4 350.8L789.4 350.6L790.8 349.0L792.3 348.1L793.8 347.4L795.2 347.1L799.0 346.8L800.6 344.5L802.4 344.7L803.9 344.2L804.1 346.2L805.5 348.3L803.7 351.1L802.8 352.3L802.1 353.8L801.3 355.5L799.9 356.9L797.7 357.8L796.6 359.8L794.6 361.3L793.3 363.5L791.3 365.3L789.6 366.2L788.9 368.0L787.8 369.4L787.0 371.4L785.2 372.5L784.1 374.3L782.9 376.0L781.9 378.0L779.5 378.9L778.8 381.2L777.4 383.0L776.3 385.1L774.5 386.6L773.0 388.4L771.3 389.5L770.0 391.0L768.6 392.6L767.6 394.4L766.4 396.1L764.9 397.6L763.2 399.0L762.1 401.0L760.5 402.4L759.1 404.1L758.4 406.3L756.2 407.3L755.1 409.2L753.6 410.8L752.1 412.3L749.9 413.2L749.0 415.1L749.0 417.9L747.1 419.0L745.2 420.1L744.5 422.2L743.7 424.2L742.1 425.4L740.0 426.3L739.3 428.4L737.3 429.3L736.1 431.0L736.1 433.7L733.4 433.9L733.3 436.5L731.0 437.1L729.4 438.3L728.8 440.5L726.3 440.8L725.1 442.5L724.0 444.2L722.4 445.5L721.7 447.4L720.0 448.4L718.3 449.4L717.4 451.2L716.0 452.5L714.6 453.8L713.2 455.3L711.8 456.6L709.9 457.7L708.8 459.6L707.2 461.1L705.4 462.5L703.6 464.1L702.6 465.6L701.3 466.9L699.8 468.0L698.5 469.4L696.8 470.4L695.7 472.1L694.8 474.0L692.9 474.9L691.7 476.6L690.1 477.9L689.6 480.2L687.5 481.2L686.0 482.6L684.2 483.9L682.9 485.6L681.1 486.9L679.8 488.7L678.5 490.6L677.1 492.4L675.9 494.3L673.9 495.6L671.9 496.9L671.0 498.6L670.1 500.2L668.7 501.5L667.2 502.7L665.7 504.0L665.0 505.9L663.8 507.4L662.5 508.9L661.1 510.4L659.8 511.9L658.5 513.4L657.1 514.9L655.9 516.5L654.6 518.1L653.4 519.8L652.2 521.4L650.8 523.0L649.4 524.5L647.5 525.6L647.2 528.0L645.7 529.4L644.4 531.0L643.5 533.0L641.8 534.2L640.3 535.6L638.9 537.1L637.2 538.4L635.9 539.9L634.8 541.7L634.1 543.7L632.8 545.3L631.2 546.7L629.5 547.9L628.5 549.8L626.9 551.2L626.2 553.3L624.8 554.8L623.3 556.4L621.5 557.6L620.9 559.7L619.2 561.1L617.8 562.6L616.3 564.1L615.3 566.0L613.9 567.5L612.9 569.3L612.1 571.3L610.6 572.7L608.7 573.7L607.4 575.2L606.7 577.2L605.0 578.3L604.0 580.0L602.9 581.6L601.7 583.0L600.6 584.5L599.1 586.2L597.9 588.0L596.2 589.5L594.8 591.2L593.6 593.0L592.1 594.6L591.0 596.4L588.9 597.5L587.7 599.2L586.9 601.2L585.6 602.8L585.5 605.3L583.3 606.1L581.7 607.4L580.9 609.3L579.4 610.5L578.4 612.2L577.3 613.7L576.4 615.3L574.8 616.4L574.2 618.1L572.9 619.4L571.2 620.1L570.1 622.5L568.4 624.1L566.8 625.6L565.7 627.4L564.9 629.3L563.4 630.5L561.8 631.6L560.6 633.1L559.6 634.7L558.7 636.4L557.1 637.7L555.4 638.9L553.9 640.5L552.2 642.2L550.7 644.3L549.7 645.8L548.1 646.8L546.5 647.8L545.4 649.5L543.6 650.5L542.2 652.0L541.0 653.8L539.1 654.9L537.5 656.3L536.2 658.0L534.5 659.4L532.9 661.0L531.1 662.3L529.2 663.4L527.2 664.5L525.9 666.3L524.2 667.7L522.4 668.9L520.6 670.0L519.3 671.8L517.4 672.7L515.7 673.8L514.0 674.8L512.4 676.4L510.7 677.8L509.4 679.8L507.1 680.2L505.4 681.6L503.4 682.5L501.3 683.1L500.1 685.2L498.2 686.1L496.1 686.7L494.2 687.6L492.7 689.0L490.7 689.8L488.9 690.7L486.7 691.0L485.5 693.1L483.4 693.6L482.0 695.3L479.6 695.1L478.1 696.6L476.2 697.6L474.2 698.4L472.3 699.5L469.8 699.4L468.1 700.9L466.3 702.1L464.0 702.3L462.0 703.2L460.3 704.7L458.4 705.5L456.5 706.6L454.7 707.6L453.0 708.9L451.0 709.5L449.1 710.1L447.3 711.1L445.6 711.9L443.9 712.7L442.3 713.8L440.2 715.3L437.7 715.2L435.7 716.3L433.7 717.3L431.6 717.8L429.5 718.3L427.5 718.8L425.6 719.7L423.6 720.3L421.6 720.8L419.7 721.5L417.6 721.8L415.6 722.6L413.5 723.2L411.4 722.8L409.6 724.6L407.6 724.9L405.6 725.4L403.6 726.0L401.4 725.5L399.4 726.4L397.2 725.3L395.2 726.7L393.1 726.2L390.9 726.3L388.8 726.5L386.6 727.0L384.4 726.8L382.1 726.9L380.2 727.5L378.3 727.1L376.3 727.0L374.3 727.5L372.3 726.8L370.3 727.2L368.3 726.9L366.3 726.0L364.2 726.2L362.1 726.9L360.1 725.5L358.1 725.8L356.0 725.5L353.9 726.2L351.9 725.8L349.8 725.6L347.9 724.8L345.8 725.2L343.8 724.3L341.6 725.3L339.6 724.4L337.3 725.6L335.3 723.9L333.2 723.5L330.9 723.8L328.8 723.4L326.7 722.8L324.6 722.7L322.5 722.3L320.3 722.9L318.5 721.9L316.5 721.8L314.6 721.9L312.9 721.1L311.2 720.5L309.5 720.6L306.8 720.3L304.2 719.4L301.8 719.1L299.6 718.4L297.3 718.5L295.6 716.9L293.7 716.9L292.4 715.3L290.8 714.8L289.1 714.8L286.0 712.9L285.5 710.0L283.6 708.5" stroke="#b4bf1d" stroke-width="3.9"/>
<path d="M285.5 707.9L285.0 706.3L285.0 704.7L285.4 702.8L286.3 700.3L286.4 698.8L286.8 697.2L287.9 695.8L288.3 693.9L289.8 692.4L290.9 690.6L292.3 688.7L293.5 686.4L295.4 684.2L295.7 682.4L297.4 681.4L298.8 680.1L299.6 678.2L301.0 676.6L302.0 674.6L303.4 673.0L305.0 671.3L306.0 669.3L307.2 667.3L308.3 665.3L310.1 663.9L310.9 661.7L312.6 660.3L313.9 658.7L314.9 657.0L316.0 655.0L317.4 653.3L319.0 651.8L320.1 649.9L321.4 648.3L322.8 646.8L323.5 644.7L325.3 643.5L326.2 641.6L327.9 640.3L329.0 638.6L330.5 637.2L331.7 635.6L333.9 634.8L334.2 632.4L335.5 630.8L336.6 629.3L339.0 628.9L340.1 627.4L341.0 625.6L342.7 624.7L344.1 623.3L346.0 622.4L347.1 620.7L348.8 619.4L351.0 618.4L351.4 615.8L352.8 613.8L354.5 612.9L355.5 611.2L356.5 609.5L358.5 608.5L359.7 606.8L360.8 605.0L362.0 603.2L364.0 602.0L364.3 599.4L366.4 598.3L367.9 596.6L369.1 594.8L370.2 592.9L371.4 591.1L373.3 589.9L374.3 588.1L375.5 586.4L377.2 585.2L378.0 583.4L379.4 581.5L381.7 580.4L382.6 578.2L384.1 576.4L385.6 574.8L387.5 573.6L388.9 571.9L390.0 570.0L391.9 568.9L393.5 567.6L394.8 566.0L396.1 564.6L397.2 562.9L398.5 561.5L399.9 560.3L401.4 558.3L402.0 556.0L403.7 554.5L404.6 552.6L405.6 550.8L406.8 549.1L407.6 547.3L409.0 545.7L410.1 544.0L411.5 542.2L413.2 540.6L414.2 539.0L415.6 537.5L417.2 536.1L418.4 534.3L420.9 533.8L421.9 531.5L424.4 531.1L425.9 529.4L427.8 528.3L429.4 526.6L430.9 525.0L433.3 524.7L434.3 522.7L435.8 521.4L437.4 519.9L438.8 518.1L440.6 516.9L442.1 515.6L443.6 514.2L445.3 513.0L446.4 511.3L447.8 509.9L449.4 508.7L450.7 507.2L452.5 506.2L453.4 504.1L455.6 503.5L456.5 501.5L458.1 500.1L459.7 498.8L462.0 498.1L463.2 496.4L464.3 494.5L465.8 493.1L467.6 492.1L468.9 490.5L470.5 489.3L472.0 488.0L473.4 486.3L475.3 485.4L477.1 484.4L478.7 483.1L480.4 482.0L481.7 480.3L483.8 479.8L484.9 477.9L486.8 477.2L488.3 475.9L490.0 474.8L491.7 473.4L493.5 472.0L495.5 470.8L497.3 469.4L499.4 468.4L501.1 467.0L503.2 466.1L504.6 464.4L506.5 463.9L507.9 462.6L510.4 461.8L511.8 460.1L513.6 459.8L515.3 458.9L517.4 458.0L520.1 457.1L521.5 456.4L522.8 455.0L525.0 455.5L526.7 454.3L528.2 452.8L530.4 452.6L532.4 452.0L534.6 451.6L536.4 450.1L538.6 449.9L540.4 448.3L542.3 447.4L544.6 447.1L546.1 445.8L548.1 445.4L549.7 444.3L551.7 443.8L553.1 442.1L555.3 442.1L556.9 440.7L558.5 439.4L561.0 439.8L562.0 437.3L564.5 437.4L566.1 435.9L568.4 435.8L570.0 434.0L571.9 433.5L573.5 432.3L575.6 432.1L577.2 430.9L578.9 429.8L580.6 428.6L582.5 427.7L584.5 427.2L586.3 426.2L588.2 425.2L590.3 424.8L591.9 423.2L594.3 423.1L596.0 421.7L598.2 421.4L599.9 419.9L602.0 419.6L604.1 419.5L605.6 418.0L607.5 417.2L609.6 417.0L611.2 415.6L613.0 414.5L615.1 414.0L616.9 413.0L619.0 412.7L620.8 411.4L622.8 410.8L624.8 410.0L626.8 409.4L628.8 409.0L630.5 407.6L632.6 407.1L634.3 405.9L636.4 405.7L638.5 405.4L640.1 403.9L642.0 403.1L643.6 401.6L646.0 402.1L648.0 401.5L649.9 400.8L651.8 400.1L653.5 398.6L655.6 398.6L657.6 397.9L659.3 396.8L661.2 396.0L663.0 395.1L665.2 395.1L667.0 394.0L669.0 393.8L671.0 393.4L672.9 392.7L674.8 392.2L676.7 391.2L678.5 390.5L680.6 390.5L682.6 390.1L684.3 388.7L686.2 388.1L688.0 387.5L690.1 387.6L692.0 386.9L693.9 386.3L695.9 386.1L697.7 385.0L699.5 384.0L701.7 384.3L703.5 383.4L705.2 382.2L707.2 381.7L709.2 381.4L711.1 380.9L713.0 380.2L715.3 380.6L716.8 378.8L718.8 378.5L720.8 378.1L722.7 377.5L724.6 376.7L726.6 376.5L728.5 375.7L730.3 374.5L732.0 373.3L734.4 373.9L736.2 373.0L737.8 371.3L739.8 370.9L741.8 370.4L743.7 369.4L746.2 369.7L748.1 368.6L749.8 367.1L752.0 366.6L754.0 365.8L755.9 364.9L757.9 364.0L760.0 363.4L761.5 361.6L763.6 361.4L765.4 360.5L767.4 360.1L769.1 359.2L770.7 358.4L772.3 357.6L775.1 357.4L777.3 356.4L779.3 354.8L781.6 354.1L783.6 353.0L785.8 352.5L787.5 351.0L789.4 350.4L791.2 350.0L792.9 349.5L794.1 348.3L795.5 347.7L798.7 346.3L800.8 345.1L802.4 344.8L803.6 344.9L804.2 346.2L804.7 348.1L803.2 350.9L802.4 351.9L801.8 353.5L799.9 354.2L799.1 356.1L797.4 357.4L795.9 359.2L794.2 360.9L792.8 363.1L790.6 364.7L789.9 366.3L789.0 368.0L787.4 369.2L786.4 370.9L785.3 372.5L784.1 374.3L782.4 375.6L780.9 377.2L779.2 378.7L778.7 381.1L776.7 382.4L775.4 384.4L774.6 386.7L772.4 387.9L770.7 389.1L769.9 391.0L768.8 392.7L767.2 394.1L765.2 395.1L765.1 397.8L762.9 398.8L762.3 401.1L760.5 402.4L759.0 404.0L758.3 406.3L756.6 407.7L754.2 408.5L753.4 410.7L751.7 412.0L750.5 413.7L750.0 416.1L748.6 417.6L746.6 418.6L745.5 420.3L744.0 421.7L742.5 423.1L741.6 425.0L740.4 426.7L739.1 428.2L737.5 429.5L736.5 431.3L734.6 432.3L733.3 433.8L731.9 435.2L730.5 436.7L729.3 438.2L728.0 439.7L726.5 441.0L724.8 442.2L723.4 443.6L722.2 445.2L721.2 446.9L719.0 447.5L718.2 449.3L717.2 451.0L715.5 451.9L714.1 453.3L712.6 454.6L711.2 456.1L709.8 457.5L708.0 458.8L706.5 460.4L704.8 461.9L703.6 464.1L702.7 465.7L700.7 466.3L699.6 467.8L697.9 468.8L697.0 470.6L695.1 471.5L694.5 473.6L693.0 475.0L691.2 476.1L689.7 477.5L688.5 479.2L687.2 480.8L685.6 482.2L684.1 483.8L682.6 485.4L681.5 487.3L679.9 488.9L678.1 490.3L676.8 492.1L675.1 493.6L673.4 495.2L672.6 497.5L670.9 498.5L670.1 500.2L668.2 501.0L667.1 502.6L666.2 504.4L664.9 505.8L663.3 507.0L661.8 508.4L660.9 510.1L659.1 511.3L658.2 513.1L657.1 514.9L656.0 516.6L654.4 518.0L653.2 519.6L651.0 520.4L650.4 522.6L648.9 524.1L647.5 525.5L646.4 527.3L644.7 528.6L643.2 530.1L642.8 532.4L641.6 534.1L639.4 534.9L638.0 536.4L636.9 538.1L636.4 540.3L634.6 541.4L633.1 542.9L632.0 544.6L630.6 546.1L629.2 547.7L628.3 549.6L627.1 551.3L626.0 553.1L623.9 554.1L622.9 556.0L621.3 557.4L620.1 559.1L618.8 560.7L616.8 561.8L616.5 564.2L614.7 565.5L614.4 567.9L613.0 569.3L610.9 570.3L609.2 571.5L609.0 573.9L607.0 574.9L605.6 576.3L605.4 578.6L602.9 579.1L602.2 580.9L600.7 582.2L599.8 583.8L598.9 586.0L597.4 587.7L596.2 589.5L594.7 591.1L592.3 591.9L591.2 593.8L590.5 596.0L589.0 597.6L587.6 599.1L586.9 601.2L585.2 602.5L584.4 604.4L583.1 606.0L581.9 607.6L580.1 608.6L580.0 611.0L577.8 611.7L576.2 612.8L575.4 614.5L574.4 616.0L573.1 617.2L571.9 618.6L571.1 620.1L570.0 622.4L568.1 623.9L566.5 625.4L565.1 626.9L564.0 628.6L562.7 629.9L561.4 631.2L560.5 633.0L559.4 634.5L557.9 635.7L556.4 637.0L555.5 639.0L552.8 639.5L552.7 642.7L550.7 644.4L548.9 645.0L547.2 645.8L546.5 647.8L545.1 649.2L543.6 650.5L541.7 651.5L540.4 653.1L538.7 654.4L537.4 656.1L535.4 657.2L534.2 659.1L532.5 660.5L531.2 662.4L528.9 663.0L528.0 665.4L525.8 666.2L524.0 667.5L522.3 668.8L520.8 670.3L519.5 672.1L517.3 672.6L516.5 674.8L514.8 675.9L512.6 676.7L511.1 678.3L509.2 679.5L507.5 680.9L505.7 682.1L503.8 683.1L502.3 684.8L500.4 685.6L498.5 686.6L496.6 687.6L494.8 688.6L492.9 689.5L491.5 691.2L489.6 692.1L487.5 692.6L486.1 694.2L484.1 694.8L482.4 695.9L480.5 696.7L478.9 698.1L476.9 699.0L475.0 699.9L473.2 701.3L471.1 702.0L469.1 702.9L467.7 705.1L465.5 705.4L463.4 706.2L461.5 707.2L459.4 707.7L457.3 708.3L455.5 709.5L453.5 710.1L451.8 711.3L449.8 711.8L447.8 712.1L446.0 713.0L444.4 714.0L442.3 713.8L439.8 714.2L437.6 714.8L435.5 715.8L433.3 715.9L431.5 717.5L429.3 717.6L427.3 718.0L425.2 718.1L423.4 719.4L421.3 719.2L419.2 719.2L417.2 719.7L415.0 719.5L412.8 719.5L410.9 720.4L408.8 719.9L406.9 720.6L404.9 720.8L402.8 720.8L400.7 720.3L398.8 721.4L396.8 721.4L394.7 722.0L392.7 722.5L390.6 722.6L388.5 722.5L386.4 723.0L384.2 723.8L382.0 723.2L380.1 723.5L378.2 723.0L376.3 723.3L374.3 723.7L372.4 722.9L370.4 723.7L368.4 724.0L366.4 723.6L364.3 723.4L362.3 723.5L360.3 723.1L358.2 723.1L356.2 723.3L354.1 723.1L352.1 723.3L350.1 722.0L348.0 723.5L346.0 722.7L344.0 722.4L342.0 721.7L339.8 722.0L337.7 722.2L335.6 721.3L333.4 721.2L331.3 721.3L329.2 720.7L327.1 720.3L324.9 720.1L322.8 720.2L320.9 719.2L318.8 719.6L316.9 719.2L315.0 719.0L313.3 718.7L311.7 717.7L310.1 717.3L307.3 717.3L304.8 716.9L302.4 716.2L300.1 716.1L298.3 714.7L296.3 714.6L294.5 714.2L292.8 714.0L291.4 713.2L290.2 712.6L286.9 711.5L285.9 709.8L284.9 708.1" stroke="#b4bf1d" stroke-width="3.9"/>
<path d="M285.8 707.7L286.0 706.1L285.8 704.7L286.2 703.0L286.7 700.4L287.6 699.3L288.4 698.0L288.8 696.3L290.0 694.9L290.4 692.8L292.3 691.4L293.3 689.3L294.3 686.9L296.0 684.7L297.2 683.5L298.2 681.9L300.1 681.0L300.2 678.6L301.8 677.2L302.7 675.2L304.8 674.0L306.2 672.2L306.8 669.9L308.8 668.5L309.7 666.4L311.4 664.9L312.8 663.2L313.6 661.1L314.9 659.5L316.5 658.1L317.6 656.1L318.7 654.3L320.5 652.9L321.6 651.1L322.8 649.4L324.3 647.9L325.3 646.1L326.5 644.4L327.9 642.9L328.6 640.9L330.3 639.7L331.3 637.9L333.5 637.1L334.3 635.1L335.5 633.5L336.7 632.0L338.0 630.7L339.5 629.5L340.6 627.9L342.2 626.8L343.6 625.6L345.1 624.3L346.1 622.5L347.8 621.3L349.1 619.7L350.3 617.8L351.6 616.0L353.3 614.3L354.8 613.2L355.7 611.4L357.1 610.0L358.8 608.8L359.9 607.0L360.5 604.7L363.1 604.1L364.1 602.1L364.8 599.9L366.8 598.6L368.0 596.7L369.6 595.2L371.2 593.7L372.5 592.0L373.5 590.0L374.5 588.2L376.0 586.8L377.1 585.1L378.1 583.5L379.7 581.7L381.2 579.9L382.9 578.4L384.3 576.6L386.1 575.3L388.3 574.3L389.7 572.7L391.2 571.1L392.3 569.3L393.5 567.6L395.3 566.5L396.2 564.7L398.0 563.7L399.1 562.0L400.8 560.9L401.9 558.7L402.6 556.4L404.0 554.6L405.8 553.3L406.4 551.2L406.8 549.2L408.2 547.7L410.4 546.7L410.6 544.4L412.0 542.7L413.2 540.7L415.1 539.9L416.3 538.3L418.1 537.2L419.3 535.4L421.1 534.1L422.7 532.6L424.3 530.9L426.6 530.3L427.9 528.4L429.8 527.2L431.4 525.7L433.1 524.5L434.8 523.2L436.5 522.2L437.8 520.3L439.8 519.2L441.1 517.5L442.7 516.2L444.2 514.8L445.2 513.0L446.9 511.8L448.6 510.8L450.1 509.5L451.4 508.0L453.1 506.8L454.5 505.3L455.7 503.6L457.4 502.4L458.8 500.8L460.0 499.1L462.4 498.5L463.1 496.2L464.3 494.5L466.3 493.6L467.5 492.0L468.9 490.5L471.1 490.0L472.5 488.7L473.9 487.0L475.2 485.2L477.8 485.2L478.6 483.0L480.6 482.2L482.0 480.8L484.1 480.3L485.7 479.1L487.0 477.5L488.8 476.6L490.8 475.9L492.6 474.6L494.3 473.1L495.8 471.2L497.9 470.2L499.8 468.9L501.5 467.4L503.1 466.0L505.0 465.2L506.9 464.5L508.5 463.7L510.7 462.3L512.4 461.3L514.3 461.2L515.4 459.1L517.6 458.6L520.1 457.0L521.9 457.3L523.3 456.2L524.9 455.1L526.8 454.8L528.7 454.1L530.8 453.8L532.7 452.8L534.6 451.5L536.8 451.2L538.8 450.2L540.7 449.0L543.0 448.9L545.0 448.0L546.6 446.9L548.4 446.1L550.0 444.9L551.8 444.0L553.6 443.2L555.6 442.6L557.3 441.5L558.8 440.0L561.0 439.8L562.6 438.4L564.6 437.6L566.5 436.7L568.3 435.6L570.2 434.4L572.1 433.9L573.8 432.9L575.3 431.5L577.7 431.9L579.1 430.1L580.8 428.9L582.6 427.9L584.6 427.3L586.6 426.6L588.3 425.4L590.3 424.8L592.2 423.7L594.2 423.0L596.0 421.7L598.1 421.0L600.1 420.3L602.0 419.8L603.7 418.7L605.5 417.7L607.7 417.8L609.4 416.5L611.1 415.2L613.4 415.5L615.3 414.6L617.0 413.1L619.0 412.7L620.9 411.7L623.0 411.3L624.9 410.5L627.1 410.3L628.8 408.9L630.5 407.6L632.7 407.4L634.6 406.7L636.4 405.7L638.6 405.6L640.7 405.3L642.2 403.5L644.1 402.7L646.0 402.1L647.9 401.3L650.1 401.1L651.6 399.4L653.7 399.1L655.7 398.8L657.6 398.0L659.6 397.4L661.5 396.9L663.4 396.0L665.2 395.1L667.0 394.2L669.3 394.5L670.8 392.7L672.8 392.2L674.7 391.8L676.6 391.0L678.5 390.6L680.6 390.6L682.7 390.4L684.4 389.2L686.3 388.7L688.2 387.9L690.1 387.6L692.0 386.9L694.0 386.4L695.8 385.7L697.9 385.5L699.7 384.8L701.7 384.5L703.7 384.1L705.6 383.3L707.5 382.8L709.3 381.8L711.1 380.8L712.9 380.0L715.1 380.2L716.9 379.3L719.0 379.0L721.0 378.7L722.8 377.6L724.6 376.6L726.5 376.1L728.5 375.6L730.3 374.7L732.1 373.6L734.2 373.6L736.4 373.5L738.0 372.0L739.9 371.3L741.7 370.0L743.9 369.9L746.0 369.4L748.1 368.7L749.9 367.2L752.1 367.0L753.9 365.7L756.0 365.0L757.8 363.6L760.1 363.6L762.0 362.8L763.9 362.2L765.7 361.2L767.4 360.1L769.5 360.1L770.9 358.7L772.6 358.2L775.1 357.6L777.2 356.1L779.6 355.4L781.4 353.6L783.7 353.1L785.7 352.2L787.8 351.8L789.7 351.1L790.7 348.8L792.7 349.0L794.4 348.8L795.7 348.1L798.9 346.6L800.9 345.2L802.5 345.2L803.8 344.4L803.8 346.3L804.7 348.1L803.1 350.8L802.3 351.8L801.0 352.9L800.2 354.5L798.8 355.9L797.3 357.4L796.3 359.6L794.1 360.8L792.4 362.7L790.8 364.8L789.6 366.1L789.0 368.0L787.5 369.3L786.5 371.0L784.2 371.7L783.2 373.6L782.1 375.4L781.0 377.3L779.6 379.0L778.4 380.9L776.4 382.2L775.6 384.5L773.5 385.8L772.7 388.1L770.9 389.2L769.5 390.7L767.9 392.0L767.4 394.2L765.9 395.7L764.4 397.2L763.0 398.9L762.0 400.8L760.4 402.3L759.2 404.1L757.6 405.7L756.0 407.1L755.1 409.2L753.4 410.6L751.6 411.9L750.6 413.8L749.0 415.2L748.2 417.2L746.5 418.4L745.4 420.2L743.4 421.1L742.7 423.3L741.1 424.5L739.8 426.2L738.5 427.7L737.0 429.1L736.0 430.9L734.5 432.2L732.7 433.2L731.3 434.7L730.6 436.7L729.1 438.1L727.7 439.4L726.3 440.8L724.6 442.0L723.4 443.6L722.2 445.3L720.7 446.4L719.4 447.9L717.8 448.9L716.8 450.6L715.3 451.8L713.9 453.1L712.5 454.5L710.9 455.8L710.0 457.7L708.3 459.1L706.5 460.3L704.2 461.4L703.4 463.9L701.9 465.0L700.8 466.4L699.1 467.3L698.2 469.1L697.2 470.8L695.3 471.6L693.7 472.9L692.7 474.7L690.6 475.4L689.6 477.4L688.7 479.4L686.8 480.4L685.6 482.3L684.0 483.7L682.6 485.3L681.3 487.1L679.8 488.8L678.0 490.2L676.2 491.5L674.8 493.3L673.6 495.3L671.8 496.9L670.1 497.7L669.2 499.5L668.3 501.1L667.3 502.8L665.6 503.9L664.5 505.5L662.8 506.6L661.9 508.4L660.5 509.9L659.2 511.3L658.0 513.0L656.4 514.3L655.7 516.3L654.4 517.9L652.5 519.0L651.6 520.9L650.5 522.7L648.9 524.1L647.6 525.6L646.0 527.0L644.8 528.7L643.7 530.5L642.3 531.9L641.1 533.6L639.3 534.8L638.0 536.4L637.4 538.5L635.8 539.8L634.7 541.5L633.5 543.2L632.0 544.6L630.8 546.3L629.3 547.7L628.2 549.5L626.5 550.9L625.1 552.4L623.5 553.8L623.0 556.1L621.5 557.6L619.8 558.9L618.4 560.4L617.5 562.4L615.8 563.7L615.0 565.7L613.5 567.1L611.9 568.4L611.0 570.4L609.3 571.6L608.0 573.1L606.9 574.8L606.0 576.6L604.9 578.2L603.2 579.4L602.2 581.0L601.4 582.8L599.8 583.8L597.8 585.1L596.5 586.9L595.3 588.8L594.0 590.5L592.6 592.2L590.8 593.5L590.0 595.6L588.6 597.2L587.7 599.2L585.7 600.2L584.8 602.2L583.4 603.6L582.0 605.1L580.7 606.6L578.7 607.5L578.2 609.6L576.8 610.8L576.4 612.9L575.0 614.2L574.2 615.9L572.8 617.0L571.6 618.2L570.6 619.7L568.4 621.1L567.3 623.2L566.2 625.1L564.4 626.3L563.3 628.0L562.4 629.7L559.9 630.0L559.6 632.2L557.9 633.1L557.1 635.0L555.8 636.5L554.2 637.8L553.1 639.8L551.1 641.1L549.6 643.2L547.9 644.0L546.8 645.4L545.5 646.8L544.0 648.1L542.1 648.9L541.3 651.0L539.2 651.8L538.3 653.9L536.4 655.1L535.2 656.9L532.9 657.6L531.3 659.1L530.1 661.0L528.4 662.5L526.5 663.7L524.7 664.9L523.0 666.2L521.5 667.8L519.9 669.1L517.9 670.0L516.4 671.4L515.3 673.2L513.8 674.6L511.6 675.2L509.9 676.7L508.2 678.0L506.5 679.4L504.7 680.5L502.7 681.4L501.0 682.6L498.7 682.9L497.3 684.5L495.4 685.6L493.6 686.6L492.1 688.1L489.8 688.1L488.3 689.6L486.4 690.6L484.8 691.8L482.9 692.6L480.8 693.1L479.4 694.7L477.6 695.7L475.5 696.2L473.9 697.9L471.7 698.3L469.8 699.4L467.9 700.4L466.1 701.8L463.9 702.2L462.1 703.4L460.1 704.2L458.3 705.5L456.2 706.0L454.4 707.0L452.6 708.0L450.7 708.7L448.7 709.1L446.7 709.4L445.1 710.6L443.5 711.6L441.5 711.7L439.2 712.3L437.1 713.3L435.0 714.0L432.8 714.4L431.0 715.7L428.9 715.9L426.9 716.3L425.0 717.3L422.9 716.8L421.0 717.5L418.9 717.7L416.9 718.2L414.9 719.0L412.6 718.4L410.6 718.7L408.7 719.3L406.7 719.5L404.9 721.2L402.7 720.1L400.8 721.3L398.7 720.8L396.6 720.2L394.7 721.4L392.6 721.5L390.6 722.8L388.4 721.8L386.3 721.8L384.1 722.1L381.9 721.7L380.1 722.7L378.2 722.1L376.3 722.1L374.3 722.3L372.4 722.2L370.4 721.4L368.4 722.5L366.4 721.6L364.4 721.0L362.4 721.5L360.3 722.5L358.3 721.6L356.3 720.9L354.2 721.3L352.2 721.0L350.2 721.1L348.2 720.7L346.2 720.1L344.2 720.2L342.2 720.0L340.0 720.0L338.0 719.4L335.8 719.3L333.6 719.6L331.5 719.1L329.4 718.8L327.2 719.1L325.3 717.4L323.1 718.0L321.1 718.1L319.2 717.0L317.2 717.2L315.4 716.9L313.7 716.4L311.9 716.7L310.3 716.4L307.6 715.7L305.0 715.5L302.6 715.3L300.3 715.2L298.6 713.3L296.6 713.2L294.7 713.5L293.2 712.7L291.6 712.7L290.4 712.2L287.8 710.3L286.6 709.3L285.4 707.9" stroke="#b4bf1d" stroke-width="3.9"/>
<path d="M285.7 707.8L285.4 706.2L285.9 704.7L285.5 702.8L286.7 700.5L286.8 699.0L287.6 697.6L288.6 696.2L289.9 694.8L290.3 692.8L291.9 691.2L292.9 689.0L294.8 687.2L296.6 685.1L296.9 683.3L298.5 682.2L299.8 680.7L300.1 678.5L302.6 677.7L303.1 675.4L304.3 673.6L305.1 671.4L307.2 670.2L308.9 668.6L309.5 666.2L311.4 664.9L312.9 663.2L313.2 660.8L315.0 659.5L317.2 658.6L318.0 656.5L319.2 654.7L320.4 652.8L321.8 651.2L322.5 649.1L324.2 647.8L325.6 646.3L325.9 644.0L328.1 643.1L329.3 641.4L330.4 639.8L331.0 637.7L333.1 636.8L333.8 634.7L336.0 634.0L337.3 632.6L338.3 631.0L339.8 629.8L340.6 627.9L342.7 627.4L343.6 625.6L345.2 624.5L346.7 623.1L348.0 621.5L349.9 620.5L351.6 619.1L352.6 616.8L354.9 615.7L356.1 614.2L356.6 612.1L358.1 610.8L359.1 609.0L360.8 607.8L362.1 606.1L363.7 604.6L364.5 602.4L365.7 600.6L367.5 599.2L368.8 597.4L370.0 595.5L371.3 593.7L373.1 592.5L374.3 590.7L375.5 589.0L376.0 586.8L377.5 585.5L379.0 584.2L381.2 583.1L381.7 580.4L383.8 579.2L384.9 577.2L387.1 576.2L388.2 574.2L390.2 573.2L391.4 571.3L392.8 569.8L394.0 568.0L395.2 566.4L396.7 565.1L397.8 563.4L399.2 562.1L400.6 560.8L401.8 558.6L403.5 557.0L404.2 554.8L406.2 553.5L406.8 551.5L407.9 549.8L408.7 548.0L409.8 546.3L411.2 544.8L413.2 543.7L414.3 541.8L415.2 539.9L416.9 539.0L418.4 537.6L420.2 536.4L421.8 535.0L423.6 533.7L425.2 532.1L426.8 530.6L428.6 529.2L430.4 527.9L432.0 526.5L433.7 525.2L435.9 524.6L436.8 522.5L438.8 521.4L440.3 519.8L442.0 518.5L443.4 517.0L445.1 515.8L446.4 514.2L447.8 512.8L449.3 511.5L450.8 510.2L451.5 508.1L453.1 506.8L454.5 505.3L456.3 504.3L457.5 502.5L459.1 501.2L461.0 500.1L462.2 498.3L463.5 496.7L465.5 495.8L467.1 494.5L468.4 492.9L469.8 491.5L471.3 490.2L472.8 489.0L474.1 487.2L476.0 486.3L477.3 484.6L479.2 483.8L481.0 482.8L481.9 480.7L483.9 480.0L485.5 478.8L487.2 477.8L489.2 477.1L490.3 475.3L492.1 474.0L494.0 472.7L496.1 471.6L498.2 470.7L500.2 469.6L501.9 468.1L503.7 467.0L505.4 465.7L507.0 464.6L508.3 463.3L510.7 462.4L512.5 461.4L513.9 460.4L515.7 459.7L517.6 458.6L520.5 457.9L521.8 457.0L523.3 456.1L525.2 455.9L526.9 455.1L528.7 454.0L530.7 453.6L532.8 453.0L534.8 452.2L536.6 450.6L538.8 450.3L540.8 449.3L542.4 447.6L545.1 448.4L546.9 447.5L548.5 446.2L550.4 445.6L551.8 444.1L553.7 443.4L555.4 442.1L557.6 442.1L559.1 440.6L560.7 439.2L562.9 438.9L564.5 437.5L566.5 436.7L568.5 436.0L570.3 434.6L572.1 433.9L573.6 432.6L575.9 432.7L577.4 431.2L579.2 430.3L580.8 429.0L582.7 428.2L584.5 427.2L586.8 427.1L588.5 425.9L590.4 425.0L592.5 424.4L594.2 422.9L596.3 422.4L598.3 421.7L600.2 420.4L602.1 419.8L604.0 419.5L605.7 418.3L607.7 417.8L609.6 417.1L611.4 416.0L613.0 414.5L615.2 414.3L617.2 413.7L619.0 412.5L621.5 413.2L623.1 411.5L624.9 410.5L627.0 410.1L629.0 409.3L631.0 408.7L633.0 408.2L634.8 407.1L636.7 406.4L638.5 405.4L640.5 404.8L642.5 404.2L644.5 403.8L646.3 402.8L648.3 402.4L650.1 401.3L652.0 400.6L654.0 400.1L655.8 398.9L658.1 399.4L659.7 397.8L661.8 397.6L663.6 396.7L665.5 395.8L667.2 394.8L669.2 394.4L671.1 393.6L673.3 393.8L675.1 392.9L676.9 391.9L678.8 391.5L680.6 390.4L682.6 390.3L684.6 389.8L686.4 389.0L688.4 388.6L690.1 387.5L692.2 387.4L694.1 387.0L696.3 387.1L698.0 386.1L699.8 385.2L701.7 384.5L703.8 384.2L705.4 382.9L707.5 382.7L709.6 382.6L711.1 380.8L713.2 380.8L715.2 380.3L717.1 379.6L719.1 379.3L720.9 378.3L722.8 377.8L724.7 377.1L726.7 376.7L728.6 376.0L730.6 375.4L732.5 374.9L734.4 374.1L736.3 373.4L738.1 372.3L740.0 371.5L742.0 370.7L744.0 370.1L746.4 370.2L748.3 369.1L749.9 367.4L752.2 367.2L754.3 366.5L755.9 364.9L758.3 364.8L759.9 363.3L762.0 362.8L764.0 362.3L765.8 361.5L767.7 360.8L769.5 360.1L771.3 359.6L772.8 358.8L775.4 358.3L777.3 356.4L779.7 355.6L781.7 354.2L783.7 353.2L785.9 352.7L787.9 352.0L789.5 350.8L791.3 350.2L793.0 349.7L794.5 349.1L795.6 347.9L799.1 347.2L801.0 345.4L802.6 346.0L803.2 345.5L803.9 346.3L803.8 347.9L803.0 350.7L802.3 351.9L801.2 353.0L800.0 354.3L798.7 355.8L797.2 357.3L795.9 359.2L794.5 361.2L792.9 363.2L791.1 365.1L790.3 366.7L788.6 367.7L787.2 369.0L785.3 370.0L784.7 372.1L783.8 374.1L781.8 375.2L780.9 377.2L779.0 378.6L777.8 380.4L776.5 382.3L774.7 383.8L773.8 386.0L772.4 387.9L770.5 388.8L769.2 390.4L768.0 392.0L766.1 393.1L765.3 395.2L763.7 396.7L762.2 398.2L761.5 400.4L760.1 402.1L759.3 404.2L756.8 405.0L755.9 407.1L754.2 408.5L753.3 410.6L751.7 412.0L749.7 413.0L748.9 415.1L747.7 416.8L745.9 418.0L745.0 419.8L744.0 421.7L742.4 423.0L741.0 424.5L740.0 426.3L738.0 427.2L736.4 428.5L735.3 430.2L734.2 431.9L732.7 433.2L731.1 434.5L730.0 436.1L729.2 438.1L727.4 439.2L725.9 440.5L724.3 441.7L723.5 443.8L721.8 444.8L720.7 446.4L718.7 447.1L718.0 449.1L716.2 449.9L715.2 451.7L713.4 452.6L712.2 454.2L711.0 455.9L709.6 457.3L707.8 458.5L706.5 460.4L704.8 462.0L703.2 463.7L702.0 465.0L700.9 466.5L698.8 467.1L698.1 469.0L696.2 469.9L694.9 471.3L694.4 473.6L692.0 474.0L690.8 475.6L689.2 476.9L688.3 479.0L686.9 480.6L685.2 481.9L684.1 483.8L682.2 485.0L680.8 486.6L678.8 487.9L677.2 489.4L675.8 491.1L674.2 492.8L673.1 494.9L671.5 496.6L670.8 498.4L669.5 499.7L667.4 500.4L666.9 502.4L665.4 503.7L664.6 505.5L662.9 506.7L661.2 507.8L660.5 509.8L659.4 511.5L657.4 512.5L656.9 514.7L655.2 515.9L653.8 517.4L653.0 519.4L651.7 521.0L649.7 522.0L648.4 523.6L647.2 525.3L646.3 527.3L644.4 528.4L643.4 530.2L641.7 531.4L640.1 532.9L639.4 534.9L638.2 536.5L637.2 538.4L635.8 539.8L633.7 540.7L633.8 543.5L631.8 544.5L630.6 546.1L629.5 547.9L627.9 549.3L626.2 550.6L625.1 552.4L624.1 554.3L622.6 555.8L620.7 556.9L619.6 558.7L618.1 560.2L617.5 562.4L615.5 563.5L614.7 565.4L613.2 566.9L611.8 568.4L610.4 569.9L609.0 571.4L607.6 572.8L606.7 574.7L605.4 576.1L604.0 577.5L603.1 579.2L601.9 580.8L600.7 582.2L600.0 584.0L598.0 585.2L596.4 586.8L595.7 589.1L593.8 590.4L592.6 592.2L590.8 593.5L589.9 595.5L587.6 596.5L586.4 598.2L585.4 600.0L584.1 601.6L582.4 602.8L581.9 605.0L580.1 606.1L579.2 607.9L577.8 609.2L576.5 610.6L575.2 612.0L573.7 613.2L573.0 614.9L571.6 616.0L570.8 617.6L569.3 618.6L568.9 621.5L567.2 623.1L564.8 624.0L563.6 625.6L562.6 627.3L561.5 628.9L559.6 629.7L558.8 631.5L557.6 632.9L556.7 634.7L555.1 635.8L554.0 637.5L552.3 639.0L550.5 640.5L548.2 641.8L547.6 643.7L546.1 644.7L544.7 645.9L543.3 647.3L541.5 648.2L540.3 649.9L538.6 651.2L536.8 652.3L535.7 654.2L533.9 655.5L532.6 657.3L530.4 658.1L529.3 660.1L527.7 661.6L525.9 662.9L524.4 664.5L521.5 664.4L520.8 666.9L518.8 667.8L517.5 669.5L515.8 670.6L514.5 672.1L512.3 672.5L510.2 673.3L508.7 674.9L506.9 676.2L505.5 677.8L503.4 678.5L501.4 679.3L499.8 680.7L498.0 681.8L496.5 683.2L494.8 684.5L492.7 684.9L490.8 685.7L488.8 686.4L487.4 688.1L485.2 688.4L483.5 689.5L481.4 689.8L479.9 691.2L478.1 692.3L475.9 692.5L474.5 694.4L471.9 694.0L470.2 695.4L468.6 697.0L466.5 697.5L464.4 698.2L462.1 698.5L460.3 699.6L458.5 700.7L456.7 702.0L455.0 703.2L452.9 703.6L451.3 705.1L449.5 705.8L447.3 705.7L445.7 707.0L443.8 707.4L442.1 708.2L440.5 708.8L438.5 710.3L436.1 710.4L434.1 711.1L432.2 712.3L430.1 712.5L428.3 713.7L426.6 715.1L424.4 714.4L422.6 715.4L420.7 716.3L418.6 716.1L416.7 717.1L414.7 717.6L412.6 718.1L410.4 717.4L408.7 719.4L406.7 719.4L404.6 719.0L402.7 720.0L400.6 719.8L398.7 720.7L396.6 719.9L394.7 721.7L392.5 720.5L390.4 720.6L388.4 721.7L386.3 721.3L384.1 721.8L381.9 721.0L380.0 720.9L378.2 721.2L376.3 720.5L374.3 720.3L372.4 721.2L370.4 721.0L368.4 720.4L366.5 720.1L364.4 720.2L362.5 719.6L360.4 719.6L358.4 720.2L356.4 719.2L354.4 718.5L352.3 719.2L350.4 718.3L348.4 718.4L346.4 717.9L344.4 718.1L342.4 717.8L340.2 718.4L338.2 717.4L336.2 716.5L334.0 717.0L331.9 716.5L329.7 716.7L327.6 715.9L325.6 715.3L323.5 715.4L321.5 715.0L319.6 714.6L317.6 715.1L315.7 714.8L314.0 714.2L312.3 714.3L310.6 714.4L308.0 713.6L305.4 713.7L302.9 714.0L300.7 713.6L298.7 713.1L296.8 712.6L295.1 712.3L293.3 712.3L291.8 712.0L290.9 711.0L287.9 710.3L287.0 709.1L287.0 707.2" stroke="#b4bf1d" stroke-width="3.9"/>
<path d="M291.7 700.1L292.1 699.0L293.2 698.2L294.1 696.9L295.2 695.6L296.3 694.2L297.4 692.5L298.7 690.9L300.1 689.3L301.6 687.6L303.2 685.9L304.6 684.0L305.7 681.8L307.4 680.2L308.9 678.3L311.1 677.1L312.4 675.2L313.9 673.5L315.0 671.6L316.5 670.2L318.1 669.0L319.4 667.4L320.5 665.6L322.5 664.7L323.2 662.5L324.8 661.3L326.4 659.9L327.5 658.0L328.9 656.5L330.8 655.4L331.9 653.6L333.6 652.3L335.0 650.7L336.9 649.6L338.0 647.7L339.6 646.4L340.9 644.7L342.1 642.9L343.3 641.3L344.9 640.0L346.0 638.2L347.7 637.0L349.0 635.4L350.4 633.9L351.6 632.3L353.1 630.7L354.4 629.1L355.6 627.5L357.1 626.0L358.2 624.3L359.9 623.0L361.3 621.5L362.1 619.5L363.7 618.1L365.2 616.7L366.4 615.1L368.1 613.9L369.6 612.5L370.5 610.5L371.6 608.6L373.7 607.7L375.1 606.0L376.7 604.6L377.9 602.9L379.3 601.3L380.6 599.6L382.3 598.3L383.5 596.5L385.2 595.2L386.7 593.9L388.2 592.4L389.2 590.6L390.7 589.2L391.9 587.6L393.3 586.2L395.0 585.2L396.1 583.5L397.5 581.7L399.3 580.3L400.5 578.3L402.4 577.1L403.9 575.5L405.5 574.0L407.5 572.9L408.4 570.9L410.2 569.7L411.0 567.6L413.4 567.2L414.3 565.3L415.6 563.9L417.0 562.7L418.2 561.3L419.4 560.0L421.9 558.8L423.1 556.5L424.9 555.1L426.9 554.2L428.2 552.6L429.3 550.8L431.0 549.6L432.9 548.7L434.4 547.2L435.9 545.5L437.2 544.0L438.8 542.9L440.6 541.9L441.9 540.3L443.2 538.6L444.7 537.1L446.2 535.8L447.9 534.6L449.4 533.1L450.9 531.6L452.5 530.3L454.1 528.9L455.3 527.1L457.1 526.0L458.4 524.3L459.7 522.6L461.4 521.2L462.9 519.7L464.3 518.1L466.1 516.9L467.6 515.4L468.7 513.5L470.5 512.3L471.8 510.6L473.6 509.5L475.1 508.0L476.4 506.3L478.0 505.0L479.7 503.8L481.0 502.1L482.4 500.6L484.0 499.3L485.6 498.2L486.9 496.6L488.5 495.3L489.7 493.7L491.6 492.5L493.3 491.2L494.8 489.5L496.4 488.0L498.2 486.8L500.0 485.5L501.3 483.9L503.3 483.0L504.4 481.1L506.2 480.3L507.7 479.1L509.9 478.0L512.3 477.5L514.2 476.3L516.1 475.1L518.3 474.9L520.1 473.8L521.8 472.6L524.0 472.3L525.6 470.9L527.5 469.8L529.2 468.4L530.7 466.9L532.4 465.6L534.2 464.7L535.4 463.4L536.7 462.5L539.8 461.5L541.7 460.0L543.3 460.9L543.0 463.2L542.5 466.5L541.8 467.7L542.0 466.7L544.0 464.5L545.7 461.8L547.2 460.8L548.3 459.5L549.5 457.9L551.8 457.3L553.9 455.5L555.4 454.7L556.6 453.5L557.9 452.0L559.8 451.3L561.7 450.5L563.5 449.3L565.3 447.9L567.3 446.6L569.5 445.6L571.8 444.4L573.1 443.1L574.8 442.4L576.7 442.0L578.6 441.6L580.3 440.8L581.9 439.3L583.9 438.8L585.8 438.0L587.5 436.7L589.6 436.1L591.6 435.3L593.7 434.4L595.6 433.2L597.6 432.2L599.7 431.0L601.7 430.9L603.1 429.5L605.0 428.8L606.5 427.4L608.8 427.2L610.1 425.3L612.5 425.2L614.1 423.8L616.0 422.8L618.0 421.8L619.9 420.8L621.7 419.6L623.5 418.6L625.3 417.4L627.1 416.3L628.8 415.1L630.9 414.6L632.3 413.1L634.4 412.8L636.2 411.2L638.3 410.5L640.5 409.8L642.3 408.5L644.4 407.6L646.3 406.6L647.9 405.0L650.2 404.8L651.9 403.4L653.8 402.6L655.7 401.6L657.2 400.1L659.3 399.8L661.2 399.1L662.9 398.0L664.6 397.1L667.2 397.5L669.1 395.9L671.4 395.4L673.6 394.4L675.7 393.4L678.1 393.2L680.2 392.4L682.3 391.7L684.4 391.6L686.2 390.7L688.0 390.7L689.2 389.4L690.6 389.3L691.9 389.5" stroke="#b4bf1d" stroke-width="3.2" stroke-opacity="1.0"/>
<path d="M542.4 509.4L541.6 510.2L540.3 510.9L539.7 512.5L538.1 513.5L536.9 514.9L535.0 516.0L533.4 517.5L531.7 519.0L530.1 520.7L528.2 522.1L526.7 523.9L524.9 525.5L523.0 526.8L521.3 528.3L519.8 529.8L518.4 531.2L517.0 532.6L515.6 534.0L514.3 535.5L512.8 536.9L511.3 538.3L510.3 540.1L508.0 540.8L507.0 542.6L505.6 544.1L504.4 545.8L502.7 546.9L501.3 548.3L499.6 549.5L498.6 551.4L497.0 552.6L495.5 554.1L494.1 555.7L492.7 557.2L491.4 558.9L490.0 560.4L488.2 561.6L486.7 563.0L485.2 564.4L484.0 566.2L482.5 567.7L481.0 569.1L479.8 570.9L478.3 572.3L476.4 573.4L475.3 575.3L473.8 576.6L472.7 578.3L471.1 579.6L469.3 580.7L467.9 582.1L466.2 583.3L465.1 585.0L463.8 586.5L462.8 588.4L460.9 589.3L459.6 590.9L457.9 592.0L456.8 593.8L455.0 594.9L453.4 596.1L452.4 598.0L450.8 599.2L449.6 600.9L447.9 602.1L446.5 603.6L444.9 604.9L443.8 606.7L442.5 608.2L441.0 609.6L439.6 611.1L437.9 612.2L436.7 613.9L435.2 615.2L434.1 617.0L432.8 618.5L431.1 619.7L429.9 621.3L429.2 623.5L426.9 624.4L425.8 626.2L425.3 628.4L423.4 629.6L422.2 631.4L421.5 633.4L419.5 634.6L418.6 636.4L417.2 638.0L415.8 639.6L415.1 641.8L413.4 643.2L411.6 644.6L410.8 646.7L409.3 648.1L408.1 649.6L406.6 651.0L405.9 653.0L404.2 654.2L403.2 656.0L401.2 657.0L400.2 658.9L398.7 660.2L397.4 661.9L395.4 662.8L394.2 664.5L393.1 666.3L391.8 667.8L389.9 668.8L388.8 670.6L387.3 671.9L386.0 673.6L384.2 674.8L383.2 676.8L381.4 678.1L379.8 679.6L378.2 681.0L377.1 682.9L375.0 683.8L373.6 685.4L372.6 687.4L371.5 689.2L369.0 689.5L368.2 691.6L366.7 692.8L364.9 693.7L363.4 694.8L361.5 696.2L360.5 698.6L358.1 699.0L356.8 700.9L355.2 702.3L353.1 702.8L351.3 703.7L349.5 704.8L347.7 705.8L345.6 706.3L344.0 708.0L341.9 708.9L340.3 710.1L338.6 711.4L336.5 712.2L334.6 713.3L332.5 714.4L330.5 715.4L328.7 716.9L326.3 717.3L324.2 718.1L322.3 719.1L320.3 719.8L318.5 720.8L316.8 721.6L315.2 722.8L312.4 722.8L309.8 723.1L307.3 723.2L305.0 724.3L302.7 724.3L300.6 723.6L298.8 724.4L297.2 723.9L296.0 723.8" stroke="#b4bf1d" stroke-width="2.8" stroke-opacity="1.0"/>
<path d="M542 509L582 509" stroke="#861a2a" stroke-width="1.6"/>
<path d="M582 509L604 509" stroke="#38b4a9" stroke-width="1.2"/>
</g>
</svg>
<span class="t" style="left:207.7px;top:233.9px;font-size:13.8px;line-height:17px;color:#666666;transform:scaleX(1.1467);">200</span>
<span class="t" style="left:207.7px;top:367.2px;font-size:13.8px;line-height:17px;color:#666666;transform:scaleX(1.1467);">100</span>
<span class="t" style="left:207.7px;top:500.6px;font-size:13.8px;line-height:17px;color:#666666;transform:scaleX(1.0425);">0</span>
<span class="t" style="left:207.7px;top:633.9px;font-size:13.8px;line-height:17px;color:#666666;transform:scaleX(1.1515);">-100</span>
<span class="t" style="left:207.7px;top:767.1px;font-size:13.8px;line-height:17px;color:#666666;transform:scaleX(1.1515);">-200</span>
<span class="t" style="left:271.0px;top:854.9px;font-size:13.4px;line-height:16px;color:#666666;transform:scaleX(1.0915);">-0.4</span>
<span class="t" style="left:400.1px;top:854.9px;font-size:13.4px;line-height:16px;color:#666666;transform:scaleX(1.0915);">-0.2</span>
<span class="t" style="left:531.9px;top:854.9px;font-size:13.4px;line-height:16px;color:#666666;transform:scaleX(1.1113);">0.0</span>
<span class="t" style="left:660.6px;top:854.9px;font-size:13.4px;line-height:16px;color:#666666;transform:scaleX(1.1113);">0.2</span>
<span class="t" style="left:789.2px;top:854.9px;font-size:13.4px;line-height:16px;color:#666666;transform:scaleX(1.1113);">0.4</span>
<span class="t" style="left:418.0px;top:870.1px;font-size:22.3px;line-height:27px;color:#2a2a2a;transform:scaleX(0.9688);font-style:italic;">Mechanische Dehnung in %</span>
<span class="t" style="left:183.2px;top:508.8px;font-size:20px;line-height:22px;font-style:italic;color:#2a2a2a;transform-origin:0 0;transform:rotate(-90deg) scaleX(0.9449) translate(-50%,-50%);transform-origin:0 0;">Standardkraft in MPa</span>
<div class="a" style="left:940.3px;top:217px;width:157.5px;height:85.8px;border:1px solid #b5b5b5;"></div>
<div class="a" style="left:986px;top:217px;width:1px;height:87.60000000000002px;background:#b5b5b5;"></div>
<div class="a" style="left:1034.3px;top:217px;width:1.0px;height:87.60000000000002px;background:#b5b5b5;"></div>
<span class="t" style="left:877.0px;top:199.3px;font-size:15px;line-height:18px;color:#222222;transform:scaleX(1.0104);">Legende</span>
<span class="t" style="left:954.5px;top:199.3px;font-size:15px;line-height:18px;color:#222222;transform:scaleX(1.1689);">Nr</span>
<span class="t" style="left:993.0px;top:199.3px;font-size:15px;line-height:18px;color:#222222;transform:scaleX(1.1340);">mm²</span>
<span class="t" style="left:1060.0px;top:199.3px;font-size:15px;line-height:18px;color:#222222;transform:scaleX(1.1077);">N</span>
<span class="t" style="left:1002.0px;top:178.3px;font-size:15px;line-height:18px;color:#222222;transform:scaleX(0.9995);">S</span>
<span class="t" style="left:1012.5px;top:184.7px;font-size:10px;line-height:12px;color:#222222;transform:scaleX(0.9890);">0</span>
<span class="t" style="left:1053.0px;top:178.3px;font-size:15px;line-height:18px;color:#222222;transform:scaleX(0.9278);">F</span>
<span class="t" style="left:1062.0px;top:183.7px;font-size:10.5px;line-height:13px;color:#222222;transform:scaleX(0.9579);">max</span>
<span class="t" style="left:949.5px;top:222.3px;font-size:13px;line-height:16px;color:#222222;transform:scaleX(1.3333);">⇒</span>
<span class="t" style="left:966.5px;top:221.8px;font-size:13.6px;line-height:16px;color:#222222;transform:scaleX(1.2561);">6</span>
<span class="t" style="left:991.0px;top:221.8px;font-size:13.6px;line-height:16px;color:#222222;transform:scaleX(1.1461);">38,48</span>
<span class="t" style="left:1038.0px;top:221.8px;font-size:13.6px;line-height:16px;color:#222222;transform:scaleX(1.1494);">5242,23</span>
<span class="t" style="left:949.5px;top:244.6px;font-size:13px;line-height:16px;color:#222222;transform:scaleX(1.3333);">⇒</span>
<span class="t" style="left:966.5px;top:244.1px;font-size:13.6px;line-height:16px;color:#222222;transform:scaleX(1.2561);">7</span>
<span class="t" style="left:991.0px;top:244.1px;font-size:13.6px;line-height:16px;color:#222222;transform:scaleX(1.1461);">38,48</span>
<span class="t" style="left:1038.0px;top:244.1px;font-size:13.6px;line-height:16px;color:#222222;transform:scaleX(1.1494);">8812,31</span>
<span class="t" style="left:949.5px;top:266.3px;font-size:13px;line-height:16px;color:#222222;transform:scaleX(1.3333);">⇒</span>
<span class="t" style="left:966.5px;top:265.8px;font-size:13.6px;line-height:16px;color:#222222;transform:scaleX(1.2561);">8</span>
<span class="t" style="left:991.0px;top:265.8px;font-size:13.6px;line-height:16px;color:#222222;transform:scaleX(1.1461);">38,48</span>
<span class="t" style="left:1038.0px;top:265.8px;font-size:13.6px;line-height:16px;color:#222222;transform:scaleX(1.1494);">7066,41</span>
<span class="t" style="left:949.5px;top:288.1px;font-size:13px;line-height:16px;color:#222222;transform:scaleX(1.3333);">⇒</span>
<span class="t" style="left:966.5px;top:287.6px;font-size:13.6px;line-height:16px;color:#222222;transform:scaleX(1.2561);">9</span>
<span class="t" style="left:991.0px;top:287.6px;font-size:13.6px;line-height:16px;color:#222222;transform:scaleX(1.1461);">38,48</span>
<span class="t" style="left:1038.0px;top:287.6px;font-size:13.6px;line-height:16px;color:#222222;transform:scaleX(1.1494);">4718,39</span>
<svg width="1349" height="1000" viewBox="0 0 1349 1000">
<path d="M907.0 218.9 L917.2 223.2 L917.2 233.3 L907.0 238.1 L896.8 233.3 L896.8 223.2 Z" fill="#f7a23c" stroke="#f7a23c" stroke-width="1" stroke-linejoin="round"/>
<path d="M907.0 218.9 L917.2 223.2 L907.0 228.0 L896.8 223.2 Z" fill="#f9b055"/>
<path d="M917.2 223.2 L917.2 233.3 L907.0 238.1 L907.0 228.0 Z" fill="#ee902c"/>
<path d="M907.0 240.9 L917.2 245.2 L917.2 255.3 L907.0 260.1 L896.8 255.3 L896.8 245.2 Z" fill="#3cbcb6" stroke="#3cbcb6" stroke-width="1" stroke-linejoin="round"/>
<path d="M907.0 240.9 L917.2 245.2 L907.0 250.0 L896.8 245.2 Z" fill="#56c8c3"/>
<path d="M917.2 245.2 L917.2 255.3 L907.0 260.1 L907.0 250.0 Z" fill="#2fabA4"/>
<path d="M907.0 262.9 L917.2 267.2 L917.2 277.3 L907.0 282.1 L896.8 277.3 L896.8 267.2 Z" fill="#8d1a2e" stroke="#8d1a2e" stroke-width="1" stroke-linejoin="round"/>
<path d="M907.0 262.9 L917.2 267.2 L907.0 272.0 L896.8 267.2 Z" fill="#a01f38"/>
<path d="M917.2 267.2 L917.2 277.3 L907.0 282.1 L907.0 272.0 Z" fill="#761524"/>
<path d="M907.0 284.9 L917.2 289.2 L917.2 299.3 L907.0 304.1 L896.8 299.3 L896.8 289.2 Z" fill="#b7c221" stroke="#b7c221" stroke-width="1" stroke-linejoin="round"/>
<path d="M907.0 284.9 L917.2 289.2 L907.0 294.0 L896.8 289.2 Z" fill="#c4cd3f"/>
<path d="M917.2 289.2 L917.2 299.3 L907.0 304.1 L907.0 294.0 Z" fill="#a5b01a"/>
</svg>
<div class="a" style="left:985.8px;top:578px;width:112.0px;height:67.2px;border:1px solid #b5b5b5;"></div>
<div class="a" style="left:1034.3px;top:578px;width:1.0px;height:69px;background:#b5b5b5;"></div>
<span class="t" style="left:910.0px;top:538.3px;font-size:15px;line-height:18px;color:#222222;transform:scaleX(1.0281);">Serie</span>
<span class="t" style="left:910.0px;top:559.8px;font-size:15px;line-height:18px;color:#222222;transform:scaleX(1.1250);">n = 4</span>
<span class="t" style="left:925.0px;top:582.8px;font-size:15px;line-height:18px;color:#222222;transform:scaleX(1.0667);">x</span>
<div class="a" style="left:925px;top:584px;width:8px;height:1.2000000000000455px;background:#222222;"></div>
<span class="t" style="left:926.0px;top:604.8px;font-size:15px;line-height:18px;color:#222222;transform:scaleX(0.9333);">s</span>
<span class="t" style="left:910.0px;top:625.8px;font-size:15px;line-height:18px;color:#222222;transform:scaleX(1.1098);">ν [%]</span>
<span class="t" style="left:1002.0px;top:539.3px;font-size:15px;line-height:18px;color:#222222;transform:scaleX(0.9995);">S</span>
<span class="t" style="left:1012.5px;top:545.7px;font-size:10px;line-height:12px;color:#222222;transform:scaleX(0.9890);">0</span>
<span class="t" style="left:1053.0px;top:539.3px;font-size:15px;line-height:18px;color:#222222;transform:scaleX(0.9278);">F</span>
<span class="t" style="left:1062.0px;top:544.7px;font-size:10.5px;line-height:13px;color:#222222;transform:scaleX(0.9579);">max</span>
<span class="t" style="left:993.0px;top:559.8px;font-size:15px;line-height:18px;color:#222222;transform:scaleX(1.1340);">mm²</span>
<span class="t" style="left:1060.0px;top:559.8px;font-size:15px;line-height:18px;color:#222222;transform:scaleX(1.1077);">N</span>
<span class="t" style="left:991.0px;top:582.7px;font-size:13.6px;line-height:16px;color:#222222;transform:scaleX(1.1461);">38,48</span>
<span class="t" style="left:1038.0px;top:582.7px;font-size:13.6px;line-height:16px;color:#222222;transform:scaleX(1.1494);">6459,84</span>
<span class="t" style="left:999.0px;top:604.7px;font-size:13.6px;line-height:16px;color:#222222;transform:scaleX(1.1713);">0,00</span>
<span class="t" style="left:1038.0px;top:604.7px;font-size:13.6px;line-height:16px;color:#222222;transform:scaleX(1.1494);">1863,44</span>
<span class="t" style="left:999.0px;top:626.5px;font-size:13.6px;line-height:16px;color:#222222;transform:scaleX(1.1713);">0,00</span>
<span class="t" style="left:1055.5px;top:626.5px;font-size:13.6px;line-height:16px;color:#222222;transform:scaleX(1.1461);">28,85</span>
<div class="a" style="left:874px;top:778.8px;width:310.20000000000005px;height:42.80000000000007px;background:#e9eaee;"></div>
<div class="a" style="left:1184px;top:702px;width:154.5px;height:197px;background:#e8e9ee;"></div>
<div class="a" style="left:1078.5px;top:785.4px;width:41.200000000000045px;height:26.800000000000068px;background:#ffffff;"></div>
<div class="a" style="left:1078.3px;top:799px;width:1.2000000000000455px;height:13.600000000000023px;background:#666;"></div>
<div class="a" style="left:1078.3px;top:811.3px;width:41.600000000000136px;height:1.3000000000000682px;background:#666;"></div>
<div class="a" style="left:1118.7px;top:799px;width:1.2000000000000455px;height:13.600000000000023px;background:#666;"></div>
<div class="a" style="left:1121px;top:785.4px;width:52.200000000000045px;height:26.800000000000068px;background:#d2d3d9;"></div>
<div class="a" style="left:1121px;top:811.3px;width:52.200000000000045px;height:1.3000000000000682px;background:#74767a;"></div>
<span class="t" style="left:1086.5px;top:789.3px;font-size:15.8px;line-height:19px;color:#2a2a2a;transform:scaleX(0.8764);">7</span>
<span class="t" style="left:1126.0px;top:791.3px;font-size:14.5px;line-height:17px;color:#6a6d72;transform:scaleX(1.0763);">mm</span>
<span class="t" style="left:924.0px;top:788.8px;font-size:15px;line-height:18px;color:#222;transform:scaleX(0.9643);">Durchmesser</span>
<span class="t" style="left:1207.3px;top:864.8px;font-size:15.6px;line-height:19px;color:#222;transform:scaleX(0.9304);">Durchmesser der</span>
<svg width="1349" height="1000" viewBox="0 0 1349 1000" fill="none">
<path d="M1159.8 797.6 H1168.8 L1164.3 802 Z" fill="#333"/>
<path d="M904 787.5 L913.5 792.3 V801 L904 805.8 L894.5 801 V792.3 Z M894.5 792.3 L904 797 L913.5 792.3" stroke="#666" stroke-width="1.2" stroke-linejoin="round"/>
<defs><linearGradient id="cg" x1="0" y1="0" x2="1" y2="0.55"><stop offset="0" stop-color="#3c7ed0"/><stop offset="0.5" stop-color="#3272c4"/><stop offset="1" stop-color="#2a60ae"/></linearGradient></defs>
<path d="M1289 719 C1294 710.5 1306 707.5 1313.5 713 C1319.5 717.5 1320.5 725 1317.5 730.7 L1255.6 842 C1250 851.5 1236 853 1226 847 C1216 841 1213.5 830.5 1218.8 823 Z" fill="url(#cg)"/>
<ellipse cx="1237" cy="832" rx="20.5" ry="16" transform="rotate(30 1237 832)" fill="#2d67b6"/>
<path d="M1223 826.2 L1247.2 839.9" stroke="#ff2a2e" stroke-width="1.6"/>
<circle cx="1223.4" cy="826.4" r="2.6" fill="#ff2a2e"/><circle cx="1246.8" cy="839.7" r="2.6" fill="#ff2a2e"/>
</svg>
<span class="t" style="left:1018.4px;top:979.3px;font-size:15px;line-height:18px;color:#f4f4f4;transform:scaleX(0.9937);">Prüfplatzname: Default</span>
<span class="t" style="left:1190.6px;top:979.3px;font-size:15px;line-height:18px;color:#f4f4f4;transform:scaleX(0.9781);">Benutzer: mitterhubers</span>
</body></html>
